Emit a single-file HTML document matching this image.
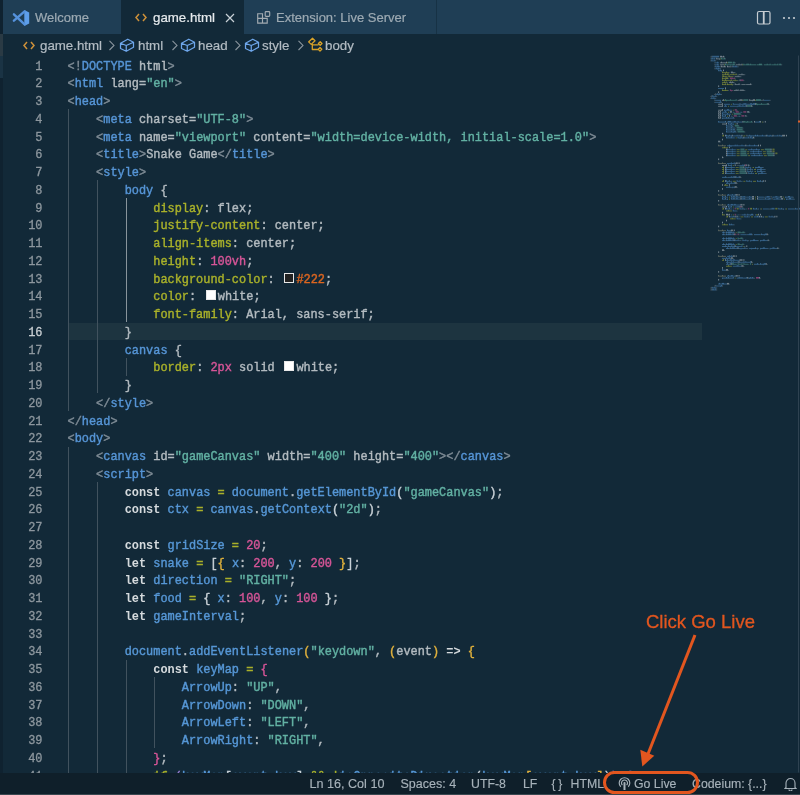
<!DOCTYPE html>
<html><head><meta charset="utf-8">
<style>
*{margin:0;padding:0;box-sizing:border-box}
html,body{width:800px;height:795px;overflow:hidden;background:#122938}
body{position:relative;font-family:"Liberation Sans",sans-serif;will-change:transform}
.abs{position:absolute}
#tabbar{position:absolute;left:0;top:0;width:800px;height:34px;background:#1f3e55}
.tab{position:absolute;top:0;height:34px;font-size:13px;color:#9daab3;white-space:nowrap}
.tab span{position:absolute;top:10px;line-height:16px;-webkit-text-stroke:0.2px currentColor}
#crumbs{position:absolute;left:0;top:35px;width:800px;height:21px;font-size:13.3px;color:#b3bcc3;white-space:nowrap}
#crumbs span{position:absolute;top:3px;line-height:16px;-webkit-text-stroke:0.2px currentColor}
.cl,.ln{position:absolute;height:17.75px;line-height:17.75px;font-family:"Liberation Mono",monospace;font-size:11.92px;white-space:pre}
.cl{left:67.5px;color:#b3bbc0;-webkit-text-stroke:0.4px currentColor}
.ln{left:0;width:42.5px;text-align:right;color:#8d979e;-webkit-text-stroke:0.3px currentColor}
.ln.cur{color:#c8ced2}
.p{color:#7f8c96}.t{color:#5695d6}.a{color:#b3bbc0}.s{color:#62b1a3}.pr{color:#a9b12a}.n{color:#d65597}
.h{color:#dd6620}.k{color:#d5dadd;font-weight:bold;-webkit-text-stroke:0}.v{color:#5697d6}.o{color:#a9b12a}.g{color:#e0b13c}.m{color:#d65597}.w{color:#c8d0d6}.u{color:#9b7fd6}
.sw{display:inline-block;width:10px;height:10px;margin:0 2px 0 2.5px;vertical-align:0px;border:1px solid #e8e8e8}
.swd{background:#222}.sww{background:#fff}
.ig{position:absolute;width:1px;background:#41525e}
.ig.act{background:#88949b}
#curline{position:absolute;left:68px;top:322.5px;width:634px;height:17.5px;background:#1d3440}
#status{position:absolute;left:0;top:773px;width:800px;height:22px;background:#0f1f2a;font-size:12.3px;color:#a7b2ba;white-space:nowrap}
#status span{position:absolute;top:3px;line-height:16px;-webkit-text-stroke:0.15px currentColor}
</style></head><body>
<div id="tabbar">
  <div class="abs" style="left:0;top:0;width:3px;height:34px;background:#0f2230"></div>
  <div class="tab" style="left:3px;width:118px;background:#1f3e55">
    <svg class="abs" style="left:-3px;top:0" width="40" height="35" viewBox="0 0 40 35">
      <path d="M24.3 10 L29.2 12.4 L29.2 23.4 L24.3 25.9 Z" fill="#5d9eea"/>
      <path d="M13.9 14.3 L24.6 24.4 M13.9 20.7 L24.6 11.4" stroke="#5592dc" stroke-width="2.4" stroke-linecap="round"/>
    </svg>
    <span style="left:32px">Welcome</span>
  </div>
  <div class="tab" style="left:121px;width:123px;background:#122938;color:#e6eaed">
    <svg class="abs" style="left:14px;top:13px" width="12" height="9" viewBox="0 0 12 9"><path d="M4 1 L1 4.5 L4 8 M8 1 L11 4.5 L8 8" stroke="#cf923a" stroke-width="1.5" fill="none"/></svg>
    <span style="left:32px;font-size:13.3px;-webkit-text-stroke:0.2px currentColor">game.html</span>
    <svg class="abs" style="left:104px;top:13px" width="10" height="10" viewBox="0 0 10 10"><path d="M1 1 L9 9 M9 1 L1 9" stroke="#c8d0d6" stroke-width="1.2"/></svg>
  </div>
  <div class="tab" style="left:244px;width:193px;background:#1f3e55;border-right:1px solid #173245">
    <svg class="abs" style="left:0;top:0" width="40" height="35" viewBox="244 0 40 35" fill="none" stroke="#a3abb1" stroke-width="1.15">
      <path d="M257.7 13.7 H262.5 V23.1 H257.7 Z M257.7 18.4 H267.2 V23.1 H262.5"/>
      <rect x="265.2" y="11.6" width="4.5" height="4.7" rx="0.8"/>
    </svg>
    <span style="left:32px">Extension: Live Server</span>
  </div>
  <svg class="abs" style="left:756px;top:10px" width="15" height="15" viewBox="0 0 15 15" fill="none" stroke="#c5ccd1" stroke-width="1.2"><rect x="1.5" y="1.5" width="12.5" height="12.5" rx="1.5"/><path d="M7.75 1.5 V14" stroke-width="1.8"/></svg>
  <svg class="abs" style="left:782px;top:16px" width="16" height="4" viewBox="0 0 16 4" fill="#c5ccd1"><circle cx="2" cy="2" r="1.1"/><circle cx="7" cy="2" r="1.1"/><circle cx="12" cy="2" r="1.1"/></svg>
</div>
<div class="abs" style="left:0;top:34px;width:3px;height:22px;background:#2a3a44"></div>
<div class="abs" style="left:0;top:56px;width:3px;height:22px;background:#1a3344"></div>
<div class="abs" style="left:0;top:78px;width:3px;height:695px;background:#0f2230"></div>
<div id="crumbs">
  <svg class="abs" style="left:23px;top:6px" width="12" height="9" viewBox="0 0 12 9"><path d="M4 1 L1 4.5 L4 8 M8 1 L11 4.5 L8 8" stroke="#cf923a" stroke-width="1.5" fill="none"/></svg>
  <span style="left:40px">game.html</span>
  <svg class="abs" style="left:108px;top:5px" width="8" height="11" viewBox="0 0 8 11"><path d="M1.5 0.8 L6 5.4 L1.5 10" stroke="#8a959d" stroke-width="1.1" fill="none"/></svg>
    <span style="left:138px">html</span>
  <svg class="abs" style="left:171px;top:5px" width="8" height="11" viewBox="0 0 8 11"><path d="M1.5 0.8 L6 5.4 L1.5 10" stroke="#8a959d" stroke-width="1.1" fill="none"/></svg>
    <span style="left:198px">head</span>
  <svg class="abs" style="left:234px;top:5px" width="8" height="11" viewBox="0 0 8 11"><path d="M1.5 0.8 L6 5.4 L1.5 10" stroke="#8a959d" stroke-width="1.1" fill="none"/></svg>
    <span style="left:262px">style</span>
  <svg class="abs" style="left:297px;top:5px" width="8" height="11" viewBox="0 0 8 11"><path d="M1.5 0.8 L6 5.4 L1.5 10" stroke="#8a959d" stroke-width="1.1" fill="none"/></svg>
    <span style="left:325px">body</span>
<svg class="abs" style="left:0;top:0;overflow:visible" width="800" height="56" viewBox="0 35 800 56"><g fill="none" stroke="#6ea6ea" stroke-width="1.25" stroke-linejoin="round"><path transform="translate(0 0)" d="M120.5 43.25 L127.75 39.25 L133.5 42.25 L133.5 47.25 L126.25 51.25 L120.5 48.5 Z M120.5 43.25 L126.25 45.5 L133.5 42.25 M126.25 45.5 V51.25"/><path transform="translate(61 0)" d="M120.5 43.25 L127.75 39.25 L133.5 42.25 L133.5 47.25 L126.25 51.25 L120.5 48.5 Z M120.5 43.25 L126.25 45.5 L133.5 42.25 M126.25 45.5 V51.25"/><path transform="translate(125 0)" d="M120.5 43.25 L127.75 39.25 L133.5 42.25 L133.5 47.25 L126.25 51.25 L120.5 48.5 Z M120.5 43.25 L126.25 45.5 L133.5 42.25 M126.25 45.5 V51.25"/></g><g fill="none" stroke="#d9a228" stroke-width="1.3" stroke-linejoin="round"><path d="M312.5 38.3 L315 40.8 L311.2 44.4 L308.6 41.9 Z M312.3 44 V49.5 H318.3 M312.3 44.9 H318.5 M320.2 41.7 L322 43.5 L320.2 45.3 L318.4 43.5 Z M320 47.5 L321.8 49.3 L320 51.1 L318.2 49.3 Z"/></g></svg>
</div>
<div id="curline"></div>
<div class="ig" style="left:68px;top:109.25px;height:301.75px"></div>
<div class="ig" style="left:97px;top:180.25px;height:213.00px"></div>
<div class="ig act" style="left:126px;top:198.00px;height:124.25px"></div>
<div class="ig" style="left:126px;top:357.75px;height:17.75px"></div>
<div class="ig" style="left:68px;top:446.50px;height:337.25px"></div>
<div class="ig" style="left:97px;top:482.00px;height:301.75px"></div>
<div class="ig" style="left:126px;top:659.50px;height:124.25px"></div>
<div class="ig" style="left:154px;top:677.25px;height:71.00px"></div>
<div class="ln" style="top:58.50px">1</div>
<div class="ln" style="top:76.25px">2</div>
<div class="ln" style="top:94.00px">3</div>
<div class="ln" style="top:111.75px">4</div>
<div class="ln" style="top:129.50px">5</div>
<div class="ln" style="top:147.25px">6</div>
<div class="ln" style="top:165.00px">7</div>
<div class="ln" style="top:182.75px">8</div>
<div class="ln" style="top:200.50px">9</div>
<div class="ln" style="top:218.25px">10</div>
<div class="ln" style="top:236.00px">11</div>
<div class="ln" style="top:253.75px">12</div>
<div class="ln" style="top:271.50px">13</div>
<div class="ln" style="top:289.25px">14</div>
<div class="ln" style="top:307.00px">15</div>
<div class="ln cur" style="top:324.75px">16</div>
<div class="ln" style="top:342.50px">17</div>
<div class="ln" style="top:360.25px">18</div>
<div class="ln" style="top:378.00px">19</div>
<div class="ln" style="top:395.75px">20</div>
<div class="ln" style="top:413.50px">21</div>
<div class="ln" style="top:431.25px">22</div>
<div class="ln" style="top:449.00px">23</div>
<div class="ln" style="top:466.75px">24</div>
<div class="ln" style="top:484.50px">25</div>
<div class="ln" style="top:502.25px">26</div>
<div class="ln" style="top:520.00px">27</div>
<div class="ln" style="top:537.75px">28</div>
<div class="ln" style="top:555.50px">29</div>
<div class="ln" style="top:573.25px">30</div>
<div class="ln" style="top:591.00px">31</div>
<div class="ln" style="top:608.75px">32</div>
<div class="ln" style="top:626.50px">33</div>
<div class="ln" style="top:644.25px">34</div>
<div class="ln" style="top:662.00px">35</div>
<div class="ln" style="top:679.75px">36</div>
<div class="ln" style="top:697.50px">37</div>
<div class="ln" style="top:715.25px">38</div>
<div class="ln" style="top:733.00px">39</div>
<div class="ln" style="top:750.75px">40</div>
<div class="ln" style="top:768.50px">41</div>
<div class="cl" style="top:58.50px"><span class="p">&lt;!</span><span class="t">DOCTYPE</span><span class="a"> html</span><span class="p">&gt;</span></div>
<div class="cl" style="top:76.25px"><span class="p">&lt;</span><span class="t">html</span><span class="a"> lang=</span><span class="s">&quot;en&quot;</span><span class="p">&gt;</span></div>
<div class="cl" style="top:94.00px"><span class="p">&lt;</span><span class="t">head</span><span class="p">&gt;</span></div>
<div class="cl" style="top:111.75px"><span class="p">    &lt;</span><span class="t">meta</span><span class="a"> charset=</span><span class="s">&quot;UTF-8&quot;</span><span class="p">&gt;</span></div>
<div class="cl" style="top:129.50px"><span class="p">    &lt;</span><span class="t">meta</span><span class="a"> name=</span><span class="s">&quot;viewport&quot;</span><span class="a"> content=</span><span class="s">&quot;width=device-width, initial-scale=1.0&quot;</span><span class="p">&gt;</span></div>
<div class="cl" style="top:147.25px"><span class="p">    &lt;</span><span class="t">title</span><span class="p">&gt;</span><span class="a">Snake Game</span><span class="p">&lt;/</span><span class="t">title</span><span class="p">&gt;</span></div>
<div class="cl" style="top:165.00px"><span class="p">    &lt;</span><span class="t">style</span><span class="p">&gt;</span></div>
<div class="cl" style="top:182.75px">        <span class="t">body</span><span class="a"> {</span></div>
<div class="cl" style="top:200.50px">            <span class="pr">display</span><span class="a">: flex;</span></div>
<div class="cl" style="top:218.25px">            <span class="pr">justify-content</span><span class="a">: center;</span></div>
<div class="cl" style="top:236.00px">            <span class="pr">align-items</span><span class="a">: center;</span></div>
<div class="cl" style="top:253.75px">            <span class="pr">height</span><span class="a">: </span><span class="n">100vh</span><span class="a">;</span></div>
<div class="cl" style="top:271.50px">            <span class="pr">background-color</span><span class="a">: </span><i class="sw swd"></i><span class="h">#222</span><span class="a">;</span></div>
<div class="cl" style="top:289.25px">            <span class="pr">color</span><span class="a">: </span><i class="sw sww"></i><span class="a">white;</span></div>
<div class="cl" style="top:307.00px">            <span class="pr">font-family</span><span class="a">: Arial, sans-serif;</span></div>
<div class="cl" style="top:324.75px">        <span class="a">}</span></div>
<div class="cl" style="top:342.50px">        <span class="t">canvas</span><span class="a"> {</span></div>
<div class="cl" style="top:360.25px">            <span class="pr">border</span><span class="a">: </span><span class="n">2px</span><span class="a"> solid </span><i class="sw sww"></i><span class="a">white;</span></div>
<div class="cl" style="top:378.00px">        <span class="a">}</span></div>
<div class="cl" style="top:395.75px"><span class="p">    &lt;/</span><span class="t">style</span><span class="p">&gt;</span></div>
<div class="cl" style="top:413.50px"><span class="p">&lt;/</span><span class="t">head</span><span class="p">&gt;</span></div>
<div class="cl" style="top:431.25px"><span class="p">&lt;</span><span class="t">body</span><span class="p">&gt;</span></div>
<div class="cl" style="top:449.00px"><span class="p">    &lt;</span><span class="t">canvas</span><span class="a"> id=</span><span class="s">&quot;gameCanvas&quot;</span><span class="a"> width=</span><span class="s">&quot;400&quot;</span><span class="a"> height=</span><span class="s">&quot;400&quot;</span><span class="p">&gt;&lt;/</span><span class="t">canvas</span><span class="p">&gt;</span></div>
<div class="cl" style="top:466.75px"><span class="p">    &lt;</span><span class="t">script</span><span class="p">&gt;</span></div>
<div class="cl" style="top:484.50px">        <span class="k">const</span><span class="v"> canvas</span><span class="o"> = </span><span class="v">document</span><span class="a">.</span><span class="v">getElementById</span><span class="w">(</span><span class="s">&quot;gameCanvas&quot;</span><span class="w">)</span><span class="a">;</span></div>
<div class="cl" style="top:502.25px">        <span class="k">const</span><span class="v"> ctx</span><span class="o"> = </span><span class="v">canvas</span><span class="a">.</span><span class="v">getContext</span><span class="w">(</span><span class="s">&quot;2d&quot;</span><span class="w">)</span><span class="a">;</span></div>
<div class="cl" style="top:520.00px"></div>
<div class="cl" style="top:537.75px">        <span class="k">const</span><span class="v"> gridSize</span><span class="o"> = </span><span class="n">20</span><span class="a">;</span></div>
<div class="cl" style="top:555.50px">        <span class="k">let</span><span class="v"> snake</span><span class="o"> = </span><span class="w">[</span><span class="g">{</span><span class="v"> x</span><span class="a">: </span><span class="n">200</span><span class="a">, </span><span class="v">y</span><span class="a">: </span><span class="n">200</span><span class="g"> }</span><span class="w">]</span><span class="a">;</span></div>
<div class="cl" style="top:573.25px">        <span class="k">let</span><span class="v"> direction</span><span class="o"> = </span><span class="s">&quot;RIGHT&quot;</span><span class="a">;</span></div>
<div class="cl" style="top:591.00px">        <span class="k">let</span><span class="v"> food</span><span class="o"> = </span><span class="w">{</span><span class="v"> x</span><span class="a">: </span><span class="n">100</span><span class="a">, </span><span class="v">y</span><span class="a">: </span><span class="n">100</span><span class="w"> }</span><span class="a">;</span></div>
<div class="cl" style="top:608.75px">        <span class="k">let</span><span class="v"> gameInterval</span><span class="a">;</span></div>
<div class="cl" style="top:626.50px"></div>
<div class="cl" style="top:644.25px">        <span class="v">document</span><span class="a">.</span><span class="v">addEventListener</span><span class="g">(</span><span class="s">&quot;keydown&quot;</span><span class="a">, </span><span class="g">(</span><span class="a">event</span><span class="g">)</span><span class="k"> =&gt; </span><span class="g">{</span></div>
<div class="cl" style="top:662.00px">            <span class="k">const</span><span class="v"> keyMap</span><span class="o"> = </span><span class="m">{</span></div>
<div class="cl" style="top:679.75px">                <span class="v">ArrowUp</span><span class="a">: </span><span class="s">&quot;UP&quot;</span><span class="a">,</span></div>
<div class="cl" style="top:697.50px">                <span class="v">ArrowDown</span><span class="a">: </span><span class="s">&quot;DOWN&quot;</span><span class="a">,</span></div>
<div class="cl" style="top:715.25px">                <span class="v">ArrowLeft</span><span class="a">: </span><span class="s">&quot;LEFT&quot;</span><span class="a">,</span></div>
<div class="cl" style="top:733.00px">                <span class="v">ArrowRight</span><span class="a">: </span><span class="s">&quot;RIGHT&quot;</span><span class="a">,</span></div>
<div class="cl" style="top:750.75px">            <span class="m">}</span><span class="a">;</span></div>
<div class="cl" style="top:768.50px">            <span class="o">if</span><span class="u"> (</span><span class="v">keyMap</span><span class="w">[</span><span class="v">event</span><span class="a">.</span><span class="v">key</span><span class="w">]</span><span class="o"> &amp;&amp; </span><span class="o">!</span><span class="v">isOppositeDirection</span><span class="w">(</span><span class="v">keyMap</span><span class="g">[</span><span class="v">event</span><span class="a">.</span><span class="v">key</span><span class="g">]</span><span class="w">)</span><span class="u">)</span><span class="u"> {</span></div>
<svg class="abs" style="left:0;top:0" width="800" height="795">
<g opacity="0.65"><rect x="710.50" y="56.40" width="0.85" height="1.0" fill="#7f8c96" fill-opacity="0.85"/>
<rect x="711.47" y="55.80" width="0.85" height="1.6" fill="#7f8c96" fill-opacity="1"/>
<rect x="712.44" y="55.80" width="0.85" height="1.6" fill="#5b9bd8" fill-opacity="1"/>
<rect x="713.41" y="55.80" width="0.85" height="1.6" fill="#5b9bd8" fill-opacity="1"/>
<rect x="714.38" y="55.80" width="0.85" height="1.6" fill="#5b9bd8" fill-opacity="1"/>
<rect x="715.35" y="55.80" width="0.85" height="1.6" fill="#5b9bd8" fill-opacity="1"/>
<rect x="716.32" y="55.80" width="0.85" height="1.6" fill="#5b9bd8" fill-opacity="1"/>
<rect x="717.29" y="55.80" width="0.85" height="1.6" fill="#5b9bd8" fill-opacity="1"/>
<rect x="718.26" y="55.80" width="0.85" height="1.6" fill="#5b9bd8" fill-opacity="1"/>
<rect x="720.20" y="55.80" width="0.85" height="1.6" fill="#c3cbd1" fill-opacity="1"/>
<rect x="721.17" y="55.80" width="0.85" height="1.6" fill="#c3cbd1" fill-opacity="1"/>
<rect x="722.14" y="56.40" width="0.85" height="1.0" fill="#c3cbd1" fill-opacity="0.85"/>
<rect x="723.11" y="55.80" width="0.85" height="1.6" fill="#c3cbd1" fill-opacity="1"/>
<rect x="724.08" y="56.40" width="0.85" height="1.0" fill="#7f8c96" fill-opacity="0.85"/>
<rect x="710.50" y="58.38" width="0.85" height="1.0" fill="#7f8c96" fill-opacity="0.85"/>
<rect x="711.47" y="57.77" width="0.85" height="1.6" fill="#5b9bd8" fill-opacity="1"/>
<rect x="712.44" y="57.77" width="0.85" height="1.6" fill="#5b9bd8" fill-opacity="1"/>
<rect x="713.41" y="58.38" width="0.85" height="1.0" fill="#5b9bd8" fill-opacity="0.85"/>
<rect x="714.38" y="57.77" width="0.85" height="1.6" fill="#5b9bd8" fill-opacity="1"/>
<rect x="716.32" y="57.77" width="0.85" height="1.6" fill="#c3cbd1" fill-opacity="1"/>
<rect x="717.29" y="58.38" width="0.85" height="1.0" fill="#c3cbd1" fill-opacity="0.85"/>
<rect x="718.26" y="58.38" width="0.85" height="1.0" fill="#c3cbd1" fill-opacity="0.85"/>
<rect x="719.23" y="58.27" width="0.85" height="1.5" fill="#c3cbd1" fill-opacity="0.85"/>
<rect x="720.20" y="58.38" width="0.85" height="1.0" fill="#b7bd3a" fill-opacity="0.85"/>
<rect x="721.17" y="57.77" width="0.85" height="1.6" fill="#62b1a3" fill-opacity="1"/>
<rect x="722.14" y="58.38" width="0.85" height="1.0" fill="#62b1a3" fill-opacity="0.85"/>
<rect x="723.11" y="58.38" width="0.85" height="1.0" fill="#62b1a3" fill-opacity="0.85"/>
<rect x="724.08" y="57.77" width="0.85" height="1.6" fill="#62b1a3" fill-opacity="1"/>
<rect x="725.05" y="58.38" width="0.85" height="1.0" fill="#7f8c96" fill-opacity="0.85"/>
<rect x="710.50" y="60.35" width="0.85" height="1.0" fill="#7f8c96" fill-opacity="0.85"/>
<rect x="711.47" y="59.75" width="0.85" height="1.6" fill="#5b9bd8" fill-opacity="1"/>
<rect x="712.44" y="60.35" width="0.85" height="1.0" fill="#5b9bd8" fill-opacity="0.85"/>
<rect x="713.41" y="60.35" width="0.85" height="1.0" fill="#5b9bd8" fill-opacity="0.85"/>
<rect x="714.38" y="59.75" width="0.85" height="1.6" fill="#5b9bd8" fill-opacity="1"/>
<rect x="715.35" y="60.35" width="0.85" height="1.0" fill="#7f8c96" fill-opacity="0.85"/>
<rect x="714.38" y="62.33" width="0.85" height="1.0" fill="#7f8c96" fill-opacity="0.85"/>
<rect x="715.35" y="62.33" width="0.85" height="1.0" fill="#5b9bd8" fill-opacity="0.85"/>
<rect x="716.32" y="62.33" width="0.85" height="1.0" fill="#5b9bd8" fill-opacity="0.85"/>
<rect x="717.29" y="61.73" width="0.85" height="1.6" fill="#5b9bd8" fill-opacity="1"/>
<rect x="718.26" y="62.33" width="0.85" height="1.0" fill="#5b9bd8" fill-opacity="0.85"/>
<rect x="720.20" y="62.33" width="0.85" height="1.0" fill="#c3cbd1" fill-opacity="0.85"/>
<rect x="721.17" y="61.73" width="0.85" height="1.6" fill="#c3cbd1" fill-opacity="1"/>
<rect x="722.14" y="62.33" width="0.85" height="1.0" fill="#c3cbd1" fill-opacity="0.85"/>
<rect x="723.11" y="62.33" width="0.85" height="1.0" fill="#c3cbd1" fill-opacity="0.85"/>
<rect x="724.08" y="62.33" width="0.85" height="1.0" fill="#c3cbd1" fill-opacity="0.85"/>
<rect x="725.05" y="62.33" width="0.85" height="1.0" fill="#c3cbd1" fill-opacity="0.85"/>
<rect x="726.02" y="61.73" width="0.85" height="1.6" fill="#c3cbd1" fill-opacity="1"/>
<rect x="726.99" y="62.33" width="0.85" height="1.0" fill="#b7bd3a" fill-opacity="0.85"/>
<rect x="727.96" y="61.73" width="0.85" height="1.6" fill="#62b1a3" fill-opacity="1"/>
<rect x="728.93" y="61.73" width="0.85" height="1.6" fill="#62b1a3" fill-opacity="1"/>
<rect x="729.90" y="61.73" width="0.85" height="1.6" fill="#62b1a3" fill-opacity="1"/>
<rect x="730.87" y="61.73" width="0.85" height="1.6" fill="#62b1a3" fill-opacity="1"/>
<rect x="731.84" y="62.53" width="0.85" height="0.8" fill="#62b1a3" fill-opacity="0.5"/>
<rect x="732.81" y="61.73" width="0.85" height="1.6" fill="#62b1a3" fill-opacity="1"/>
<rect x="733.78" y="61.73" width="0.85" height="1.6" fill="#62b1a3" fill-opacity="1"/>
<rect x="734.75" y="62.33" width="0.85" height="1.0" fill="#7f8c96" fill-opacity="0.85"/>
<rect x="714.38" y="64.30" width="0.85" height="1.0" fill="#7f8c96" fill-opacity="0.85"/>
<rect x="715.35" y="64.30" width="0.85" height="1.0" fill="#5b9bd8" fill-opacity="0.85"/>
<rect x="716.32" y="64.30" width="0.85" height="1.0" fill="#5b9bd8" fill-opacity="0.85"/>
<rect x="717.29" y="63.70" width="0.85" height="1.6" fill="#5b9bd8" fill-opacity="1"/>
<rect x="718.26" y="64.30" width="0.85" height="1.0" fill="#5b9bd8" fill-opacity="0.85"/>
<rect x="720.20" y="64.30" width="0.85" height="1.0" fill="#c3cbd1" fill-opacity="0.85"/>
<rect x="721.17" y="64.30" width="0.85" height="1.0" fill="#c3cbd1" fill-opacity="0.85"/>
<rect x="722.14" y="64.30" width="0.85" height="1.0" fill="#c3cbd1" fill-opacity="0.85"/>
<rect x="723.11" y="64.30" width="0.85" height="1.0" fill="#c3cbd1" fill-opacity="0.85"/>
<rect x="724.08" y="64.30" width="0.85" height="1.0" fill="#b7bd3a" fill-opacity="0.85"/>
<rect x="725.05" y="63.70" width="0.85" height="1.6" fill="#62b1a3" fill-opacity="1"/>
<rect x="726.02" y="64.30" width="0.85" height="1.0" fill="#62b1a3" fill-opacity="0.85"/>
<rect x="726.99" y="64.30" width="0.85" height="1.0" fill="#62b1a3" fill-opacity="0.85"/>
<rect x="727.96" y="64.30" width="0.85" height="1.0" fill="#62b1a3" fill-opacity="0.85"/>
<rect x="728.93" y="64.30" width="0.85" height="1.0" fill="#62b1a3" fill-opacity="0.85"/>
<rect x="729.90" y="64.20" width="0.85" height="1.5" fill="#62b1a3" fill-opacity="0.85"/>
<rect x="730.87" y="64.30" width="0.85" height="1.0" fill="#62b1a3" fill-opacity="0.85"/>
<rect x="731.84" y="64.30" width="0.85" height="1.0" fill="#62b1a3" fill-opacity="0.85"/>
<rect x="732.81" y="63.70" width="0.85" height="1.6" fill="#62b1a3" fill-opacity="1"/>
<rect x="733.78" y="63.70" width="0.85" height="1.6" fill="#62b1a3" fill-opacity="1"/>
<rect x="735.72" y="64.30" width="0.85" height="1.0" fill="#c3cbd1" fill-opacity="0.85"/>
<rect x="736.69" y="64.30" width="0.85" height="1.0" fill="#c3cbd1" fill-opacity="0.85"/>
<rect x="737.66" y="64.30" width="0.85" height="1.0" fill="#c3cbd1" fill-opacity="0.85"/>
<rect x="738.63" y="63.70" width="0.85" height="1.6" fill="#c3cbd1" fill-opacity="1"/>
<rect x="739.60" y="64.30" width="0.85" height="1.0" fill="#c3cbd1" fill-opacity="0.85"/>
<rect x="740.57" y="64.30" width="0.85" height="1.0" fill="#c3cbd1" fill-opacity="0.85"/>
<rect x="741.54" y="63.70" width="0.85" height="1.6" fill="#c3cbd1" fill-opacity="1"/>
<rect x="742.51" y="64.30" width="0.85" height="1.0" fill="#b7bd3a" fill-opacity="0.85"/>
<rect x="743.48" y="63.70" width="0.85" height="1.6" fill="#62b1a3" fill-opacity="1"/>
<rect x="744.45" y="64.30" width="0.85" height="1.0" fill="#62b1a3" fill-opacity="0.85"/>
<rect x="745.42" y="64.30" width="0.85" height="1.0" fill="#62b1a3" fill-opacity="0.85"/>
<rect x="746.39" y="63.70" width="0.85" height="1.6" fill="#62b1a3" fill-opacity="1"/>
<rect x="747.36" y="63.70" width="0.85" height="1.6" fill="#62b1a3" fill-opacity="1"/>
<rect x="748.33" y="63.70" width="0.85" height="1.6" fill="#62b1a3" fill-opacity="1"/>
<rect x="749.30" y="64.30" width="0.85" height="1.0" fill="#62b1a3" fill-opacity="0.85"/>
<rect x="750.27" y="63.70" width="0.85" height="1.6" fill="#62b1a3" fill-opacity="1"/>
<rect x="751.24" y="64.30" width="0.85" height="1.0" fill="#62b1a3" fill-opacity="0.85"/>
<rect x="752.21" y="64.30" width="0.85" height="1.0" fill="#62b1a3" fill-opacity="0.85"/>
<rect x="753.18" y="64.30" width="0.85" height="1.0" fill="#62b1a3" fill-opacity="0.85"/>
<rect x="754.15" y="64.30" width="0.85" height="1.0" fill="#62b1a3" fill-opacity="0.85"/>
<rect x="755.12" y="64.30" width="0.85" height="1.0" fill="#62b1a3" fill-opacity="0.85"/>
<rect x="756.09" y="64.50" width="0.85" height="0.8" fill="#62b1a3" fill-opacity="0.5"/>
<rect x="757.06" y="64.30" width="0.85" height="1.0" fill="#62b1a3" fill-opacity="0.85"/>
<rect x="758.03" y="64.30" width="0.85" height="1.0" fill="#62b1a3" fill-opacity="0.85"/>
<rect x="759.00" y="63.70" width="0.85" height="1.6" fill="#62b1a3" fill-opacity="1"/>
<rect x="759.97" y="63.70" width="0.85" height="1.6" fill="#62b1a3" fill-opacity="1"/>
<rect x="760.94" y="63.70" width="0.85" height="1.6" fill="#62b1a3" fill-opacity="1"/>
<rect x="761.91" y="64.50" width="0.85" height="0.8" fill="#62b1a3" fill-opacity="0.5"/>
<rect x="763.85" y="64.30" width="0.85" height="1.0" fill="#62b1a3" fill-opacity="0.85"/>
<rect x="764.82" y="64.30" width="0.85" height="1.0" fill="#62b1a3" fill-opacity="0.85"/>
<rect x="765.79" y="64.30" width="0.85" height="1.0" fill="#62b1a3" fill-opacity="0.85"/>
<rect x="766.76" y="63.70" width="0.85" height="1.6" fill="#62b1a3" fill-opacity="1"/>
<rect x="767.73" y="64.30" width="0.85" height="1.0" fill="#62b1a3" fill-opacity="0.85"/>
<rect x="768.70" y="64.30" width="0.85" height="1.0" fill="#62b1a3" fill-opacity="0.85"/>
<rect x="769.67" y="63.70" width="0.85" height="1.6" fill="#62b1a3" fill-opacity="1"/>
<rect x="770.64" y="64.50" width="0.85" height="0.8" fill="#62b1a3" fill-opacity="0.5"/>
<rect x="771.61" y="64.30" width="0.85" height="1.0" fill="#62b1a3" fill-opacity="0.85"/>
<rect x="772.58" y="64.30" width="0.85" height="1.0" fill="#62b1a3" fill-opacity="0.85"/>
<rect x="773.55" y="64.30" width="0.85" height="1.0" fill="#62b1a3" fill-opacity="0.85"/>
<rect x="774.52" y="63.70" width="0.85" height="1.6" fill="#62b1a3" fill-opacity="1"/>
<rect x="775.49" y="64.30" width="0.85" height="1.0" fill="#62b1a3" fill-opacity="0.85"/>
<rect x="776.46" y="64.30" width="0.85" height="1.0" fill="#62b1a3" fill-opacity="0.85"/>
<rect x="777.43" y="63.70" width="0.85" height="1.6" fill="#62b1a3" fill-opacity="1"/>
<rect x="778.40" y="64.50" width="0.85" height="0.8" fill="#62b1a3" fill-opacity="0.5"/>
<rect x="779.37" y="63.70" width="0.85" height="1.6" fill="#62b1a3" fill-opacity="1"/>
<rect x="780.34" y="63.70" width="0.85" height="1.6" fill="#62b1a3" fill-opacity="1"/>
<rect x="781.31" y="64.30" width="0.85" height="1.0" fill="#7f8c96" fill-opacity="0.85"/>
<rect x="714.38" y="66.28" width="0.85" height="1.0" fill="#7f8c96" fill-opacity="0.85"/>
<rect x="715.35" y="65.68" width="0.85" height="1.6" fill="#5b9bd8" fill-opacity="1"/>
<rect x="716.32" y="66.28" width="0.85" height="1.0" fill="#5b9bd8" fill-opacity="0.85"/>
<rect x="717.29" y="65.68" width="0.85" height="1.6" fill="#5b9bd8" fill-opacity="1"/>
<rect x="718.26" y="65.68" width="0.85" height="1.6" fill="#5b9bd8" fill-opacity="1"/>
<rect x="719.23" y="66.28" width="0.85" height="1.0" fill="#5b9bd8" fill-opacity="0.85"/>
<rect x="720.20" y="66.28" width="0.85" height="1.0" fill="#7f8c96" fill-opacity="0.85"/>
<rect x="721.17" y="65.68" width="0.85" height="1.6" fill="#c3cbd1" fill-opacity="1"/>
<rect x="722.14" y="66.28" width="0.85" height="1.0" fill="#c3cbd1" fill-opacity="0.85"/>
<rect x="723.11" y="66.28" width="0.85" height="1.0" fill="#c3cbd1" fill-opacity="0.85"/>
<rect x="724.08" y="65.68" width="0.85" height="1.6" fill="#c3cbd1" fill-opacity="1"/>
<rect x="725.05" y="66.28" width="0.85" height="1.0" fill="#c3cbd1" fill-opacity="0.85"/>
<rect x="726.99" y="65.68" width="0.85" height="1.6" fill="#c3cbd1" fill-opacity="1"/>
<rect x="727.96" y="66.28" width="0.85" height="1.0" fill="#c3cbd1" fill-opacity="0.85"/>
<rect x="728.93" y="66.28" width="0.85" height="1.0" fill="#c3cbd1" fill-opacity="0.85"/>
<rect x="729.90" y="66.28" width="0.85" height="1.0" fill="#c3cbd1" fill-opacity="0.85"/>
<rect x="730.87" y="66.28" width="0.85" height="1.0" fill="#7f8c96" fill-opacity="0.85"/>
<rect x="731.84" y="65.68" width="0.85" height="1.6" fill="#7f8c96" fill-opacity="1"/>
<rect x="732.81" y="65.68" width="0.85" height="1.6" fill="#5b9bd8" fill-opacity="1"/>
<rect x="733.78" y="66.28" width="0.85" height="1.0" fill="#5b9bd8" fill-opacity="0.85"/>
<rect x="734.75" y="65.68" width="0.85" height="1.6" fill="#5b9bd8" fill-opacity="1"/>
<rect x="735.72" y="65.68" width="0.85" height="1.6" fill="#5b9bd8" fill-opacity="1"/>
<rect x="736.69" y="66.28" width="0.85" height="1.0" fill="#5b9bd8" fill-opacity="0.85"/>
<rect x="737.66" y="66.28" width="0.85" height="1.0" fill="#7f8c96" fill-opacity="0.85"/>
<rect x="714.38" y="68.25" width="0.85" height="1.0" fill="#7f8c96" fill-opacity="0.85"/>
<rect x="715.35" y="68.25" width="0.85" height="1.0" fill="#5b9bd8" fill-opacity="0.85"/>
<rect x="716.32" y="67.65" width="0.85" height="1.6" fill="#5b9bd8" fill-opacity="1"/>
<rect x="717.29" y="68.15" width="0.85" height="1.5" fill="#5b9bd8" fill-opacity="0.85"/>
<rect x="718.26" y="67.65" width="0.85" height="1.6" fill="#5b9bd8" fill-opacity="1"/>
<rect x="719.23" y="68.25" width="0.85" height="1.0" fill="#5b9bd8" fill-opacity="0.85"/>
<rect x="720.20" y="68.25" width="0.85" height="1.0" fill="#7f8c96" fill-opacity="0.85"/>
<rect x="718.26" y="69.62" width="0.85" height="1.6" fill="#5b9bd8" fill-opacity="1"/>
<rect x="719.23" y="70.22" width="0.85" height="1.0" fill="#5b9bd8" fill-opacity="0.85"/>
<rect x="720.20" y="69.62" width="0.85" height="1.6" fill="#5b9bd8" fill-opacity="1"/>
<rect x="721.17" y="70.12" width="0.85" height="1.5" fill="#5b9bd8" fill-opacity="0.85"/>
<rect x="723.11" y="69.62" width="0.85" height="1.6" fill="#c3cbd1" fill-opacity="1"/>
<rect x="722.14" y="71.60" width="0.85" height="1.6" fill="#b7bd3a" fill-opacity="1"/>
<rect x="723.11" y="72.20" width="0.85" height="1.0" fill="#b7bd3a" fill-opacity="0.85"/>
<rect x="724.08" y="72.20" width="0.85" height="1.0" fill="#b7bd3a" fill-opacity="0.85"/>
<rect x="725.05" y="72.10" width="0.85" height="1.5" fill="#b7bd3a" fill-opacity="0.85"/>
<rect x="726.02" y="71.60" width="0.85" height="1.6" fill="#b7bd3a" fill-opacity="1"/>
<rect x="726.99" y="72.20" width="0.85" height="1.0" fill="#b7bd3a" fill-opacity="0.85"/>
<rect x="727.96" y="72.10" width="0.85" height="1.5" fill="#b7bd3a" fill-opacity="0.85"/>
<rect x="728.93" y="72.40" width="0.85" height="0.8" fill="#c3cbd1" fill-opacity="0.5"/>
<rect x="730.87" y="71.60" width="0.85" height="1.6" fill="#c3cbd1" fill-opacity="1"/>
<rect x="731.84" y="71.60" width="0.85" height="1.6" fill="#c3cbd1" fill-opacity="1"/>
<rect x="732.81" y="72.20" width="0.85" height="1.0" fill="#c3cbd1" fill-opacity="0.85"/>
<rect x="733.78" y="72.20" width="0.85" height="1.0" fill="#c3cbd1" fill-opacity="0.85"/>
<rect x="734.75" y="72.40" width="0.85" height="0.8" fill="#c3cbd1" fill-opacity="0.5"/>
<rect x="722.14" y="74.08" width="0.85" height="1.5" fill="#b7bd3a" fill-opacity="0.85"/>
<rect x="723.11" y="74.17" width="0.85" height="1.0" fill="#b7bd3a" fill-opacity="0.85"/>
<rect x="724.08" y="74.17" width="0.85" height="1.0" fill="#b7bd3a" fill-opacity="0.85"/>
<rect x="725.05" y="73.58" width="0.85" height="1.6" fill="#b7bd3a" fill-opacity="1"/>
<rect x="726.02" y="74.17" width="0.85" height="1.0" fill="#b7bd3a" fill-opacity="0.85"/>
<rect x="726.99" y="73.58" width="0.85" height="1.6" fill="#b7bd3a" fill-opacity="1"/>
<rect x="727.96" y="74.08" width="0.85" height="1.5" fill="#b7bd3a" fill-opacity="0.85"/>
<rect x="728.93" y="74.38" width="0.85" height="0.8" fill="#b7bd3a" fill-opacity="0.5"/>
<rect x="729.90" y="74.17" width="0.85" height="1.0" fill="#b7bd3a" fill-opacity="0.85"/>
<rect x="730.87" y="74.17" width="0.85" height="1.0" fill="#b7bd3a" fill-opacity="0.85"/>
<rect x="731.84" y="74.17" width="0.85" height="1.0" fill="#b7bd3a" fill-opacity="0.85"/>
<rect x="732.81" y="73.58" width="0.85" height="1.6" fill="#b7bd3a" fill-opacity="1"/>
<rect x="733.78" y="74.17" width="0.85" height="1.0" fill="#b7bd3a" fill-opacity="0.85"/>
<rect x="734.75" y="74.17" width="0.85" height="1.0" fill="#b7bd3a" fill-opacity="0.85"/>
<rect x="735.72" y="73.58" width="0.85" height="1.6" fill="#b7bd3a" fill-opacity="1"/>
<rect x="736.69" y="74.38" width="0.85" height="0.8" fill="#c3cbd1" fill-opacity="0.5"/>
<rect x="738.63" y="74.17" width="0.85" height="1.0" fill="#c3cbd1" fill-opacity="0.85"/>
<rect x="739.60" y="74.17" width="0.85" height="1.0" fill="#c3cbd1" fill-opacity="0.85"/>
<rect x="740.57" y="74.17" width="0.85" height="1.0" fill="#c3cbd1" fill-opacity="0.85"/>
<rect x="741.54" y="73.58" width="0.85" height="1.6" fill="#c3cbd1" fill-opacity="1"/>
<rect x="742.51" y="74.17" width="0.85" height="1.0" fill="#c3cbd1" fill-opacity="0.85"/>
<rect x="743.48" y="74.17" width="0.85" height="1.0" fill="#c3cbd1" fill-opacity="0.85"/>
<rect x="744.45" y="74.38" width="0.85" height="0.8" fill="#c3cbd1" fill-opacity="0.5"/>
<rect x="722.14" y="76.15" width="0.85" height="1.0" fill="#b7bd3a" fill-opacity="0.85"/>
<rect x="723.11" y="75.55" width="0.85" height="1.6" fill="#b7bd3a" fill-opacity="1"/>
<rect x="724.08" y="76.15" width="0.85" height="1.0" fill="#b7bd3a" fill-opacity="0.85"/>
<rect x="725.05" y="76.05" width="0.85" height="1.5" fill="#b7bd3a" fill-opacity="0.85"/>
<rect x="726.02" y="76.15" width="0.85" height="1.0" fill="#b7bd3a" fill-opacity="0.85"/>
<rect x="726.99" y="76.35" width="0.85" height="0.8" fill="#b7bd3a" fill-opacity="0.5"/>
<rect x="727.96" y="76.15" width="0.85" height="1.0" fill="#b7bd3a" fill-opacity="0.85"/>
<rect x="728.93" y="75.55" width="0.85" height="1.6" fill="#b7bd3a" fill-opacity="1"/>
<rect x="729.90" y="76.15" width="0.85" height="1.0" fill="#b7bd3a" fill-opacity="0.85"/>
<rect x="730.87" y="76.15" width="0.85" height="1.0" fill="#b7bd3a" fill-opacity="0.85"/>
<rect x="731.84" y="76.15" width="0.85" height="1.0" fill="#b7bd3a" fill-opacity="0.85"/>
<rect x="732.81" y="76.35" width="0.85" height="0.8" fill="#c3cbd1" fill-opacity="0.5"/>
<rect x="734.75" y="76.15" width="0.85" height="1.0" fill="#c3cbd1" fill-opacity="0.85"/>
<rect x="735.72" y="76.15" width="0.85" height="1.0" fill="#c3cbd1" fill-opacity="0.85"/>
<rect x="736.69" y="76.15" width="0.85" height="1.0" fill="#c3cbd1" fill-opacity="0.85"/>
<rect x="737.66" y="75.55" width="0.85" height="1.6" fill="#c3cbd1" fill-opacity="1"/>
<rect x="738.63" y="76.15" width="0.85" height="1.0" fill="#c3cbd1" fill-opacity="0.85"/>
<rect x="739.60" y="76.15" width="0.85" height="1.0" fill="#c3cbd1" fill-opacity="0.85"/>
<rect x="740.57" y="76.35" width="0.85" height="0.8" fill="#c3cbd1" fill-opacity="0.5"/>
<rect x="722.14" y="77.53" width="0.85" height="1.6" fill="#b7bd3a" fill-opacity="1"/>
<rect x="723.11" y="78.12" width="0.85" height="1.0" fill="#b7bd3a" fill-opacity="0.85"/>
<rect x="724.08" y="78.12" width="0.85" height="1.0" fill="#b7bd3a" fill-opacity="0.85"/>
<rect x="725.05" y="78.03" width="0.85" height="1.5" fill="#b7bd3a" fill-opacity="0.85"/>
<rect x="726.02" y="77.53" width="0.85" height="1.6" fill="#b7bd3a" fill-opacity="1"/>
<rect x="726.99" y="77.53" width="0.85" height="1.6" fill="#b7bd3a" fill-opacity="1"/>
<rect x="727.96" y="78.33" width="0.85" height="0.8" fill="#c3cbd1" fill-opacity="0.5"/>
<rect x="729.90" y="77.53" width="0.85" height="1.6" fill="#d65597" fill-opacity="1"/>
<rect x="730.87" y="77.53" width="0.85" height="1.6" fill="#d65597" fill-opacity="1"/>
<rect x="731.84" y="77.53" width="0.85" height="1.6" fill="#d65597" fill-opacity="1"/>
<rect x="732.81" y="78.12" width="0.85" height="1.0" fill="#d65597" fill-opacity="0.85"/>
<rect x="733.78" y="77.53" width="0.85" height="1.6" fill="#d65597" fill-opacity="1"/>
<rect x="734.75" y="78.33" width="0.85" height="0.8" fill="#c3cbd1" fill-opacity="0.5"/>
<rect x="722.14" y="79.50" width="0.85" height="1.6" fill="#b7bd3a" fill-opacity="1"/>
<rect x="723.11" y="80.10" width="0.85" height="1.0" fill="#b7bd3a" fill-opacity="0.85"/>
<rect x="724.08" y="80.10" width="0.85" height="1.0" fill="#b7bd3a" fill-opacity="0.85"/>
<rect x="725.05" y="79.50" width="0.85" height="1.6" fill="#b7bd3a" fill-opacity="1"/>
<rect x="726.02" y="80.00" width="0.85" height="1.5" fill="#b7bd3a" fill-opacity="0.85"/>
<rect x="726.99" y="80.10" width="0.85" height="1.0" fill="#b7bd3a" fill-opacity="0.85"/>
<rect x="727.96" y="80.10" width="0.85" height="1.0" fill="#b7bd3a" fill-opacity="0.85"/>
<rect x="728.93" y="80.10" width="0.85" height="1.0" fill="#b7bd3a" fill-opacity="0.85"/>
<rect x="729.90" y="80.10" width="0.85" height="1.0" fill="#b7bd3a" fill-opacity="0.85"/>
<rect x="730.87" y="79.50" width="0.85" height="1.6" fill="#b7bd3a" fill-opacity="1"/>
<rect x="731.84" y="80.30" width="0.85" height="0.8" fill="#b7bd3a" fill-opacity="0.5"/>
<rect x="732.81" y="80.10" width="0.85" height="1.0" fill="#b7bd3a" fill-opacity="0.85"/>
<rect x="733.78" y="80.10" width="0.85" height="1.0" fill="#b7bd3a" fill-opacity="0.85"/>
<rect x="734.75" y="79.50" width="0.85" height="1.6" fill="#b7bd3a" fill-opacity="1"/>
<rect x="735.72" y="80.10" width="0.85" height="1.0" fill="#b7bd3a" fill-opacity="0.85"/>
<rect x="736.69" y="80.10" width="0.85" height="1.0" fill="#b7bd3a" fill-opacity="0.85"/>
<rect x="737.66" y="80.30" width="0.85" height="0.8" fill="#c3cbd1" fill-opacity="0.5"/>
<rect x="739.60" y="79.50" width="0.85" height="1.6" fill="#c3cbd1" fill-opacity="1"/>
<rect x="740.57" y="79.50" width="0.85" height="1.6" fill="#d65597" fill-opacity="1"/>
<rect x="741.54" y="79.50" width="0.85" height="1.6" fill="#d65597" fill-opacity="1"/>
<rect x="742.51" y="79.50" width="0.85" height="1.6" fill="#d65597" fill-opacity="1"/>
<rect x="743.48" y="80.30" width="0.85" height="0.8" fill="#c3cbd1" fill-opacity="0.5"/>
<rect x="722.14" y="82.08" width="0.85" height="1.0" fill="#b7bd3a" fill-opacity="0.85"/>
<rect x="723.11" y="82.08" width="0.85" height="1.0" fill="#b7bd3a" fill-opacity="0.85"/>
<rect x="724.08" y="81.48" width="0.85" height="1.6" fill="#b7bd3a" fill-opacity="1"/>
<rect x="725.05" y="82.08" width="0.85" height="1.0" fill="#b7bd3a" fill-opacity="0.85"/>
<rect x="726.02" y="82.08" width="0.85" height="1.0" fill="#b7bd3a" fill-opacity="0.85"/>
<rect x="726.99" y="82.28" width="0.85" height="0.8" fill="#c3cbd1" fill-opacity="0.5"/>
<rect x="728.93" y="82.08" width="0.85" height="1.0" fill="#c3cbd1" fill-opacity="0.85"/>
<rect x="729.90" y="81.48" width="0.85" height="1.6" fill="#c3cbd1" fill-opacity="1"/>
<rect x="730.87" y="82.08" width="0.85" height="1.0" fill="#c3cbd1" fill-opacity="0.85"/>
<rect x="731.84" y="81.48" width="0.85" height="1.6" fill="#c3cbd1" fill-opacity="1"/>
<rect x="732.81" y="82.08" width="0.85" height="1.0" fill="#c3cbd1" fill-opacity="0.85"/>
<rect x="733.78" y="82.28" width="0.85" height="0.8" fill="#c3cbd1" fill-opacity="0.5"/>
<rect x="722.14" y="83.45" width="0.85" height="1.6" fill="#b7bd3a" fill-opacity="1"/>
<rect x="723.11" y="84.05" width="0.85" height="1.0" fill="#b7bd3a" fill-opacity="0.85"/>
<rect x="724.08" y="84.05" width="0.85" height="1.0" fill="#b7bd3a" fill-opacity="0.85"/>
<rect x="725.05" y="83.45" width="0.85" height="1.6" fill="#b7bd3a" fill-opacity="1"/>
<rect x="726.02" y="84.25" width="0.85" height="0.8" fill="#b7bd3a" fill-opacity="0.5"/>
<rect x="726.99" y="83.45" width="0.85" height="1.6" fill="#b7bd3a" fill-opacity="1"/>
<rect x="727.96" y="84.05" width="0.85" height="1.0" fill="#b7bd3a" fill-opacity="0.85"/>
<rect x="728.93" y="84.05" width="0.85" height="1.0" fill="#b7bd3a" fill-opacity="0.85"/>
<rect x="729.90" y="84.05" width="0.85" height="1.0" fill="#b7bd3a" fill-opacity="0.85"/>
<rect x="730.87" y="83.45" width="0.85" height="1.6" fill="#b7bd3a" fill-opacity="1"/>
<rect x="731.84" y="83.95" width="0.85" height="1.5" fill="#b7bd3a" fill-opacity="0.85"/>
<rect x="732.81" y="84.25" width="0.85" height="0.8" fill="#c3cbd1" fill-opacity="0.5"/>
<rect x="734.75" y="83.45" width="0.85" height="1.6" fill="#c3cbd1" fill-opacity="1"/>
<rect x="735.72" y="84.05" width="0.85" height="1.0" fill="#c3cbd1" fill-opacity="0.85"/>
<rect x="736.69" y="84.05" width="0.85" height="1.0" fill="#c3cbd1" fill-opacity="0.85"/>
<rect x="737.66" y="84.05" width="0.85" height="1.0" fill="#c3cbd1" fill-opacity="0.85"/>
<rect x="738.63" y="83.45" width="0.85" height="1.6" fill="#c3cbd1" fill-opacity="1"/>
<rect x="739.60" y="84.25" width="0.85" height="0.8" fill="#c3cbd1" fill-opacity="0.5"/>
<rect x="741.54" y="84.05" width="0.85" height="1.0" fill="#c3cbd1" fill-opacity="0.85"/>
<rect x="742.51" y="84.05" width="0.85" height="1.0" fill="#c3cbd1" fill-opacity="0.85"/>
<rect x="743.48" y="84.05" width="0.85" height="1.0" fill="#c3cbd1" fill-opacity="0.85"/>
<rect x="744.45" y="84.05" width="0.85" height="1.0" fill="#c3cbd1" fill-opacity="0.85"/>
<rect x="745.42" y="84.25" width="0.85" height="0.8" fill="#c3cbd1" fill-opacity="0.5"/>
<rect x="746.39" y="84.05" width="0.85" height="1.0" fill="#c3cbd1" fill-opacity="0.85"/>
<rect x="747.36" y="84.05" width="0.85" height="1.0" fill="#c3cbd1" fill-opacity="0.85"/>
<rect x="748.33" y="84.05" width="0.85" height="1.0" fill="#c3cbd1" fill-opacity="0.85"/>
<rect x="749.30" y="84.05" width="0.85" height="1.0" fill="#c3cbd1" fill-opacity="0.85"/>
<rect x="750.27" y="83.45" width="0.85" height="1.6" fill="#c3cbd1" fill-opacity="1"/>
<rect x="751.24" y="84.25" width="0.85" height="0.8" fill="#c3cbd1" fill-opacity="0.5"/>
<rect x="718.26" y="85.43" width="0.85" height="1.6" fill="#c3cbd1" fill-opacity="1"/>
<rect x="718.26" y="88.00" width="0.85" height="1.0" fill="#5b9bd8" fill-opacity="0.85"/>
<rect x="719.23" y="88.00" width="0.85" height="1.0" fill="#5b9bd8" fill-opacity="0.85"/>
<rect x="720.20" y="88.00" width="0.85" height="1.0" fill="#5b9bd8" fill-opacity="0.85"/>
<rect x="721.17" y="88.00" width="0.85" height="1.0" fill="#5b9bd8" fill-opacity="0.85"/>
<rect x="722.14" y="88.00" width="0.85" height="1.0" fill="#5b9bd8" fill-opacity="0.85"/>
<rect x="723.11" y="88.00" width="0.85" height="1.0" fill="#5b9bd8" fill-opacity="0.85"/>
<rect x="725.05" y="87.40" width="0.85" height="1.6" fill="#c3cbd1" fill-opacity="1"/>
<rect x="722.14" y="89.38" width="0.85" height="1.6" fill="#b7bd3a" fill-opacity="1"/>
<rect x="723.11" y="89.97" width="0.85" height="1.0" fill="#b7bd3a" fill-opacity="0.85"/>
<rect x="724.08" y="89.97" width="0.85" height="1.0" fill="#b7bd3a" fill-opacity="0.85"/>
<rect x="725.05" y="89.38" width="0.85" height="1.6" fill="#b7bd3a" fill-opacity="1"/>
<rect x="726.02" y="89.97" width="0.85" height="1.0" fill="#b7bd3a" fill-opacity="0.85"/>
<rect x="726.99" y="89.97" width="0.85" height="1.0" fill="#b7bd3a" fill-opacity="0.85"/>
<rect x="727.96" y="90.17" width="0.85" height="0.8" fill="#c3cbd1" fill-opacity="0.5"/>
<rect x="729.90" y="89.38" width="0.85" height="1.6" fill="#d65597" fill-opacity="1"/>
<rect x="730.87" y="89.88" width="0.85" height="1.5" fill="#d65597" fill-opacity="0.85"/>
<rect x="731.84" y="89.97" width="0.85" height="1.0" fill="#d65597" fill-opacity="0.85"/>
<rect x="733.78" y="89.97" width="0.85" height="1.0" fill="#c3cbd1" fill-opacity="0.85"/>
<rect x="734.75" y="89.97" width="0.85" height="1.0" fill="#c3cbd1" fill-opacity="0.85"/>
<rect x="735.72" y="89.38" width="0.85" height="1.6" fill="#c3cbd1" fill-opacity="1"/>
<rect x="736.69" y="89.97" width="0.85" height="1.0" fill="#c3cbd1" fill-opacity="0.85"/>
<rect x="737.66" y="89.38" width="0.85" height="1.6" fill="#c3cbd1" fill-opacity="1"/>
<rect x="739.60" y="89.97" width="0.85" height="1.0" fill="#c3cbd1" fill-opacity="0.85"/>
<rect x="740.57" y="89.38" width="0.85" height="1.6" fill="#c3cbd1" fill-opacity="1"/>
<rect x="741.54" y="89.97" width="0.85" height="1.0" fill="#c3cbd1" fill-opacity="0.85"/>
<rect x="742.51" y="89.38" width="0.85" height="1.6" fill="#c3cbd1" fill-opacity="1"/>
<rect x="743.48" y="89.97" width="0.85" height="1.0" fill="#c3cbd1" fill-opacity="0.85"/>
<rect x="744.45" y="90.17" width="0.85" height="0.8" fill="#c3cbd1" fill-opacity="0.5"/>
<rect x="718.26" y="91.35" width="0.85" height="1.6" fill="#c3cbd1" fill-opacity="1"/>
<rect x="714.38" y="93.92" width="0.85" height="1.0" fill="#7f8c96" fill-opacity="0.85"/>
<rect x="715.35" y="93.33" width="0.85" height="1.6" fill="#7f8c96" fill-opacity="1"/>
<rect x="716.32" y="93.92" width="0.85" height="1.0" fill="#5b9bd8" fill-opacity="0.85"/>
<rect x="717.29" y="93.33" width="0.85" height="1.6" fill="#5b9bd8" fill-opacity="1"/>
<rect x="718.26" y="93.83" width="0.85" height="1.5" fill="#5b9bd8" fill-opacity="0.85"/>
<rect x="719.23" y="93.33" width="0.85" height="1.6" fill="#5b9bd8" fill-opacity="1"/>
<rect x="720.20" y="93.92" width="0.85" height="1.0" fill="#5b9bd8" fill-opacity="0.85"/>
<rect x="721.17" y="93.92" width="0.85" height="1.0" fill="#7f8c96" fill-opacity="0.85"/>
<rect x="710.50" y="95.90" width="0.85" height="1.0" fill="#7f8c96" fill-opacity="0.85"/>
<rect x="711.47" y="95.30" width="0.85" height="1.6" fill="#7f8c96" fill-opacity="1"/>
<rect x="712.44" y="95.30" width="0.85" height="1.6" fill="#5b9bd8" fill-opacity="1"/>
<rect x="713.41" y="95.90" width="0.85" height="1.0" fill="#5b9bd8" fill-opacity="0.85"/>
<rect x="714.38" y="95.90" width="0.85" height="1.0" fill="#5b9bd8" fill-opacity="0.85"/>
<rect x="715.35" y="95.30" width="0.85" height="1.6" fill="#5b9bd8" fill-opacity="1"/>
<rect x="716.32" y="95.90" width="0.85" height="1.0" fill="#7f8c96" fill-opacity="0.85"/>
<rect x="710.50" y="97.88" width="0.85" height="1.0" fill="#7f8c96" fill-opacity="0.85"/>
<rect x="711.47" y="97.28" width="0.85" height="1.6" fill="#5b9bd8" fill-opacity="1"/>
<rect x="712.44" y="97.88" width="0.85" height="1.0" fill="#5b9bd8" fill-opacity="0.85"/>
<rect x="713.41" y="97.28" width="0.85" height="1.6" fill="#5b9bd8" fill-opacity="1"/>
<rect x="714.38" y="97.78" width="0.85" height="1.5" fill="#5b9bd8" fill-opacity="0.85"/>
<rect x="715.35" y="97.88" width="0.85" height="1.0" fill="#7f8c96" fill-opacity="0.85"/>
<rect x="714.38" y="99.85" width="0.85" height="1.0" fill="#7f8c96" fill-opacity="0.85"/>
<rect x="715.35" y="99.85" width="0.85" height="1.0" fill="#5b9bd8" fill-opacity="0.85"/>
<rect x="716.32" y="99.85" width="0.85" height="1.0" fill="#5b9bd8" fill-opacity="0.85"/>
<rect x="717.29" y="99.85" width="0.85" height="1.0" fill="#5b9bd8" fill-opacity="0.85"/>
<rect x="718.26" y="99.85" width="0.85" height="1.0" fill="#5b9bd8" fill-opacity="0.85"/>
<rect x="719.23" y="99.85" width="0.85" height="1.0" fill="#5b9bd8" fill-opacity="0.85"/>
<rect x="720.20" y="99.85" width="0.85" height="1.0" fill="#5b9bd8" fill-opacity="0.85"/>
<rect x="722.14" y="99.85" width="0.85" height="1.0" fill="#c3cbd1" fill-opacity="0.85"/>
<rect x="723.11" y="99.25" width="0.85" height="1.6" fill="#c3cbd1" fill-opacity="1"/>
<rect x="724.08" y="99.85" width="0.85" height="1.0" fill="#b7bd3a" fill-opacity="0.85"/>
<rect x="725.05" y="99.25" width="0.85" height="1.6" fill="#62b1a3" fill-opacity="1"/>
<rect x="726.02" y="99.75" width="0.85" height="1.5" fill="#62b1a3" fill-opacity="0.85"/>
<rect x="726.99" y="99.85" width="0.85" height="1.0" fill="#62b1a3" fill-opacity="0.85"/>
<rect x="727.96" y="99.85" width="0.85" height="1.0" fill="#62b1a3" fill-opacity="0.85"/>
<rect x="728.93" y="99.85" width="0.85" height="1.0" fill="#62b1a3" fill-opacity="0.85"/>
<rect x="729.90" y="99.25" width="0.85" height="1.6" fill="#62b1a3" fill-opacity="1"/>
<rect x="730.87" y="99.85" width="0.85" height="1.0" fill="#62b1a3" fill-opacity="0.85"/>
<rect x="731.84" y="99.85" width="0.85" height="1.0" fill="#62b1a3" fill-opacity="0.85"/>
<rect x="732.81" y="99.85" width="0.85" height="1.0" fill="#62b1a3" fill-opacity="0.85"/>
<rect x="733.78" y="99.85" width="0.85" height="1.0" fill="#62b1a3" fill-opacity="0.85"/>
<rect x="734.75" y="99.85" width="0.85" height="1.0" fill="#62b1a3" fill-opacity="0.85"/>
<rect x="735.72" y="99.25" width="0.85" height="1.6" fill="#62b1a3" fill-opacity="1"/>
<rect x="737.66" y="99.85" width="0.85" height="1.0" fill="#c3cbd1" fill-opacity="0.85"/>
<rect x="738.63" y="99.85" width="0.85" height="1.0" fill="#c3cbd1" fill-opacity="0.85"/>
<rect x="739.60" y="99.25" width="0.85" height="1.6" fill="#c3cbd1" fill-opacity="1"/>
<rect x="740.57" y="99.25" width="0.85" height="1.6" fill="#c3cbd1" fill-opacity="1"/>
<rect x="741.54" y="99.25" width="0.85" height="1.6" fill="#c3cbd1" fill-opacity="1"/>
<rect x="742.51" y="99.85" width="0.85" height="1.0" fill="#b7bd3a" fill-opacity="0.85"/>
<rect x="743.48" y="99.25" width="0.85" height="1.6" fill="#62b1a3" fill-opacity="1"/>
<rect x="744.45" y="99.25" width="0.85" height="1.6" fill="#62b1a3" fill-opacity="1"/>
<rect x="745.42" y="99.25" width="0.85" height="1.6" fill="#62b1a3" fill-opacity="1"/>
<rect x="746.39" y="99.25" width="0.85" height="1.6" fill="#62b1a3" fill-opacity="1"/>
<rect x="747.36" y="99.25" width="0.85" height="1.6" fill="#62b1a3" fill-opacity="1"/>
<rect x="749.30" y="99.25" width="0.85" height="1.6" fill="#c3cbd1" fill-opacity="1"/>
<rect x="750.27" y="99.85" width="0.85" height="1.0" fill="#c3cbd1" fill-opacity="0.85"/>
<rect x="751.24" y="99.85" width="0.85" height="1.0" fill="#c3cbd1" fill-opacity="0.85"/>
<rect x="752.21" y="99.75" width="0.85" height="1.5" fill="#c3cbd1" fill-opacity="0.85"/>
<rect x="753.18" y="99.25" width="0.85" height="1.6" fill="#c3cbd1" fill-opacity="1"/>
<rect x="754.15" y="99.25" width="0.85" height="1.6" fill="#c3cbd1" fill-opacity="1"/>
<rect x="755.12" y="99.85" width="0.85" height="1.0" fill="#b7bd3a" fill-opacity="0.85"/>
<rect x="756.09" y="99.25" width="0.85" height="1.6" fill="#62b1a3" fill-opacity="1"/>
<rect x="757.06" y="99.25" width="0.85" height="1.6" fill="#62b1a3" fill-opacity="1"/>
<rect x="758.03" y="99.25" width="0.85" height="1.6" fill="#62b1a3" fill-opacity="1"/>
<rect x="759.00" y="99.25" width="0.85" height="1.6" fill="#62b1a3" fill-opacity="1"/>
<rect x="759.97" y="99.25" width="0.85" height="1.6" fill="#62b1a3" fill-opacity="1"/>
<rect x="760.94" y="99.85" width="0.85" height="1.0" fill="#7f8c96" fill-opacity="0.85"/>
<rect x="761.91" y="99.85" width="0.85" height="1.0" fill="#7f8c96" fill-opacity="0.85"/>
<rect x="762.88" y="99.25" width="0.85" height="1.6" fill="#7f8c96" fill-opacity="1"/>
<rect x="763.85" y="99.85" width="0.85" height="1.0" fill="#5b9bd8" fill-opacity="0.85"/>
<rect x="764.82" y="99.85" width="0.85" height="1.0" fill="#5b9bd8" fill-opacity="0.85"/>
<rect x="765.79" y="99.85" width="0.85" height="1.0" fill="#5b9bd8" fill-opacity="0.85"/>
<rect x="766.76" y="99.85" width="0.85" height="1.0" fill="#5b9bd8" fill-opacity="0.85"/>
<rect x="767.73" y="99.85" width="0.85" height="1.0" fill="#5b9bd8" fill-opacity="0.85"/>
<rect x="768.70" y="99.85" width="0.85" height="1.0" fill="#5b9bd8" fill-opacity="0.85"/>
<rect x="769.67" y="99.85" width="0.85" height="1.0" fill="#7f8c96" fill-opacity="0.85"/>
<rect x="714.38" y="101.83" width="0.85" height="1.0" fill="#7f8c96" fill-opacity="0.85"/>
<rect x="715.35" y="101.83" width="0.85" height="1.0" fill="#5b9bd8" fill-opacity="0.85"/>
<rect x="716.32" y="101.83" width="0.85" height="1.0" fill="#5b9bd8" fill-opacity="0.85"/>
<rect x="717.29" y="101.83" width="0.85" height="1.0" fill="#5b9bd8" fill-opacity="0.85"/>
<rect x="718.26" y="101.83" width="0.85" height="1.0" fill="#5b9bd8" fill-opacity="0.85"/>
<rect x="719.23" y="101.73" width="0.85" height="1.5" fill="#5b9bd8" fill-opacity="0.85"/>
<rect x="720.20" y="101.23" width="0.85" height="1.6" fill="#5b9bd8" fill-opacity="1"/>
<rect x="721.17" y="101.83" width="0.85" height="1.0" fill="#7f8c96" fill-opacity="0.85"/>
<rect x="718.26" y="103.80" width="0.85" height="1.0" fill="#c9cfd3" fill-opacity="0.85"/>
<rect x="719.23" y="103.80" width="0.85" height="1.0" fill="#c9cfd3" fill-opacity="0.85"/>
<rect x="720.20" y="103.80" width="0.85" height="1.0" fill="#c9cfd3" fill-opacity="0.85"/>
<rect x="721.17" y="103.80" width="0.85" height="1.0" fill="#c9cfd3" fill-opacity="0.85"/>
<rect x="722.14" y="103.20" width="0.85" height="1.6" fill="#c9cfd3" fill-opacity="1"/>
<rect x="724.08" y="103.80" width="0.85" height="1.0" fill="#5b9bd8" fill-opacity="0.85"/>
<rect x="725.05" y="103.80" width="0.85" height="1.0" fill="#5b9bd8" fill-opacity="0.85"/>
<rect x="726.02" y="103.80" width="0.85" height="1.0" fill="#5b9bd8" fill-opacity="0.85"/>
<rect x="726.99" y="103.80" width="0.85" height="1.0" fill="#5b9bd8" fill-opacity="0.85"/>
<rect x="727.96" y="103.80" width="0.85" height="1.0" fill="#5b9bd8" fill-opacity="0.85"/>
<rect x="728.93" y="103.80" width="0.85" height="1.0" fill="#5b9bd8" fill-opacity="0.85"/>
<rect x="730.87" y="103.80" width="0.85" height="1.0" fill="#b7bd3a" fill-opacity="0.85"/>
<rect x="732.81" y="103.20" width="0.85" height="1.6" fill="#5b9bd8" fill-opacity="1"/>
<rect x="733.78" y="103.80" width="0.85" height="1.0" fill="#5b9bd8" fill-opacity="0.85"/>
<rect x="734.75" y="103.80" width="0.85" height="1.0" fill="#5b9bd8" fill-opacity="0.85"/>
<rect x="735.72" y="103.80" width="0.85" height="1.0" fill="#5b9bd8" fill-opacity="0.85"/>
<rect x="736.69" y="103.80" width="0.85" height="1.0" fill="#5b9bd8" fill-opacity="0.85"/>
<rect x="737.66" y="103.80" width="0.85" height="1.0" fill="#5b9bd8" fill-opacity="0.85"/>
<rect x="738.63" y="103.80" width="0.85" height="1.0" fill="#5b9bd8" fill-opacity="0.85"/>
<rect x="739.60" y="103.20" width="0.85" height="1.6" fill="#5b9bd8" fill-opacity="1"/>
<rect x="740.57" y="104.00" width="0.85" height="0.8" fill="#c3cbd1" fill-opacity="0.5"/>
<rect x="741.54" y="103.70" width="0.85" height="1.5" fill="#5b9bd8" fill-opacity="0.85"/>
<rect x="742.51" y="103.80" width="0.85" height="1.0" fill="#5b9bd8" fill-opacity="0.85"/>
<rect x="743.48" y="103.20" width="0.85" height="1.6" fill="#5b9bd8" fill-opacity="1"/>
<rect x="744.45" y="103.20" width="0.85" height="1.6" fill="#5b9bd8" fill-opacity="1"/>
<rect x="745.42" y="103.20" width="0.85" height="1.6" fill="#5b9bd8" fill-opacity="1"/>
<rect x="746.39" y="103.80" width="0.85" height="1.0" fill="#5b9bd8" fill-opacity="0.85"/>
<rect x="747.36" y="103.80" width="0.85" height="1.0" fill="#5b9bd8" fill-opacity="0.85"/>
<rect x="748.33" y="103.80" width="0.85" height="1.0" fill="#5b9bd8" fill-opacity="0.85"/>
<rect x="749.30" y="103.80" width="0.85" height="1.0" fill="#5b9bd8" fill-opacity="0.85"/>
<rect x="750.27" y="103.20" width="0.85" height="1.6" fill="#5b9bd8" fill-opacity="1"/>
<rect x="751.24" y="103.20" width="0.85" height="1.6" fill="#5b9bd8" fill-opacity="1"/>
<rect x="752.21" y="103.70" width="0.85" height="1.5" fill="#5b9bd8" fill-opacity="0.85"/>
<rect x="753.18" y="103.20" width="0.85" height="1.6" fill="#5b9bd8" fill-opacity="1"/>
<rect x="754.15" y="103.20" width="0.85" height="1.6" fill="#5b9bd8" fill-opacity="1"/>
<rect x="755.12" y="103.20" width="0.85" height="1.6" fill="#c3cbd1" fill-opacity="1"/>
<rect x="756.09" y="103.20" width="0.85" height="1.6" fill="#62b1a3" fill-opacity="1"/>
<rect x="757.06" y="103.70" width="0.85" height="1.5" fill="#62b1a3" fill-opacity="0.85"/>
<rect x="758.03" y="103.80" width="0.85" height="1.0" fill="#62b1a3" fill-opacity="0.85"/>
<rect x="759.00" y="103.80" width="0.85" height="1.0" fill="#62b1a3" fill-opacity="0.85"/>
<rect x="759.97" y="103.80" width="0.85" height="1.0" fill="#62b1a3" fill-opacity="0.85"/>
<rect x="760.94" y="103.20" width="0.85" height="1.6" fill="#62b1a3" fill-opacity="1"/>
<rect x="761.91" y="103.80" width="0.85" height="1.0" fill="#62b1a3" fill-opacity="0.85"/>
<rect x="762.88" y="103.80" width="0.85" height="1.0" fill="#62b1a3" fill-opacity="0.85"/>
<rect x="763.85" y="103.80" width="0.85" height="1.0" fill="#62b1a3" fill-opacity="0.85"/>
<rect x="764.82" y="103.80" width="0.85" height="1.0" fill="#62b1a3" fill-opacity="0.85"/>
<rect x="765.79" y="103.80" width="0.85" height="1.0" fill="#62b1a3" fill-opacity="0.85"/>
<rect x="766.76" y="103.20" width="0.85" height="1.6" fill="#62b1a3" fill-opacity="1"/>
<rect x="767.73" y="103.20" width="0.85" height="1.6" fill="#c3cbd1" fill-opacity="1"/>
<rect x="768.70" y="104.00" width="0.85" height="0.8" fill="#c3cbd1" fill-opacity="0.5"/>
<rect x="718.26" y="105.78" width="0.85" height="1.0" fill="#c9cfd3" fill-opacity="0.85"/>
<rect x="719.23" y="105.78" width="0.85" height="1.0" fill="#c9cfd3" fill-opacity="0.85"/>
<rect x="720.20" y="105.78" width="0.85" height="1.0" fill="#c9cfd3" fill-opacity="0.85"/>
<rect x="721.17" y="105.78" width="0.85" height="1.0" fill="#c9cfd3" fill-opacity="0.85"/>
<rect x="722.14" y="105.18" width="0.85" height="1.6" fill="#c9cfd3" fill-opacity="1"/>
<rect x="724.08" y="105.78" width="0.85" height="1.0" fill="#5b9bd8" fill-opacity="0.85"/>
<rect x="725.05" y="105.18" width="0.85" height="1.6" fill="#5b9bd8" fill-opacity="1"/>
<rect x="726.02" y="105.78" width="0.85" height="1.0" fill="#5b9bd8" fill-opacity="0.85"/>
<rect x="727.96" y="105.78" width="0.85" height="1.0" fill="#b7bd3a" fill-opacity="0.85"/>
<rect x="729.90" y="105.78" width="0.85" height="1.0" fill="#5b9bd8" fill-opacity="0.85"/>
<rect x="730.87" y="105.78" width="0.85" height="1.0" fill="#5b9bd8" fill-opacity="0.85"/>
<rect x="731.84" y="105.78" width="0.85" height="1.0" fill="#5b9bd8" fill-opacity="0.85"/>
<rect x="732.81" y="105.78" width="0.85" height="1.0" fill="#5b9bd8" fill-opacity="0.85"/>
<rect x="733.78" y="105.78" width="0.85" height="1.0" fill="#5b9bd8" fill-opacity="0.85"/>
<rect x="734.75" y="105.78" width="0.85" height="1.0" fill="#5b9bd8" fill-opacity="0.85"/>
<rect x="735.72" y="105.98" width="0.85" height="0.8" fill="#c3cbd1" fill-opacity="0.5"/>
<rect x="736.69" y="105.68" width="0.85" height="1.5" fill="#5b9bd8" fill-opacity="0.85"/>
<rect x="737.66" y="105.78" width="0.85" height="1.0" fill="#5b9bd8" fill-opacity="0.85"/>
<rect x="738.63" y="105.18" width="0.85" height="1.6" fill="#5b9bd8" fill-opacity="1"/>
<rect x="739.60" y="105.18" width="0.85" height="1.6" fill="#5b9bd8" fill-opacity="1"/>
<rect x="740.57" y="105.78" width="0.85" height="1.0" fill="#5b9bd8" fill-opacity="0.85"/>
<rect x="741.54" y="105.78" width="0.85" height="1.0" fill="#5b9bd8" fill-opacity="0.85"/>
<rect x="742.51" y="105.18" width="0.85" height="1.6" fill="#5b9bd8" fill-opacity="1"/>
<rect x="743.48" y="105.78" width="0.85" height="1.0" fill="#5b9bd8" fill-opacity="0.85"/>
<rect x="744.45" y="105.78" width="0.85" height="1.0" fill="#5b9bd8" fill-opacity="0.85"/>
<rect x="745.42" y="105.18" width="0.85" height="1.6" fill="#5b9bd8" fill-opacity="1"/>
<rect x="746.39" y="105.18" width="0.85" height="1.6" fill="#c3cbd1" fill-opacity="1"/>
<rect x="747.36" y="105.18" width="0.85" height="1.6" fill="#62b1a3" fill-opacity="1"/>
<rect x="748.33" y="105.18" width="0.85" height="1.6" fill="#62b1a3" fill-opacity="1"/>
<rect x="749.30" y="105.18" width="0.85" height="1.6" fill="#62b1a3" fill-opacity="1"/>
<rect x="750.27" y="105.18" width="0.85" height="1.6" fill="#62b1a3" fill-opacity="1"/>
<rect x="751.24" y="105.18" width="0.85" height="1.6" fill="#c3cbd1" fill-opacity="1"/>
<rect x="752.21" y="105.98" width="0.85" height="0.8" fill="#c3cbd1" fill-opacity="0.5"/>
<rect x="718.26" y="109.72" width="0.85" height="1.0" fill="#c9cfd3" fill-opacity="0.85"/>
<rect x="719.23" y="109.72" width="0.85" height="1.0" fill="#c9cfd3" fill-opacity="0.85"/>
<rect x="720.20" y="109.72" width="0.85" height="1.0" fill="#c9cfd3" fill-opacity="0.85"/>
<rect x="721.17" y="109.72" width="0.85" height="1.0" fill="#c9cfd3" fill-opacity="0.85"/>
<rect x="722.14" y="109.12" width="0.85" height="1.6" fill="#c9cfd3" fill-opacity="1"/>
<rect x="724.08" y="109.62" width="0.85" height="1.5" fill="#5b9bd8" fill-opacity="0.85"/>
<rect x="725.05" y="109.72" width="0.85" height="1.0" fill="#5b9bd8" fill-opacity="0.85"/>
<rect x="726.02" y="109.72" width="0.85" height="1.0" fill="#5b9bd8" fill-opacity="0.85"/>
<rect x="726.99" y="109.12" width="0.85" height="1.6" fill="#5b9bd8" fill-opacity="1"/>
<rect x="727.96" y="109.12" width="0.85" height="1.6" fill="#5b9bd8" fill-opacity="1"/>
<rect x="728.93" y="109.72" width="0.85" height="1.0" fill="#5b9bd8" fill-opacity="0.85"/>
<rect x="729.90" y="109.72" width="0.85" height="1.0" fill="#5b9bd8" fill-opacity="0.85"/>
<rect x="730.87" y="109.72" width="0.85" height="1.0" fill="#5b9bd8" fill-opacity="0.85"/>
<rect x="732.81" y="109.72" width="0.85" height="1.0" fill="#b7bd3a" fill-opacity="0.85"/>
<rect x="734.75" y="109.12" width="0.85" height="1.6" fill="#d65597" fill-opacity="1"/>
<rect x="735.72" y="109.12" width="0.85" height="1.6" fill="#d65597" fill-opacity="1"/>
<rect x="736.69" y="109.92" width="0.85" height="0.8" fill="#c3cbd1" fill-opacity="0.5"/>
<rect x="718.26" y="111.10" width="0.85" height="1.6" fill="#c9cfd3" fill-opacity="1"/>
<rect x="719.23" y="111.70" width="0.85" height="1.0" fill="#c9cfd3" fill-opacity="0.85"/>
<rect x="720.20" y="111.10" width="0.85" height="1.6" fill="#c9cfd3" fill-opacity="1"/>
<rect x="722.14" y="111.70" width="0.85" height="1.0" fill="#5b9bd8" fill-opacity="0.85"/>
<rect x="723.11" y="111.70" width="0.85" height="1.0" fill="#5b9bd8" fill-opacity="0.85"/>
<rect x="724.08" y="111.70" width="0.85" height="1.0" fill="#5b9bd8" fill-opacity="0.85"/>
<rect x="725.05" y="111.10" width="0.85" height="1.6" fill="#5b9bd8" fill-opacity="1"/>
<rect x="726.02" y="111.70" width="0.85" height="1.0" fill="#5b9bd8" fill-opacity="0.85"/>
<rect x="727.96" y="111.70" width="0.85" height="1.0" fill="#b7bd3a" fill-opacity="0.85"/>
<rect x="729.90" y="111.10" width="0.85" height="1.6" fill="#c3cbd1" fill-opacity="1"/>
<rect x="730.87" y="111.10" width="0.85" height="1.6" fill="#c3cbd1" fill-opacity="1"/>
<rect x="732.81" y="111.70" width="0.85" height="1.0" fill="#5b9bd8" fill-opacity="0.85"/>
<rect x="733.78" y="111.90" width="0.85" height="0.8" fill="#c3cbd1" fill-opacity="0.5"/>
<rect x="735.72" y="111.10" width="0.85" height="1.6" fill="#d65597" fill-opacity="1"/>
<rect x="736.69" y="111.10" width="0.85" height="1.6" fill="#d65597" fill-opacity="1"/>
<rect x="737.66" y="111.10" width="0.85" height="1.6" fill="#d65597" fill-opacity="1"/>
<rect x="738.63" y="111.90" width="0.85" height="0.8" fill="#c3cbd1" fill-opacity="0.5"/>
<rect x="740.57" y="111.60" width="0.85" height="1.5" fill="#5b9bd8" fill-opacity="0.85"/>
<rect x="741.54" y="111.90" width="0.85" height="0.8" fill="#c3cbd1" fill-opacity="0.5"/>
<rect x="743.48" y="111.10" width="0.85" height="1.6" fill="#d65597" fill-opacity="1"/>
<rect x="744.45" y="111.10" width="0.85" height="1.6" fill="#d65597" fill-opacity="1"/>
<rect x="745.42" y="111.10" width="0.85" height="1.6" fill="#d65597" fill-opacity="1"/>
<rect x="747.36" y="111.10" width="0.85" height="1.6" fill="#c3cbd1" fill-opacity="1"/>
<rect x="748.33" y="111.10" width="0.85" height="1.6" fill="#c3cbd1" fill-opacity="1"/>
<rect x="749.30" y="111.90" width="0.85" height="0.8" fill="#c3cbd1" fill-opacity="0.5"/>
<rect x="718.26" y="113.08" width="0.85" height="1.6" fill="#c9cfd3" fill-opacity="1"/>
<rect x="719.23" y="113.68" width="0.85" height="1.0" fill="#c9cfd3" fill-opacity="0.85"/>
<rect x="720.20" y="113.08" width="0.85" height="1.6" fill="#c9cfd3" fill-opacity="1"/>
<rect x="722.14" y="113.08" width="0.85" height="1.6" fill="#5b9bd8" fill-opacity="1"/>
<rect x="723.11" y="113.68" width="0.85" height="1.0" fill="#5b9bd8" fill-opacity="0.85"/>
<rect x="724.08" y="113.68" width="0.85" height="1.0" fill="#5b9bd8" fill-opacity="0.85"/>
<rect x="725.05" y="113.68" width="0.85" height="1.0" fill="#5b9bd8" fill-opacity="0.85"/>
<rect x="726.02" y="113.68" width="0.85" height="1.0" fill="#5b9bd8" fill-opacity="0.85"/>
<rect x="726.99" y="113.08" width="0.85" height="1.6" fill="#5b9bd8" fill-opacity="1"/>
<rect x="727.96" y="113.68" width="0.85" height="1.0" fill="#5b9bd8" fill-opacity="0.85"/>
<rect x="728.93" y="113.68" width="0.85" height="1.0" fill="#5b9bd8" fill-opacity="0.85"/>
<rect x="729.90" y="113.68" width="0.85" height="1.0" fill="#5b9bd8" fill-opacity="0.85"/>
<rect x="731.84" y="113.68" width="0.85" height="1.0" fill="#b7bd3a" fill-opacity="0.85"/>
<rect x="733.78" y="113.08" width="0.85" height="1.6" fill="#62b1a3" fill-opacity="1"/>
<rect x="734.75" y="113.08" width="0.85" height="1.6" fill="#62b1a3" fill-opacity="1"/>
<rect x="735.72" y="113.08" width="0.85" height="1.6" fill="#62b1a3" fill-opacity="1"/>
<rect x="736.69" y="113.08" width="0.85" height="1.6" fill="#62b1a3" fill-opacity="1"/>
<rect x="737.66" y="113.08" width="0.85" height="1.6" fill="#62b1a3" fill-opacity="1"/>
<rect x="738.63" y="113.08" width="0.85" height="1.6" fill="#62b1a3" fill-opacity="1"/>
<rect x="739.60" y="113.08" width="0.85" height="1.6" fill="#62b1a3" fill-opacity="1"/>
<rect x="740.57" y="113.88" width="0.85" height="0.8" fill="#c3cbd1" fill-opacity="0.5"/>
<rect x="718.26" y="115.05" width="0.85" height="1.6" fill="#c9cfd3" fill-opacity="1"/>
<rect x="719.23" y="115.65" width="0.85" height="1.0" fill="#c9cfd3" fill-opacity="0.85"/>
<rect x="720.20" y="115.05" width="0.85" height="1.6" fill="#c9cfd3" fill-opacity="1"/>
<rect x="722.14" y="115.05" width="0.85" height="1.6" fill="#5b9bd8" fill-opacity="1"/>
<rect x="723.11" y="115.65" width="0.85" height="1.0" fill="#5b9bd8" fill-opacity="0.85"/>
<rect x="724.08" y="115.65" width="0.85" height="1.0" fill="#5b9bd8" fill-opacity="0.85"/>
<rect x="725.05" y="115.05" width="0.85" height="1.6" fill="#5b9bd8" fill-opacity="1"/>
<rect x="726.99" y="115.65" width="0.85" height="1.0" fill="#b7bd3a" fill-opacity="0.85"/>
<rect x="728.93" y="115.05" width="0.85" height="1.6" fill="#c3cbd1" fill-opacity="1"/>
<rect x="730.87" y="115.65" width="0.85" height="1.0" fill="#5b9bd8" fill-opacity="0.85"/>
<rect x="731.84" y="115.85" width="0.85" height="0.8" fill="#c3cbd1" fill-opacity="0.5"/>
<rect x="733.78" y="115.05" width="0.85" height="1.6" fill="#d65597" fill-opacity="1"/>
<rect x="734.75" y="115.05" width="0.85" height="1.6" fill="#d65597" fill-opacity="1"/>
<rect x="735.72" y="115.05" width="0.85" height="1.6" fill="#d65597" fill-opacity="1"/>
<rect x="736.69" y="115.85" width="0.85" height="0.8" fill="#c3cbd1" fill-opacity="0.5"/>
<rect x="738.63" y="115.55" width="0.85" height="1.5" fill="#5b9bd8" fill-opacity="0.85"/>
<rect x="739.60" y="115.85" width="0.85" height="0.8" fill="#c3cbd1" fill-opacity="0.5"/>
<rect x="741.54" y="115.05" width="0.85" height="1.6" fill="#d65597" fill-opacity="1"/>
<rect x="742.51" y="115.05" width="0.85" height="1.6" fill="#d65597" fill-opacity="1"/>
<rect x="743.48" y="115.05" width="0.85" height="1.6" fill="#d65597" fill-opacity="1"/>
<rect x="745.42" y="115.05" width="0.85" height="1.6" fill="#c3cbd1" fill-opacity="1"/>
<rect x="746.39" y="115.85" width="0.85" height="0.8" fill="#c3cbd1" fill-opacity="0.5"/>
<rect x="718.26" y="117.03" width="0.85" height="1.6" fill="#c9cfd3" fill-opacity="1"/>
<rect x="719.23" y="117.62" width="0.85" height="1.0" fill="#c9cfd3" fill-opacity="0.85"/>
<rect x="720.20" y="117.03" width="0.85" height="1.6" fill="#c9cfd3" fill-opacity="1"/>
<rect x="722.14" y="117.53" width="0.85" height="1.5" fill="#5b9bd8" fill-opacity="0.85"/>
<rect x="723.11" y="117.62" width="0.85" height="1.0" fill="#5b9bd8" fill-opacity="0.85"/>
<rect x="724.08" y="117.62" width="0.85" height="1.0" fill="#5b9bd8" fill-opacity="0.85"/>
<rect x="725.05" y="117.62" width="0.85" height="1.0" fill="#5b9bd8" fill-opacity="0.85"/>
<rect x="726.02" y="117.03" width="0.85" height="1.6" fill="#5b9bd8" fill-opacity="1"/>
<rect x="726.99" y="117.62" width="0.85" height="1.0" fill="#5b9bd8" fill-opacity="0.85"/>
<rect x="727.96" y="117.03" width="0.85" height="1.6" fill="#5b9bd8" fill-opacity="1"/>
<rect x="728.93" y="117.62" width="0.85" height="1.0" fill="#5b9bd8" fill-opacity="0.85"/>
<rect x="729.90" y="117.62" width="0.85" height="1.0" fill="#5b9bd8" fill-opacity="0.85"/>
<rect x="730.87" y="117.62" width="0.85" height="1.0" fill="#5b9bd8" fill-opacity="0.85"/>
<rect x="731.84" y="117.62" width="0.85" height="1.0" fill="#5b9bd8" fill-opacity="0.85"/>
<rect x="732.81" y="117.03" width="0.85" height="1.6" fill="#5b9bd8" fill-opacity="1"/>
<rect x="733.78" y="117.83" width="0.85" height="0.8" fill="#c3cbd1" fill-opacity="0.5"/>
<rect x="718.26" y="120.97" width="0.85" height="1.6" fill="#5b9bd8" fill-opacity="1"/>
<rect x="719.23" y="121.57" width="0.85" height="1.0" fill="#5b9bd8" fill-opacity="0.85"/>
<rect x="720.20" y="121.57" width="0.85" height="1.0" fill="#5b9bd8" fill-opacity="0.85"/>
<rect x="721.17" y="121.57" width="0.85" height="1.0" fill="#5b9bd8" fill-opacity="0.85"/>
<rect x="722.14" y="121.57" width="0.85" height="1.0" fill="#5b9bd8" fill-opacity="0.85"/>
<rect x="723.11" y="121.57" width="0.85" height="1.0" fill="#5b9bd8" fill-opacity="0.85"/>
<rect x="724.08" y="121.57" width="0.85" height="1.0" fill="#5b9bd8" fill-opacity="0.85"/>
<rect x="725.05" y="120.97" width="0.85" height="1.6" fill="#5b9bd8" fill-opacity="1"/>
<rect x="726.02" y="121.77" width="0.85" height="0.8" fill="#c3cbd1" fill-opacity="0.5"/>
<rect x="726.99" y="121.57" width="0.85" height="1.0" fill="#5b9bd8" fill-opacity="0.85"/>
<rect x="727.96" y="120.97" width="0.85" height="1.6" fill="#5b9bd8" fill-opacity="1"/>
<rect x="728.93" y="120.97" width="0.85" height="1.6" fill="#5b9bd8" fill-opacity="1"/>
<rect x="729.90" y="120.97" width="0.85" height="1.6" fill="#5b9bd8" fill-opacity="1"/>
<rect x="730.87" y="121.57" width="0.85" height="1.0" fill="#5b9bd8" fill-opacity="0.85"/>
<rect x="731.84" y="121.57" width="0.85" height="1.0" fill="#5b9bd8" fill-opacity="0.85"/>
<rect x="732.81" y="121.57" width="0.85" height="1.0" fill="#5b9bd8" fill-opacity="0.85"/>
<rect x="733.78" y="120.97" width="0.85" height="1.6" fill="#5b9bd8" fill-opacity="1"/>
<rect x="734.75" y="120.97" width="0.85" height="1.6" fill="#5b9bd8" fill-opacity="1"/>
<rect x="735.72" y="121.57" width="0.85" height="1.0" fill="#5b9bd8" fill-opacity="0.85"/>
<rect x="736.69" y="121.57" width="0.85" height="1.0" fill="#5b9bd8" fill-opacity="0.85"/>
<rect x="737.66" y="120.97" width="0.85" height="1.6" fill="#5b9bd8" fill-opacity="1"/>
<rect x="738.63" y="121.57" width="0.85" height="1.0" fill="#5b9bd8" fill-opacity="0.85"/>
<rect x="739.60" y="121.57" width="0.85" height="1.0" fill="#5b9bd8" fill-opacity="0.85"/>
<rect x="740.57" y="121.57" width="0.85" height="1.0" fill="#5b9bd8" fill-opacity="0.85"/>
<rect x="741.54" y="121.57" width="0.85" height="1.0" fill="#5b9bd8" fill-opacity="0.85"/>
<rect x="742.51" y="120.97" width="0.85" height="1.6" fill="#c3cbd1" fill-opacity="1"/>
<rect x="743.48" y="120.97" width="0.85" height="1.6" fill="#62b1a3" fill-opacity="1"/>
<rect x="744.45" y="120.97" width="0.85" height="1.6" fill="#62b1a3" fill-opacity="1"/>
<rect x="745.42" y="121.57" width="0.85" height="1.0" fill="#62b1a3" fill-opacity="0.85"/>
<rect x="746.39" y="121.47" width="0.85" height="1.5" fill="#62b1a3" fill-opacity="0.85"/>
<rect x="747.36" y="120.97" width="0.85" height="1.6" fill="#62b1a3" fill-opacity="1"/>
<rect x="748.33" y="121.57" width="0.85" height="1.0" fill="#62b1a3" fill-opacity="0.85"/>
<rect x="749.30" y="121.57" width="0.85" height="1.0" fill="#62b1a3" fill-opacity="0.85"/>
<rect x="750.27" y="121.57" width="0.85" height="1.0" fill="#62b1a3" fill-opacity="0.85"/>
<rect x="751.24" y="120.97" width="0.85" height="1.6" fill="#62b1a3" fill-opacity="1"/>
<rect x="752.21" y="121.77" width="0.85" height="0.8" fill="#c3cbd1" fill-opacity="0.5"/>
<rect x="754.15" y="120.97" width="0.85" height="1.6" fill="#c3cbd1" fill-opacity="1"/>
<rect x="755.12" y="121.57" width="0.85" height="1.0" fill="#5b9bd8" fill-opacity="0.85"/>
<rect x="756.09" y="121.57" width="0.85" height="1.0" fill="#5b9bd8" fill-opacity="0.85"/>
<rect x="757.06" y="121.57" width="0.85" height="1.0" fill="#5b9bd8" fill-opacity="0.85"/>
<rect x="758.03" y="121.57" width="0.85" height="1.0" fill="#5b9bd8" fill-opacity="0.85"/>
<rect x="759.00" y="120.97" width="0.85" height="1.6" fill="#5b9bd8" fill-opacity="1"/>
<rect x="759.97" y="120.97" width="0.85" height="1.6" fill="#c3cbd1" fill-opacity="1"/>
<rect x="761.91" y="121.57" width="0.85" height="1.0" fill="#b7bd3a" fill-opacity="0.85"/>
<rect x="762.88" y="121.57" width="0.85" height="1.0" fill="#7f8c96" fill-opacity="0.85"/>
<rect x="764.82" y="120.97" width="0.85" height="1.6" fill="#c3cbd1" fill-opacity="1"/>
<rect x="722.14" y="123.55" width="0.85" height="1.0" fill="#c9cfd3" fill-opacity="0.85"/>
<rect x="723.11" y="123.55" width="0.85" height="1.0" fill="#c9cfd3" fill-opacity="0.85"/>
<rect x="724.08" y="123.55" width="0.85" height="1.0" fill="#c9cfd3" fill-opacity="0.85"/>
<rect x="725.05" y="123.55" width="0.85" height="1.0" fill="#c9cfd3" fill-opacity="0.85"/>
<rect x="726.02" y="122.95" width="0.85" height="1.6" fill="#c9cfd3" fill-opacity="1"/>
<rect x="727.96" y="122.95" width="0.85" height="1.6" fill="#5b9bd8" fill-opacity="1"/>
<rect x="728.93" y="123.55" width="0.85" height="1.0" fill="#5b9bd8" fill-opacity="0.85"/>
<rect x="729.90" y="123.45" width="0.85" height="1.5" fill="#5b9bd8" fill-opacity="0.85"/>
<rect x="730.87" y="122.95" width="0.85" height="1.6" fill="#5b9bd8" fill-opacity="1"/>
<rect x="731.84" y="123.55" width="0.85" height="1.0" fill="#5b9bd8" fill-opacity="0.85"/>
<rect x="732.81" y="123.45" width="0.85" height="1.5" fill="#5b9bd8" fill-opacity="0.85"/>
<rect x="734.75" y="123.55" width="0.85" height="1.0" fill="#b7bd3a" fill-opacity="0.85"/>
<rect x="736.69" y="122.95" width="0.85" height="1.6" fill="#c3cbd1" fill-opacity="1"/>
<rect x="726.02" y="124.93" width="0.85" height="1.6" fill="#5b9bd8" fill-opacity="1"/>
<rect x="726.99" y="125.53" width="0.85" height="1.0" fill="#5b9bd8" fill-opacity="0.85"/>
<rect x="727.96" y="125.53" width="0.85" height="1.0" fill="#5b9bd8" fill-opacity="0.85"/>
<rect x="728.93" y="125.53" width="0.85" height="1.0" fill="#5b9bd8" fill-opacity="0.85"/>
<rect x="729.90" y="125.53" width="0.85" height="1.0" fill="#5b9bd8" fill-opacity="0.85"/>
<rect x="730.87" y="124.93" width="0.85" height="1.6" fill="#5b9bd8" fill-opacity="1"/>
<rect x="731.84" y="125.43" width="0.85" height="1.5" fill="#5b9bd8" fill-opacity="0.85"/>
<rect x="732.81" y="125.73" width="0.85" height="0.8" fill="#c3cbd1" fill-opacity="0.5"/>
<rect x="734.75" y="124.93" width="0.85" height="1.6" fill="#62b1a3" fill-opacity="1"/>
<rect x="735.72" y="124.93" width="0.85" height="1.6" fill="#62b1a3" fill-opacity="1"/>
<rect x="736.69" y="124.93" width="0.85" height="1.6" fill="#62b1a3" fill-opacity="1"/>
<rect x="737.66" y="124.93" width="0.85" height="1.6" fill="#62b1a3" fill-opacity="1"/>
<rect x="738.63" y="125.73" width="0.85" height="0.8" fill="#c3cbd1" fill-opacity="0.5"/>
<rect x="726.02" y="126.90" width="0.85" height="1.6" fill="#5b9bd8" fill-opacity="1"/>
<rect x="726.99" y="127.50" width="0.85" height="1.0" fill="#5b9bd8" fill-opacity="0.85"/>
<rect x="727.96" y="127.50" width="0.85" height="1.0" fill="#5b9bd8" fill-opacity="0.85"/>
<rect x="728.93" y="127.50" width="0.85" height="1.0" fill="#5b9bd8" fill-opacity="0.85"/>
<rect x="729.90" y="127.50" width="0.85" height="1.0" fill="#5b9bd8" fill-opacity="0.85"/>
<rect x="730.87" y="126.90" width="0.85" height="1.6" fill="#5b9bd8" fill-opacity="1"/>
<rect x="731.84" y="127.50" width="0.85" height="1.0" fill="#5b9bd8" fill-opacity="0.85"/>
<rect x="732.81" y="127.50" width="0.85" height="1.0" fill="#5b9bd8" fill-opacity="0.85"/>
<rect x="733.78" y="127.50" width="0.85" height="1.0" fill="#5b9bd8" fill-opacity="0.85"/>
<rect x="734.75" y="127.70" width="0.85" height="0.8" fill="#c3cbd1" fill-opacity="0.5"/>
<rect x="736.69" y="126.90" width="0.85" height="1.6" fill="#62b1a3" fill-opacity="1"/>
<rect x="737.66" y="126.90" width="0.85" height="1.6" fill="#62b1a3" fill-opacity="1"/>
<rect x="738.63" y="126.90" width="0.85" height="1.6" fill="#62b1a3" fill-opacity="1"/>
<rect x="739.60" y="126.90" width="0.85" height="1.6" fill="#62b1a3" fill-opacity="1"/>
<rect x="740.57" y="126.90" width="0.85" height="1.6" fill="#62b1a3" fill-opacity="1"/>
<rect x="741.54" y="126.90" width="0.85" height="1.6" fill="#62b1a3" fill-opacity="1"/>
<rect x="742.51" y="127.70" width="0.85" height="0.8" fill="#c3cbd1" fill-opacity="0.5"/>
<rect x="726.02" y="128.88" width="0.85" height="1.6" fill="#5b9bd8" fill-opacity="1"/>
<rect x="726.99" y="129.47" width="0.85" height="1.0" fill="#5b9bd8" fill-opacity="0.85"/>
<rect x="727.96" y="129.47" width="0.85" height="1.0" fill="#5b9bd8" fill-opacity="0.85"/>
<rect x="728.93" y="129.47" width="0.85" height="1.0" fill="#5b9bd8" fill-opacity="0.85"/>
<rect x="729.90" y="129.47" width="0.85" height="1.0" fill="#5b9bd8" fill-opacity="0.85"/>
<rect x="730.87" y="128.88" width="0.85" height="1.6" fill="#5b9bd8" fill-opacity="1"/>
<rect x="731.84" y="129.47" width="0.85" height="1.0" fill="#5b9bd8" fill-opacity="0.85"/>
<rect x="732.81" y="128.88" width="0.85" height="1.6" fill="#5b9bd8" fill-opacity="1"/>
<rect x="733.78" y="128.88" width="0.85" height="1.6" fill="#5b9bd8" fill-opacity="1"/>
<rect x="734.75" y="129.67" width="0.85" height="0.8" fill="#c3cbd1" fill-opacity="0.5"/>
<rect x="736.69" y="128.88" width="0.85" height="1.6" fill="#62b1a3" fill-opacity="1"/>
<rect x="737.66" y="128.88" width="0.85" height="1.6" fill="#62b1a3" fill-opacity="1"/>
<rect x="738.63" y="128.88" width="0.85" height="1.6" fill="#62b1a3" fill-opacity="1"/>
<rect x="739.60" y="128.88" width="0.85" height="1.6" fill="#62b1a3" fill-opacity="1"/>
<rect x="740.57" y="128.88" width="0.85" height="1.6" fill="#62b1a3" fill-opacity="1"/>
<rect x="741.54" y="128.88" width="0.85" height="1.6" fill="#62b1a3" fill-opacity="1"/>
<rect x="742.51" y="129.67" width="0.85" height="0.8" fill="#c3cbd1" fill-opacity="0.5"/>
<rect x="726.02" y="130.85" width="0.85" height="1.6" fill="#5b9bd8" fill-opacity="1"/>
<rect x="726.99" y="131.45" width="0.85" height="1.0" fill="#5b9bd8" fill-opacity="0.85"/>
<rect x="727.96" y="131.45" width="0.85" height="1.0" fill="#5b9bd8" fill-opacity="0.85"/>
<rect x="728.93" y="131.45" width="0.85" height="1.0" fill="#5b9bd8" fill-opacity="0.85"/>
<rect x="729.90" y="131.45" width="0.85" height="1.0" fill="#5b9bd8" fill-opacity="0.85"/>
<rect x="730.87" y="130.85" width="0.85" height="1.6" fill="#5b9bd8" fill-opacity="1"/>
<rect x="731.84" y="131.45" width="0.85" height="1.0" fill="#5b9bd8" fill-opacity="0.85"/>
<rect x="732.81" y="131.35" width="0.85" height="1.5" fill="#5b9bd8" fill-opacity="0.85"/>
<rect x="733.78" y="130.85" width="0.85" height="1.6" fill="#5b9bd8" fill-opacity="1"/>
<rect x="734.75" y="130.85" width="0.85" height="1.6" fill="#5b9bd8" fill-opacity="1"/>
<rect x="735.72" y="131.65" width="0.85" height="0.8" fill="#c3cbd1" fill-opacity="0.5"/>
<rect x="737.66" y="130.85" width="0.85" height="1.6" fill="#62b1a3" fill-opacity="1"/>
<rect x="738.63" y="130.85" width="0.85" height="1.6" fill="#62b1a3" fill-opacity="1"/>
<rect x="739.60" y="130.85" width="0.85" height="1.6" fill="#62b1a3" fill-opacity="1"/>
<rect x="740.57" y="130.85" width="0.85" height="1.6" fill="#62b1a3" fill-opacity="1"/>
<rect x="741.54" y="130.85" width="0.85" height="1.6" fill="#62b1a3" fill-opacity="1"/>
<rect x="742.51" y="130.85" width="0.85" height="1.6" fill="#62b1a3" fill-opacity="1"/>
<rect x="743.48" y="130.85" width="0.85" height="1.6" fill="#62b1a3" fill-opacity="1"/>
<rect x="744.45" y="131.65" width="0.85" height="0.8" fill="#c3cbd1" fill-opacity="0.5"/>
<rect x="722.14" y="132.83" width="0.85" height="1.6" fill="#c3cbd1" fill-opacity="1"/>
<rect x="723.11" y="133.62" width="0.85" height="0.8" fill="#c3cbd1" fill-opacity="0.5"/>
<rect x="722.14" y="135.40" width="0.85" height="1.0" fill="#b7bd3a" fill-opacity="0.85"/>
<rect x="723.11" y="134.80" width="0.85" height="1.6" fill="#b7bd3a" fill-opacity="1"/>
<rect x="725.05" y="134.80" width="0.85" height="1.6" fill="#c3cbd1" fill-opacity="1"/>
<rect x="726.02" y="134.80" width="0.85" height="1.6" fill="#5b9bd8" fill-opacity="1"/>
<rect x="726.99" y="135.40" width="0.85" height="1.0" fill="#5b9bd8" fill-opacity="0.85"/>
<rect x="727.96" y="135.30" width="0.85" height="1.5" fill="#5b9bd8" fill-opacity="0.85"/>
<rect x="728.93" y="134.80" width="0.85" height="1.6" fill="#5b9bd8" fill-opacity="1"/>
<rect x="729.90" y="135.40" width="0.85" height="1.0" fill="#5b9bd8" fill-opacity="0.85"/>
<rect x="730.87" y="135.30" width="0.85" height="1.5" fill="#5b9bd8" fill-opacity="0.85"/>
<rect x="731.84" y="134.80" width="0.85" height="1.6" fill="#c3cbd1" fill-opacity="1"/>
<rect x="732.81" y="135.40" width="0.85" height="1.0" fill="#5b9bd8" fill-opacity="0.85"/>
<rect x="733.78" y="135.40" width="0.85" height="1.0" fill="#5b9bd8" fill-opacity="0.85"/>
<rect x="734.75" y="135.40" width="0.85" height="1.0" fill="#5b9bd8" fill-opacity="0.85"/>
<rect x="735.72" y="135.40" width="0.85" height="1.0" fill="#5b9bd8" fill-opacity="0.85"/>
<rect x="736.69" y="134.80" width="0.85" height="1.6" fill="#5b9bd8" fill-opacity="1"/>
<rect x="737.66" y="135.60" width="0.85" height="0.8" fill="#c3cbd1" fill-opacity="0.5"/>
<rect x="738.63" y="134.80" width="0.85" height="1.6" fill="#5b9bd8" fill-opacity="1"/>
<rect x="739.60" y="135.40" width="0.85" height="1.0" fill="#5b9bd8" fill-opacity="0.85"/>
<rect x="740.57" y="135.30" width="0.85" height="1.5" fill="#5b9bd8" fill-opacity="0.85"/>
<rect x="741.54" y="134.80" width="0.85" height="1.6" fill="#c3cbd1" fill-opacity="1"/>
<rect x="743.48" y="135.40" width="0.85" height="1.0" fill="#b7bd3a" fill-opacity="0.85"/>
<rect x="744.45" y="135.40" width="0.85" height="1.0" fill="#b7bd3a" fill-opacity="0.85"/>
<rect x="746.39" y="134.80" width="0.85" height="1.6" fill="#7f8c96" fill-opacity="1"/>
<rect x="747.36" y="135.40" width="0.85" height="1.0" fill="#5b9bd8" fill-opacity="0.85"/>
<rect x="748.33" y="135.40" width="0.85" height="1.0" fill="#5b9bd8" fill-opacity="0.85"/>
<rect x="749.30" y="134.80" width="0.85" height="1.6" fill="#5b9bd8" fill-opacity="1"/>
<rect x="750.27" y="135.30" width="0.85" height="1.5" fill="#5b9bd8" fill-opacity="0.85"/>
<rect x="751.24" y="135.30" width="0.85" height="1.5" fill="#5b9bd8" fill-opacity="0.85"/>
<rect x="752.21" y="135.40" width="0.85" height="1.0" fill="#5b9bd8" fill-opacity="0.85"/>
<rect x="753.18" y="135.40" width="0.85" height="1.0" fill="#5b9bd8" fill-opacity="0.85"/>
<rect x="754.15" y="135.40" width="0.85" height="1.0" fill="#5b9bd8" fill-opacity="0.85"/>
<rect x="755.12" y="134.80" width="0.85" height="1.6" fill="#5b9bd8" fill-opacity="1"/>
<rect x="756.09" y="135.40" width="0.85" height="1.0" fill="#5b9bd8" fill-opacity="0.85"/>
<rect x="757.06" y="134.80" width="0.85" height="1.6" fill="#5b9bd8" fill-opacity="1"/>
<rect x="758.03" y="135.40" width="0.85" height="1.0" fill="#5b9bd8" fill-opacity="0.85"/>
<rect x="759.00" y="135.40" width="0.85" height="1.0" fill="#5b9bd8" fill-opacity="0.85"/>
<rect x="759.97" y="135.40" width="0.85" height="1.0" fill="#5b9bd8" fill-opacity="0.85"/>
<rect x="760.94" y="135.40" width="0.85" height="1.0" fill="#5b9bd8" fill-opacity="0.85"/>
<rect x="761.91" y="134.80" width="0.85" height="1.6" fill="#5b9bd8" fill-opacity="1"/>
<rect x="762.88" y="135.40" width="0.85" height="1.0" fill="#5b9bd8" fill-opacity="0.85"/>
<rect x="763.85" y="135.40" width="0.85" height="1.0" fill="#5b9bd8" fill-opacity="0.85"/>
<rect x="764.82" y="135.40" width="0.85" height="1.0" fill="#5b9bd8" fill-opacity="0.85"/>
<rect x="765.79" y="134.80" width="0.85" height="1.6" fill="#c3cbd1" fill-opacity="1"/>
<rect x="766.76" y="134.80" width="0.85" height="1.6" fill="#5b9bd8" fill-opacity="1"/>
<rect x="767.73" y="135.40" width="0.85" height="1.0" fill="#5b9bd8" fill-opacity="0.85"/>
<rect x="768.70" y="135.30" width="0.85" height="1.5" fill="#5b9bd8" fill-opacity="0.85"/>
<rect x="769.67" y="134.80" width="0.85" height="1.6" fill="#5b9bd8" fill-opacity="1"/>
<rect x="770.64" y="135.40" width="0.85" height="1.0" fill="#5b9bd8" fill-opacity="0.85"/>
<rect x="771.61" y="135.30" width="0.85" height="1.5" fill="#5b9bd8" fill-opacity="0.85"/>
<rect x="772.58" y="134.80" width="0.85" height="1.6" fill="#c3cbd1" fill-opacity="1"/>
<rect x="773.55" y="135.40" width="0.85" height="1.0" fill="#5b9bd8" fill-opacity="0.85"/>
<rect x="774.52" y="135.40" width="0.85" height="1.0" fill="#5b9bd8" fill-opacity="0.85"/>
<rect x="775.49" y="135.40" width="0.85" height="1.0" fill="#5b9bd8" fill-opacity="0.85"/>
<rect x="776.46" y="135.40" width="0.85" height="1.0" fill="#5b9bd8" fill-opacity="0.85"/>
<rect x="777.43" y="134.80" width="0.85" height="1.6" fill="#5b9bd8" fill-opacity="1"/>
<rect x="778.40" y="135.60" width="0.85" height="0.8" fill="#c3cbd1" fill-opacity="0.5"/>
<rect x="779.37" y="134.80" width="0.85" height="1.6" fill="#5b9bd8" fill-opacity="1"/>
<rect x="780.34" y="135.40" width="0.85" height="1.0" fill="#5b9bd8" fill-opacity="0.85"/>
<rect x="781.31" y="135.30" width="0.85" height="1.5" fill="#5b9bd8" fill-opacity="0.85"/>
<rect x="782.28" y="134.80" width="0.85" height="1.6" fill="#c3cbd1" fill-opacity="1"/>
<rect x="783.25" y="134.80" width="0.85" height="1.6" fill="#c3cbd1" fill-opacity="1"/>
<rect x="784.22" y="134.80" width="0.85" height="1.6" fill="#c3cbd1" fill-opacity="1"/>
<rect x="786.16" y="134.80" width="0.85" height="1.6" fill="#c3cbd1" fill-opacity="1"/>
<rect x="726.02" y="136.78" width="0.85" height="1.6" fill="#5b9bd8" fill-opacity="1"/>
<rect x="726.99" y="137.38" width="0.85" height="1.0" fill="#5b9bd8" fill-opacity="0.85"/>
<rect x="727.96" y="137.38" width="0.85" height="1.0" fill="#5b9bd8" fill-opacity="0.85"/>
<rect x="728.93" y="137.38" width="0.85" height="1.0" fill="#5b9bd8" fill-opacity="0.85"/>
<rect x="729.90" y="137.38" width="0.85" height="1.0" fill="#5b9bd8" fill-opacity="0.85"/>
<rect x="730.87" y="136.78" width="0.85" height="1.6" fill="#5b9bd8" fill-opacity="1"/>
<rect x="731.84" y="137.38" width="0.85" height="1.0" fill="#5b9bd8" fill-opacity="0.85"/>
<rect x="732.81" y="137.38" width="0.85" height="1.0" fill="#5b9bd8" fill-opacity="0.85"/>
<rect x="733.78" y="137.38" width="0.85" height="1.0" fill="#5b9bd8" fill-opacity="0.85"/>
<rect x="735.72" y="137.38" width="0.85" height="1.0" fill="#b7bd3a" fill-opacity="0.85"/>
<rect x="737.66" y="136.78" width="0.85" height="1.6" fill="#5b9bd8" fill-opacity="1"/>
<rect x="738.63" y="137.38" width="0.85" height="1.0" fill="#5b9bd8" fill-opacity="0.85"/>
<rect x="739.60" y="137.28" width="0.85" height="1.5" fill="#5b9bd8" fill-opacity="0.85"/>
<rect x="740.57" y="136.78" width="0.85" height="1.6" fill="#5b9bd8" fill-opacity="1"/>
<rect x="741.54" y="137.38" width="0.85" height="1.0" fill="#5b9bd8" fill-opacity="0.85"/>
<rect x="742.51" y="137.28" width="0.85" height="1.5" fill="#5b9bd8" fill-opacity="0.85"/>
<rect x="743.48" y="136.78" width="0.85" height="1.6" fill="#c3cbd1" fill-opacity="1"/>
<rect x="744.45" y="137.38" width="0.85" height="1.0" fill="#5b9bd8" fill-opacity="0.85"/>
<rect x="745.42" y="137.38" width="0.85" height="1.0" fill="#5b9bd8" fill-opacity="0.85"/>
<rect x="746.39" y="137.38" width="0.85" height="1.0" fill="#5b9bd8" fill-opacity="0.85"/>
<rect x="747.36" y="137.38" width="0.85" height="1.0" fill="#5b9bd8" fill-opacity="0.85"/>
<rect x="748.33" y="136.78" width="0.85" height="1.6" fill="#5b9bd8" fill-opacity="1"/>
<rect x="749.30" y="137.57" width="0.85" height="0.8" fill="#c3cbd1" fill-opacity="0.5"/>
<rect x="750.27" y="136.78" width="0.85" height="1.6" fill="#5b9bd8" fill-opacity="1"/>
<rect x="751.24" y="137.38" width="0.85" height="1.0" fill="#5b9bd8" fill-opacity="0.85"/>
<rect x="752.21" y="137.28" width="0.85" height="1.5" fill="#5b9bd8" fill-opacity="0.85"/>
<rect x="753.18" y="136.78" width="0.85" height="1.6" fill="#c3cbd1" fill-opacity="1"/>
<rect x="754.15" y="137.57" width="0.85" height="0.8" fill="#c3cbd1" fill-opacity="0.5"/>
<rect x="722.14" y="138.75" width="0.85" height="1.6" fill="#c3cbd1" fill-opacity="1"/>
<rect x="718.26" y="140.72" width="0.85" height="1.6" fill="#c3cbd1" fill-opacity="1"/>
<rect x="719.23" y="140.72" width="0.85" height="1.6" fill="#c3cbd1" fill-opacity="1"/>
<rect x="720.20" y="141.52" width="0.85" height="0.8" fill="#c3cbd1" fill-opacity="0.5"/>
<rect x="718.26" y="144.68" width="0.85" height="1.6" fill="#9c9a80" fill-opacity="1"/>
<rect x="719.23" y="145.28" width="0.85" height="1.0" fill="#9c9a80" fill-opacity="0.85"/>
<rect x="720.20" y="145.28" width="0.85" height="1.0" fill="#9c9a80" fill-opacity="0.85"/>
<rect x="721.17" y="145.28" width="0.85" height="1.0" fill="#9c9a80" fill-opacity="0.85"/>
<rect x="722.14" y="144.68" width="0.85" height="1.6" fill="#9c9a80" fill-opacity="1"/>
<rect x="723.11" y="145.28" width="0.85" height="1.0" fill="#9c9a80" fill-opacity="0.85"/>
<rect x="724.08" y="145.28" width="0.85" height="1.0" fill="#9c9a80" fill-opacity="0.85"/>
<rect x="725.05" y="145.28" width="0.85" height="1.0" fill="#9c9a80" fill-opacity="0.85"/>
<rect x="726.99" y="145.28" width="0.85" height="1.0" fill="#5b9bd8" fill-opacity="0.85"/>
<rect x="727.96" y="145.28" width="0.85" height="1.0" fill="#5b9bd8" fill-opacity="0.85"/>
<rect x="728.93" y="144.68" width="0.85" height="1.6" fill="#5b9bd8" fill-opacity="1"/>
<rect x="729.90" y="145.18" width="0.85" height="1.5" fill="#5b9bd8" fill-opacity="0.85"/>
<rect x="730.87" y="145.18" width="0.85" height="1.5" fill="#5b9bd8" fill-opacity="0.85"/>
<rect x="731.84" y="145.28" width="0.85" height="1.0" fill="#5b9bd8" fill-opacity="0.85"/>
<rect x="732.81" y="145.28" width="0.85" height="1.0" fill="#5b9bd8" fill-opacity="0.85"/>
<rect x="733.78" y="145.28" width="0.85" height="1.0" fill="#5b9bd8" fill-opacity="0.85"/>
<rect x="734.75" y="144.68" width="0.85" height="1.6" fill="#5b9bd8" fill-opacity="1"/>
<rect x="735.72" y="145.28" width="0.85" height="1.0" fill="#5b9bd8" fill-opacity="0.85"/>
<rect x="736.69" y="144.68" width="0.85" height="1.6" fill="#5b9bd8" fill-opacity="1"/>
<rect x="737.66" y="145.28" width="0.85" height="1.0" fill="#5b9bd8" fill-opacity="0.85"/>
<rect x="738.63" y="145.28" width="0.85" height="1.0" fill="#5b9bd8" fill-opacity="0.85"/>
<rect x="739.60" y="145.28" width="0.85" height="1.0" fill="#5b9bd8" fill-opacity="0.85"/>
<rect x="740.57" y="145.28" width="0.85" height="1.0" fill="#5b9bd8" fill-opacity="0.85"/>
<rect x="741.54" y="144.68" width="0.85" height="1.6" fill="#5b9bd8" fill-opacity="1"/>
<rect x="742.51" y="145.28" width="0.85" height="1.0" fill="#5b9bd8" fill-opacity="0.85"/>
<rect x="743.48" y="145.28" width="0.85" height="1.0" fill="#5b9bd8" fill-opacity="0.85"/>
<rect x="744.45" y="145.28" width="0.85" height="1.0" fill="#5b9bd8" fill-opacity="0.85"/>
<rect x="745.42" y="144.68" width="0.85" height="1.6" fill="#c3cbd1" fill-opacity="1"/>
<rect x="746.39" y="145.28" width="0.85" height="1.0" fill="#5b9bd8" fill-opacity="0.85"/>
<rect x="747.36" y="145.28" width="0.85" height="1.0" fill="#5b9bd8" fill-opacity="0.85"/>
<rect x="748.33" y="145.28" width="0.85" height="1.0" fill="#5b9bd8" fill-opacity="0.85"/>
<rect x="749.30" y="144.68" width="0.85" height="1.6" fill="#5b9bd8" fill-opacity="1"/>
<rect x="750.27" y="145.28" width="0.85" height="1.0" fill="#5b9bd8" fill-opacity="0.85"/>
<rect x="751.24" y="145.28" width="0.85" height="1.0" fill="#5b9bd8" fill-opacity="0.85"/>
<rect x="752.21" y="145.28" width="0.85" height="1.0" fill="#5b9bd8" fill-opacity="0.85"/>
<rect x="753.18" y="145.28" width="0.85" height="1.0" fill="#5b9bd8" fill-opacity="0.85"/>
<rect x="754.15" y="144.68" width="0.85" height="1.6" fill="#5b9bd8" fill-opacity="1"/>
<rect x="755.12" y="145.28" width="0.85" height="1.0" fill="#5b9bd8" fill-opacity="0.85"/>
<rect x="756.09" y="145.28" width="0.85" height="1.0" fill="#5b9bd8" fill-opacity="0.85"/>
<rect x="757.06" y="145.28" width="0.85" height="1.0" fill="#5b9bd8" fill-opacity="0.85"/>
<rect x="758.03" y="144.68" width="0.85" height="1.6" fill="#c3cbd1" fill-opacity="1"/>
<rect x="759.97" y="144.68" width="0.85" height="1.6" fill="#c3cbd1" fill-opacity="1"/>
<rect x="722.14" y="147.25" width="0.85" height="1.0" fill="#b7bd3a" fill-opacity="0.85"/>
<rect x="723.11" y="147.25" width="0.85" height="1.0" fill="#b7bd3a" fill-opacity="0.85"/>
<rect x="724.08" y="146.65" width="0.85" height="1.6" fill="#b7bd3a" fill-opacity="1"/>
<rect x="725.05" y="147.25" width="0.85" height="1.0" fill="#b7bd3a" fill-opacity="0.85"/>
<rect x="726.02" y="147.25" width="0.85" height="1.0" fill="#b7bd3a" fill-opacity="0.85"/>
<rect x="726.99" y="147.25" width="0.85" height="1.0" fill="#b7bd3a" fill-opacity="0.85"/>
<rect x="728.93" y="146.65" width="0.85" height="1.6" fill="#c3cbd1" fill-opacity="1"/>
<rect x="726.02" y="148.62" width="0.85" height="1.6" fill="#c3cbd1" fill-opacity="1"/>
<rect x="726.99" y="148.62" width="0.85" height="1.6" fill="#5b9bd8" fill-opacity="1"/>
<rect x="727.96" y="149.22" width="0.85" height="1.0" fill="#5b9bd8" fill-opacity="0.85"/>
<rect x="728.93" y="149.22" width="0.85" height="1.0" fill="#5b9bd8" fill-opacity="0.85"/>
<rect x="729.90" y="149.22" width="0.85" height="1.0" fill="#5b9bd8" fill-opacity="0.85"/>
<rect x="730.87" y="149.22" width="0.85" height="1.0" fill="#5b9bd8" fill-opacity="0.85"/>
<rect x="731.84" y="148.62" width="0.85" height="1.6" fill="#5b9bd8" fill-opacity="1"/>
<rect x="732.81" y="149.22" width="0.85" height="1.0" fill="#5b9bd8" fill-opacity="0.85"/>
<rect x="733.78" y="149.22" width="0.85" height="1.0" fill="#5b9bd8" fill-opacity="0.85"/>
<rect x="734.75" y="149.22" width="0.85" height="1.0" fill="#5b9bd8" fill-opacity="0.85"/>
<rect x="736.69" y="149.22" width="0.85" height="1.0" fill="#b7bd3a" fill-opacity="0.85"/>
<rect x="737.66" y="149.22" width="0.85" height="1.0" fill="#b7bd3a" fill-opacity="0.85"/>
<rect x="738.63" y="149.22" width="0.85" height="1.0" fill="#b7bd3a" fill-opacity="0.85"/>
<rect x="740.57" y="148.62" width="0.85" height="1.6" fill="#62b1a3" fill-opacity="1"/>
<rect x="741.54" y="148.62" width="0.85" height="1.6" fill="#62b1a3" fill-opacity="1"/>
<rect x="742.51" y="148.62" width="0.85" height="1.6" fill="#62b1a3" fill-opacity="1"/>
<rect x="743.48" y="148.62" width="0.85" height="1.6" fill="#62b1a3" fill-opacity="1"/>
<rect x="745.42" y="149.22" width="0.85" height="1.0" fill="#b7bd3a" fill-opacity="0.85"/>
<rect x="746.39" y="149.22" width="0.85" height="1.0" fill="#b7bd3a" fill-opacity="0.85"/>
<rect x="748.33" y="149.22" width="0.85" height="1.0" fill="#5b9bd8" fill-opacity="0.85"/>
<rect x="749.30" y="149.22" width="0.85" height="1.0" fill="#5b9bd8" fill-opacity="0.85"/>
<rect x="750.27" y="149.22" width="0.85" height="1.0" fill="#5b9bd8" fill-opacity="0.85"/>
<rect x="751.24" y="148.62" width="0.85" height="1.6" fill="#5b9bd8" fill-opacity="1"/>
<rect x="752.21" y="149.22" width="0.85" height="1.0" fill="#5b9bd8" fill-opacity="0.85"/>
<rect x="753.18" y="149.22" width="0.85" height="1.0" fill="#5b9bd8" fill-opacity="0.85"/>
<rect x="754.15" y="149.22" width="0.85" height="1.0" fill="#5b9bd8" fill-opacity="0.85"/>
<rect x="755.12" y="149.22" width="0.85" height="1.0" fill="#5b9bd8" fill-opacity="0.85"/>
<rect x="756.09" y="148.62" width="0.85" height="1.6" fill="#5b9bd8" fill-opacity="1"/>
<rect x="757.06" y="149.22" width="0.85" height="1.0" fill="#5b9bd8" fill-opacity="0.85"/>
<rect x="758.03" y="149.22" width="0.85" height="1.0" fill="#5b9bd8" fill-opacity="0.85"/>
<rect x="759.00" y="149.22" width="0.85" height="1.0" fill="#5b9bd8" fill-opacity="0.85"/>
<rect x="760.94" y="149.22" width="0.85" height="1.0" fill="#b7bd3a" fill-opacity="0.85"/>
<rect x="761.91" y="149.22" width="0.85" height="1.0" fill="#b7bd3a" fill-opacity="0.85"/>
<rect x="762.88" y="149.22" width="0.85" height="1.0" fill="#b7bd3a" fill-opacity="0.85"/>
<rect x="764.82" y="148.62" width="0.85" height="1.6" fill="#62b1a3" fill-opacity="1"/>
<rect x="765.79" y="148.62" width="0.85" height="1.6" fill="#62b1a3" fill-opacity="1"/>
<rect x="766.76" y="148.62" width="0.85" height="1.6" fill="#62b1a3" fill-opacity="1"/>
<rect x="767.73" y="148.62" width="0.85" height="1.6" fill="#62b1a3" fill-opacity="1"/>
<rect x="768.70" y="148.62" width="0.85" height="1.6" fill="#62b1a3" fill-opacity="1"/>
<rect x="769.67" y="148.62" width="0.85" height="1.6" fill="#62b1a3" fill-opacity="1"/>
<rect x="770.64" y="148.62" width="0.85" height="1.6" fill="#c3cbd1" fill-opacity="1"/>
<rect x="772.58" y="148.62" width="0.85" height="1.6" fill="#b7bd3a" fill-opacity="1"/>
<rect x="773.55" y="148.62" width="0.85" height="1.6" fill="#b7bd3a" fill-opacity="1"/>
<rect x="726.02" y="150.60" width="0.85" height="1.6" fill="#c3cbd1" fill-opacity="1"/>
<rect x="726.99" y="150.60" width="0.85" height="1.6" fill="#5b9bd8" fill-opacity="1"/>
<rect x="727.96" y="151.20" width="0.85" height="1.0" fill="#5b9bd8" fill-opacity="0.85"/>
<rect x="728.93" y="151.20" width="0.85" height="1.0" fill="#5b9bd8" fill-opacity="0.85"/>
<rect x="729.90" y="151.20" width="0.85" height="1.0" fill="#5b9bd8" fill-opacity="0.85"/>
<rect x="730.87" y="151.20" width="0.85" height="1.0" fill="#5b9bd8" fill-opacity="0.85"/>
<rect x="731.84" y="150.60" width="0.85" height="1.6" fill="#5b9bd8" fill-opacity="1"/>
<rect x="732.81" y="151.20" width="0.85" height="1.0" fill="#5b9bd8" fill-opacity="0.85"/>
<rect x="733.78" y="151.20" width="0.85" height="1.0" fill="#5b9bd8" fill-opacity="0.85"/>
<rect x="734.75" y="151.20" width="0.85" height="1.0" fill="#5b9bd8" fill-opacity="0.85"/>
<rect x="736.69" y="151.20" width="0.85" height="1.0" fill="#b7bd3a" fill-opacity="0.85"/>
<rect x="737.66" y="151.20" width="0.85" height="1.0" fill="#b7bd3a" fill-opacity="0.85"/>
<rect x="738.63" y="151.20" width="0.85" height="1.0" fill="#b7bd3a" fill-opacity="0.85"/>
<rect x="740.57" y="150.60" width="0.85" height="1.6" fill="#62b1a3" fill-opacity="1"/>
<rect x="741.54" y="150.60" width="0.85" height="1.6" fill="#62b1a3" fill-opacity="1"/>
<rect x="742.51" y="150.60" width="0.85" height="1.6" fill="#62b1a3" fill-opacity="1"/>
<rect x="743.48" y="150.60" width="0.85" height="1.6" fill="#62b1a3" fill-opacity="1"/>
<rect x="744.45" y="150.60" width="0.85" height="1.6" fill="#62b1a3" fill-opacity="1"/>
<rect x="745.42" y="150.60" width="0.85" height="1.6" fill="#62b1a3" fill-opacity="1"/>
<rect x="747.36" y="151.20" width="0.85" height="1.0" fill="#b7bd3a" fill-opacity="0.85"/>
<rect x="748.33" y="151.20" width="0.85" height="1.0" fill="#b7bd3a" fill-opacity="0.85"/>
<rect x="750.27" y="151.20" width="0.85" height="1.0" fill="#5b9bd8" fill-opacity="0.85"/>
<rect x="751.24" y="151.20" width="0.85" height="1.0" fill="#5b9bd8" fill-opacity="0.85"/>
<rect x="752.21" y="151.20" width="0.85" height="1.0" fill="#5b9bd8" fill-opacity="0.85"/>
<rect x="753.18" y="150.60" width="0.85" height="1.6" fill="#5b9bd8" fill-opacity="1"/>
<rect x="754.15" y="151.20" width="0.85" height="1.0" fill="#5b9bd8" fill-opacity="0.85"/>
<rect x="755.12" y="151.20" width="0.85" height="1.0" fill="#5b9bd8" fill-opacity="0.85"/>
<rect x="756.09" y="151.20" width="0.85" height="1.0" fill="#5b9bd8" fill-opacity="0.85"/>
<rect x="757.06" y="151.20" width="0.85" height="1.0" fill="#5b9bd8" fill-opacity="0.85"/>
<rect x="758.03" y="150.60" width="0.85" height="1.6" fill="#5b9bd8" fill-opacity="1"/>
<rect x="759.00" y="151.20" width="0.85" height="1.0" fill="#5b9bd8" fill-opacity="0.85"/>
<rect x="759.97" y="151.20" width="0.85" height="1.0" fill="#5b9bd8" fill-opacity="0.85"/>
<rect x="760.94" y="151.20" width="0.85" height="1.0" fill="#5b9bd8" fill-opacity="0.85"/>
<rect x="762.88" y="151.20" width="0.85" height="1.0" fill="#b7bd3a" fill-opacity="0.85"/>
<rect x="763.85" y="151.20" width="0.85" height="1.0" fill="#b7bd3a" fill-opacity="0.85"/>
<rect x="764.82" y="151.20" width="0.85" height="1.0" fill="#b7bd3a" fill-opacity="0.85"/>
<rect x="766.76" y="150.60" width="0.85" height="1.6" fill="#62b1a3" fill-opacity="1"/>
<rect x="767.73" y="150.60" width="0.85" height="1.6" fill="#62b1a3" fill-opacity="1"/>
<rect x="768.70" y="150.60" width="0.85" height="1.6" fill="#62b1a3" fill-opacity="1"/>
<rect x="769.67" y="150.60" width="0.85" height="1.6" fill="#62b1a3" fill-opacity="1"/>
<rect x="770.64" y="150.60" width="0.85" height="1.6" fill="#c3cbd1" fill-opacity="1"/>
<rect x="772.58" y="150.60" width="0.85" height="1.6" fill="#b7bd3a" fill-opacity="1"/>
<rect x="773.55" y="150.60" width="0.85" height="1.6" fill="#b7bd3a" fill-opacity="1"/>
<rect x="726.02" y="152.58" width="0.85" height="1.6" fill="#c3cbd1" fill-opacity="1"/>
<rect x="726.99" y="152.58" width="0.85" height="1.6" fill="#5b9bd8" fill-opacity="1"/>
<rect x="727.96" y="153.18" width="0.85" height="1.0" fill="#5b9bd8" fill-opacity="0.85"/>
<rect x="728.93" y="153.18" width="0.85" height="1.0" fill="#5b9bd8" fill-opacity="0.85"/>
<rect x="729.90" y="153.18" width="0.85" height="1.0" fill="#5b9bd8" fill-opacity="0.85"/>
<rect x="730.87" y="153.18" width="0.85" height="1.0" fill="#5b9bd8" fill-opacity="0.85"/>
<rect x="731.84" y="152.58" width="0.85" height="1.6" fill="#5b9bd8" fill-opacity="1"/>
<rect x="732.81" y="153.18" width="0.85" height="1.0" fill="#5b9bd8" fill-opacity="0.85"/>
<rect x="733.78" y="153.18" width="0.85" height="1.0" fill="#5b9bd8" fill-opacity="0.85"/>
<rect x="734.75" y="153.18" width="0.85" height="1.0" fill="#5b9bd8" fill-opacity="0.85"/>
<rect x="736.69" y="153.18" width="0.85" height="1.0" fill="#b7bd3a" fill-opacity="0.85"/>
<rect x="737.66" y="153.18" width="0.85" height="1.0" fill="#b7bd3a" fill-opacity="0.85"/>
<rect x="738.63" y="153.18" width="0.85" height="1.0" fill="#b7bd3a" fill-opacity="0.85"/>
<rect x="740.57" y="152.58" width="0.85" height="1.6" fill="#62b1a3" fill-opacity="1"/>
<rect x="741.54" y="152.58" width="0.85" height="1.6" fill="#62b1a3" fill-opacity="1"/>
<rect x="742.51" y="152.58" width="0.85" height="1.6" fill="#62b1a3" fill-opacity="1"/>
<rect x="743.48" y="152.58" width="0.85" height="1.6" fill="#62b1a3" fill-opacity="1"/>
<rect x="744.45" y="152.58" width="0.85" height="1.6" fill="#62b1a3" fill-opacity="1"/>
<rect x="745.42" y="152.58" width="0.85" height="1.6" fill="#62b1a3" fill-opacity="1"/>
<rect x="747.36" y="153.18" width="0.85" height="1.0" fill="#b7bd3a" fill-opacity="0.85"/>
<rect x="748.33" y="153.18" width="0.85" height="1.0" fill="#b7bd3a" fill-opacity="0.85"/>
<rect x="750.27" y="153.18" width="0.85" height="1.0" fill="#5b9bd8" fill-opacity="0.85"/>
<rect x="751.24" y="153.18" width="0.85" height="1.0" fill="#5b9bd8" fill-opacity="0.85"/>
<rect x="752.21" y="153.18" width="0.85" height="1.0" fill="#5b9bd8" fill-opacity="0.85"/>
<rect x="753.18" y="152.58" width="0.85" height="1.6" fill="#5b9bd8" fill-opacity="1"/>
<rect x="754.15" y="153.18" width="0.85" height="1.0" fill="#5b9bd8" fill-opacity="0.85"/>
<rect x="755.12" y="153.18" width="0.85" height="1.0" fill="#5b9bd8" fill-opacity="0.85"/>
<rect x="756.09" y="153.18" width="0.85" height="1.0" fill="#5b9bd8" fill-opacity="0.85"/>
<rect x="757.06" y="153.18" width="0.85" height="1.0" fill="#5b9bd8" fill-opacity="0.85"/>
<rect x="758.03" y="152.58" width="0.85" height="1.6" fill="#5b9bd8" fill-opacity="1"/>
<rect x="759.00" y="153.18" width="0.85" height="1.0" fill="#5b9bd8" fill-opacity="0.85"/>
<rect x="759.97" y="153.18" width="0.85" height="1.0" fill="#5b9bd8" fill-opacity="0.85"/>
<rect x="760.94" y="153.18" width="0.85" height="1.0" fill="#5b9bd8" fill-opacity="0.85"/>
<rect x="762.88" y="153.18" width="0.85" height="1.0" fill="#b7bd3a" fill-opacity="0.85"/>
<rect x="763.85" y="153.18" width="0.85" height="1.0" fill="#b7bd3a" fill-opacity="0.85"/>
<rect x="764.82" y="153.18" width="0.85" height="1.0" fill="#b7bd3a" fill-opacity="0.85"/>
<rect x="766.76" y="152.58" width="0.85" height="1.6" fill="#62b1a3" fill-opacity="1"/>
<rect x="767.73" y="152.58" width="0.85" height="1.6" fill="#62b1a3" fill-opacity="1"/>
<rect x="768.70" y="152.58" width="0.85" height="1.6" fill="#62b1a3" fill-opacity="1"/>
<rect x="769.67" y="152.58" width="0.85" height="1.6" fill="#62b1a3" fill-opacity="1"/>
<rect x="770.64" y="152.58" width="0.85" height="1.6" fill="#62b1a3" fill-opacity="1"/>
<rect x="771.61" y="152.58" width="0.85" height="1.6" fill="#62b1a3" fill-opacity="1"/>
<rect x="772.58" y="152.58" width="0.85" height="1.6" fill="#62b1a3" fill-opacity="1"/>
<rect x="773.55" y="152.58" width="0.85" height="1.6" fill="#c3cbd1" fill-opacity="1"/>
<rect x="775.49" y="152.58" width="0.85" height="1.6" fill="#b7bd3a" fill-opacity="1"/>
<rect x="776.46" y="152.58" width="0.85" height="1.6" fill="#b7bd3a" fill-opacity="1"/>
<rect x="726.02" y="154.55" width="0.85" height="1.6" fill="#c3cbd1" fill-opacity="1"/>
<rect x="726.99" y="154.55" width="0.85" height="1.6" fill="#5b9bd8" fill-opacity="1"/>
<rect x="727.96" y="155.15" width="0.85" height="1.0" fill="#5b9bd8" fill-opacity="0.85"/>
<rect x="728.93" y="155.15" width="0.85" height="1.0" fill="#5b9bd8" fill-opacity="0.85"/>
<rect x="729.90" y="155.15" width="0.85" height="1.0" fill="#5b9bd8" fill-opacity="0.85"/>
<rect x="730.87" y="155.15" width="0.85" height="1.0" fill="#5b9bd8" fill-opacity="0.85"/>
<rect x="731.84" y="154.55" width="0.85" height="1.6" fill="#5b9bd8" fill-opacity="1"/>
<rect x="732.81" y="155.15" width="0.85" height="1.0" fill="#5b9bd8" fill-opacity="0.85"/>
<rect x="733.78" y="155.15" width="0.85" height="1.0" fill="#5b9bd8" fill-opacity="0.85"/>
<rect x="734.75" y="155.15" width="0.85" height="1.0" fill="#5b9bd8" fill-opacity="0.85"/>
<rect x="736.69" y="155.15" width="0.85" height="1.0" fill="#b7bd3a" fill-opacity="0.85"/>
<rect x="737.66" y="155.15" width="0.85" height="1.0" fill="#b7bd3a" fill-opacity="0.85"/>
<rect x="738.63" y="155.15" width="0.85" height="1.0" fill="#b7bd3a" fill-opacity="0.85"/>
<rect x="740.57" y="154.55" width="0.85" height="1.6" fill="#62b1a3" fill-opacity="1"/>
<rect x="741.54" y="154.55" width="0.85" height="1.6" fill="#62b1a3" fill-opacity="1"/>
<rect x="742.51" y="154.55" width="0.85" height="1.6" fill="#62b1a3" fill-opacity="1"/>
<rect x="743.48" y="154.55" width="0.85" height="1.6" fill="#62b1a3" fill-opacity="1"/>
<rect x="744.45" y="154.55" width="0.85" height="1.6" fill="#62b1a3" fill-opacity="1"/>
<rect x="745.42" y="154.55" width="0.85" height="1.6" fill="#62b1a3" fill-opacity="1"/>
<rect x="746.39" y="154.55" width="0.85" height="1.6" fill="#62b1a3" fill-opacity="1"/>
<rect x="748.33" y="155.15" width="0.85" height="1.0" fill="#b7bd3a" fill-opacity="0.85"/>
<rect x="749.30" y="155.15" width="0.85" height="1.0" fill="#b7bd3a" fill-opacity="0.85"/>
<rect x="751.24" y="155.15" width="0.85" height="1.0" fill="#5b9bd8" fill-opacity="0.85"/>
<rect x="752.21" y="155.15" width="0.85" height="1.0" fill="#5b9bd8" fill-opacity="0.85"/>
<rect x="753.18" y="155.15" width="0.85" height="1.0" fill="#5b9bd8" fill-opacity="0.85"/>
<rect x="754.15" y="154.55" width="0.85" height="1.6" fill="#5b9bd8" fill-opacity="1"/>
<rect x="755.12" y="155.15" width="0.85" height="1.0" fill="#5b9bd8" fill-opacity="0.85"/>
<rect x="756.09" y="155.15" width="0.85" height="1.0" fill="#5b9bd8" fill-opacity="0.85"/>
<rect x="757.06" y="155.15" width="0.85" height="1.0" fill="#5b9bd8" fill-opacity="0.85"/>
<rect x="758.03" y="155.15" width="0.85" height="1.0" fill="#5b9bd8" fill-opacity="0.85"/>
<rect x="759.00" y="154.55" width="0.85" height="1.6" fill="#5b9bd8" fill-opacity="1"/>
<rect x="759.97" y="155.15" width="0.85" height="1.0" fill="#5b9bd8" fill-opacity="0.85"/>
<rect x="760.94" y="155.15" width="0.85" height="1.0" fill="#5b9bd8" fill-opacity="0.85"/>
<rect x="761.91" y="155.15" width="0.85" height="1.0" fill="#5b9bd8" fill-opacity="0.85"/>
<rect x="763.85" y="155.15" width="0.85" height="1.0" fill="#b7bd3a" fill-opacity="0.85"/>
<rect x="764.82" y="155.15" width="0.85" height="1.0" fill="#b7bd3a" fill-opacity="0.85"/>
<rect x="765.79" y="155.15" width="0.85" height="1.0" fill="#b7bd3a" fill-opacity="0.85"/>
<rect x="767.73" y="154.55" width="0.85" height="1.6" fill="#62b1a3" fill-opacity="1"/>
<rect x="768.70" y="154.55" width="0.85" height="1.6" fill="#62b1a3" fill-opacity="1"/>
<rect x="769.67" y="154.55" width="0.85" height="1.6" fill="#62b1a3" fill-opacity="1"/>
<rect x="770.64" y="154.55" width="0.85" height="1.6" fill="#62b1a3" fill-opacity="1"/>
<rect x="771.61" y="154.55" width="0.85" height="1.6" fill="#62b1a3" fill-opacity="1"/>
<rect x="772.58" y="154.55" width="0.85" height="1.6" fill="#62b1a3" fill-opacity="1"/>
<rect x="773.55" y="154.55" width="0.85" height="1.6" fill="#c3cbd1" fill-opacity="1"/>
<rect x="722.14" y="156.53" width="0.85" height="1.6" fill="#c3cbd1" fill-opacity="1"/>
<rect x="723.11" y="157.32" width="0.85" height="0.8" fill="#c3cbd1" fill-opacity="0.5"/>
<rect x="718.26" y="158.50" width="0.85" height="1.6" fill="#c3cbd1" fill-opacity="1"/>
<rect x="718.26" y="162.45" width="0.85" height="1.6" fill="#9c9a80" fill-opacity="1"/>
<rect x="719.23" y="163.05" width="0.85" height="1.0" fill="#9c9a80" fill-opacity="0.85"/>
<rect x="720.20" y="163.05" width="0.85" height="1.0" fill="#9c9a80" fill-opacity="0.85"/>
<rect x="721.17" y="163.05" width="0.85" height="1.0" fill="#9c9a80" fill-opacity="0.85"/>
<rect x="722.14" y="162.45" width="0.85" height="1.6" fill="#9c9a80" fill-opacity="1"/>
<rect x="723.11" y="163.05" width="0.85" height="1.0" fill="#9c9a80" fill-opacity="0.85"/>
<rect x="724.08" y="163.05" width="0.85" height="1.0" fill="#9c9a80" fill-opacity="0.85"/>
<rect x="725.05" y="163.05" width="0.85" height="1.0" fill="#9c9a80" fill-opacity="0.85"/>
<rect x="726.99" y="163.05" width="0.85" height="1.0" fill="#5b9bd8" fill-opacity="0.85"/>
<rect x="727.96" y="163.05" width="0.85" height="1.0" fill="#5b9bd8" fill-opacity="0.85"/>
<rect x="728.93" y="163.05" width="0.85" height="1.0" fill="#5b9bd8" fill-opacity="0.85"/>
<rect x="729.90" y="163.05" width="0.85" height="1.0" fill="#5b9bd8" fill-opacity="0.85"/>
<rect x="730.87" y="162.45" width="0.85" height="1.6" fill="#5b9bd8" fill-opacity="1"/>
<rect x="731.84" y="163.05" width="0.85" height="1.0" fill="#5b9bd8" fill-opacity="0.85"/>
<rect x="732.81" y="163.05" width="0.85" height="1.0" fill="#5b9bd8" fill-opacity="0.85"/>
<rect x="733.78" y="162.45" width="0.85" height="1.6" fill="#5b9bd8" fill-opacity="1"/>
<rect x="734.75" y="163.05" width="0.85" height="1.0" fill="#5b9bd8" fill-opacity="0.85"/>
<rect x="735.72" y="162.45" width="0.85" height="1.6" fill="#c3cbd1" fill-opacity="1"/>
<rect x="736.69" y="162.45" width="0.85" height="1.6" fill="#c3cbd1" fill-opacity="1"/>
<rect x="738.63" y="162.45" width="0.85" height="1.6" fill="#c3cbd1" fill-opacity="1"/>
<rect x="722.14" y="165.03" width="0.85" height="1.0" fill="#c9cfd3" fill-opacity="0.85"/>
<rect x="723.11" y="165.03" width="0.85" height="1.0" fill="#c9cfd3" fill-opacity="0.85"/>
<rect x="724.08" y="165.03" width="0.85" height="1.0" fill="#c9cfd3" fill-opacity="0.85"/>
<rect x="725.05" y="165.03" width="0.85" height="1.0" fill="#c9cfd3" fill-opacity="0.85"/>
<rect x="726.02" y="164.43" width="0.85" height="1.6" fill="#c9cfd3" fill-opacity="1"/>
<rect x="727.96" y="164.43" width="0.85" height="1.6" fill="#5b9bd8" fill-opacity="1"/>
<rect x="728.93" y="165.03" width="0.85" height="1.0" fill="#5b9bd8" fill-opacity="0.85"/>
<rect x="729.90" y="165.03" width="0.85" height="1.0" fill="#5b9bd8" fill-opacity="0.85"/>
<rect x="730.87" y="164.43" width="0.85" height="1.6" fill="#5b9bd8" fill-opacity="1"/>
<rect x="732.81" y="165.03" width="0.85" height="1.0" fill="#b7bd3a" fill-opacity="0.85"/>
<rect x="734.75" y="164.43" width="0.85" height="1.6" fill="#c3cbd1" fill-opacity="1"/>
<rect x="736.69" y="165.22" width="0.85" height="0.8" fill="#c3cbd1" fill-opacity="0.5"/>
<rect x="737.66" y="165.22" width="0.85" height="0.8" fill="#c3cbd1" fill-opacity="0.5"/>
<rect x="738.63" y="165.22" width="0.85" height="0.8" fill="#c3cbd1" fill-opacity="0.5"/>
<rect x="739.60" y="165.03" width="0.85" height="1.0" fill="#5b9bd8" fill-opacity="0.85"/>
<rect x="740.57" y="165.03" width="0.85" height="1.0" fill="#5b9bd8" fill-opacity="0.85"/>
<rect x="741.54" y="165.03" width="0.85" height="1.0" fill="#5b9bd8" fill-opacity="0.85"/>
<rect x="742.51" y="164.43" width="0.85" height="1.6" fill="#5b9bd8" fill-opacity="1"/>
<rect x="743.48" y="165.03" width="0.85" height="1.0" fill="#5b9bd8" fill-opacity="0.85"/>
<rect x="744.45" y="164.43" width="0.85" height="1.6" fill="#c3cbd1" fill-opacity="1"/>
<rect x="745.42" y="164.43" width="0.85" height="1.6" fill="#d65597" fill-opacity="1"/>
<rect x="746.39" y="164.43" width="0.85" height="1.6" fill="#c3cbd1" fill-opacity="1"/>
<rect x="748.33" y="164.43" width="0.85" height="1.6" fill="#c3cbd1" fill-opacity="1"/>
<rect x="749.30" y="165.22" width="0.85" height="0.8" fill="#c3cbd1" fill-opacity="0.5"/>
<rect x="722.14" y="167.00" width="0.85" height="1.0" fill="#b7bd3a" fill-opacity="0.85"/>
<rect x="723.11" y="166.40" width="0.85" height="1.6" fill="#b7bd3a" fill-opacity="1"/>
<rect x="725.05" y="166.40" width="0.85" height="1.6" fill="#c3cbd1" fill-opacity="1"/>
<rect x="726.02" y="166.40" width="0.85" height="1.6" fill="#5b9bd8" fill-opacity="1"/>
<rect x="726.99" y="167.00" width="0.85" height="1.0" fill="#5b9bd8" fill-opacity="0.85"/>
<rect x="727.96" y="167.00" width="0.85" height="1.0" fill="#5b9bd8" fill-opacity="0.85"/>
<rect x="728.93" y="167.00" width="0.85" height="1.0" fill="#5b9bd8" fill-opacity="0.85"/>
<rect x="729.90" y="167.00" width="0.85" height="1.0" fill="#5b9bd8" fill-opacity="0.85"/>
<rect x="730.87" y="166.40" width="0.85" height="1.6" fill="#5b9bd8" fill-opacity="1"/>
<rect x="731.84" y="167.00" width="0.85" height="1.0" fill="#5b9bd8" fill-opacity="0.85"/>
<rect x="732.81" y="167.00" width="0.85" height="1.0" fill="#5b9bd8" fill-opacity="0.85"/>
<rect x="733.78" y="167.00" width="0.85" height="1.0" fill="#5b9bd8" fill-opacity="0.85"/>
<rect x="735.72" y="167.00" width="0.85" height="1.0" fill="#b7bd3a" fill-opacity="0.85"/>
<rect x="736.69" y="167.00" width="0.85" height="1.0" fill="#b7bd3a" fill-opacity="0.85"/>
<rect x="737.66" y="167.00" width="0.85" height="1.0" fill="#b7bd3a" fill-opacity="0.85"/>
<rect x="739.60" y="166.40" width="0.85" height="1.6" fill="#62b1a3" fill-opacity="1"/>
<rect x="740.57" y="166.40" width="0.85" height="1.6" fill="#62b1a3" fill-opacity="1"/>
<rect x="741.54" y="166.40" width="0.85" height="1.6" fill="#62b1a3" fill-opacity="1"/>
<rect x="742.51" y="166.40" width="0.85" height="1.6" fill="#62b1a3" fill-opacity="1"/>
<rect x="743.48" y="166.40" width="0.85" height="1.6" fill="#c3cbd1" fill-opacity="1"/>
<rect x="745.42" y="166.40" width="0.85" height="1.6" fill="#5b9bd8" fill-opacity="1"/>
<rect x="746.39" y="167.00" width="0.85" height="1.0" fill="#5b9bd8" fill-opacity="0.85"/>
<rect x="747.36" y="167.00" width="0.85" height="1.0" fill="#5b9bd8" fill-opacity="0.85"/>
<rect x="748.33" y="166.40" width="0.85" height="1.6" fill="#5b9bd8" fill-opacity="1"/>
<rect x="749.30" y="167.20" width="0.85" height="0.8" fill="#c3cbd1" fill-opacity="0.5"/>
<rect x="750.27" y="166.90" width="0.85" height="1.5" fill="#5b9bd8" fill-opacity="0.85"/>
<rect x="752.21" y="167.20" width="0.85" height="0.8" fill="#b7bd3a" fill-opacity="0.5"/>
<rect x="753.18" y="167.00" width="0.85" height="1.0" fill="#b7bd3a" fill-opacity="0.85"/>
<rect x="755.12" y="166.90" width="0.85" height="1.5" fill="#5b9bd8" fill-opacity="0.85"/>
<rect x="756.09" y="167.00" width="0.85" height="1.0" fill="#5b9bd8" fill-opacity="0.85"/>
<rect x="757.06" y="167.00" width="0.85" height="1.0" fill="#5b9bd8" fill-opacity="0.85"/>
<rect x="758.03" y="166.40" width="0.85" height="1.6" fill="#5b9bd8" fill-opacity="1"/>
<rect x="759.00" y="166.40" width="0.85" height="1.6" fill="#5b9bd8" fill-opacity="1"/>
<rect x="759.97" y="167.00" width="0.85" height="1.0" fill="#5b9bd8" fill-opacity="0.85"/>
<rect x="760.94" y="167.00" width="0.85" height="1.0" fill="#5b9bd8" fill-opacity="0.85"/>
<rect x="761.91" y="167.00" width="0.85" height="1.0" fill="#5b9bd8" fill-opacity="0.85"/>
<rect x="762.88" y="167.20" width="0.85" height="0.8" fill="#c3cbd1" fill-opacity="0.5"/>
<rect x="722.14" y="168.97" width="0.85" height="1.0" fill="#b7bd3a" fill-opacity="0.85"/>
<rect x="723.11" y="168.38" width="0.85" height="1.6" fill="#b7bd3a" fill-opacity="1"/>
<rect x="725.05" y="168.38" width="0.85" height="1.6" fill="#c3cbd1" fill-opacity="1"/>
<rect x="726.02" y="168.38" width="0.85" height="1.6" fill="#5b9bd8" fill-opacity="1"/>
<rect x="726.99" y="168.97" width="0.85" height="1.0" fill="#5b9bd8" fill-opacity="0.85"/>
<rect x="727.96" y="168.97" width="0.85" height="1.0" fill="#5b9bd8" fill-opacity="0.85"/>
<rect x="728.93" y="168.97" width="0.85" height="1.0" fill="#5b9bd8" fill-opacity="0.85"/>
<rect x="729.90" y="168.97" width="0.85" height="1.0" fill="#5b9bd8" fill-opacity="0.85"/>
<rect x="730.87" y="168.38" width="0.85" height="1.6" fill="#5b9bd8" fill-opacity="1"/>
<rect x="731.84" y="168.97" width="0.85" height="1.0" fill="#5b9bd8" fill-opacity="0.85"/>
<rect x="732.81" y="168.97" width="0.85" height="1.0" fill="#5b9bd8" fill-opacity="0.85"/>
<rect x="733.78" y="168.97" width="0.85" height="1.0" fill="#5b9bd8" fill-opacity="0.85"/>
<rect x="735.72" y="168.97" width="0.85" height="1.0" fill="#b7bd3a" fill-opacity="0.85"/>
<rect x="736.69" y="168.97" width="0.85" height="1.0" fill="#b7bd3a" fill-opacity="0.85"/>
<rect x="737.66" y="168.97" width="0.85" height="1.0" fill="#b7bd3a" fill-opacity="0.85"/>
<rect x="739.60" y="168.38" width="0.85" height="1.6" fill="#62b1a3" fill-opacity="1"/>
<rect x="740.57" y="168.38" width="0.85" height="1.6" fill="#62b1a3" fill-opacity="1"/>
<rect x="741.54" y="168.38" width="0.85" height="1.6" fill="#62b1a3" fill-opacity="1"/>
<rect x="742.51" y="168.38" width="0.85" height="1.6" fill="#62b1a3" fill-opacity="1"/>
<rect x="743.48" y="168.38" width="0.85" height="1.6" fill="#62b1a3" fill-opacity="1"/>
<rect x="744.45" y="168.38" width="0.85" height="1.6" fill="#62b1a3" fill-opacity="1"/>
<rect x="745.42" y="168.38" width="0.85" height="1.6" fill="#c3cbd1" fill-opacity="1"/>
<rect x="747.36" y="168.38" width="0.85" height="1.6" fill="#5b9bd8" fill-opacity="1"/>
<rect x="748.33" y="168.97" width="0.85" height="1.0" fill="#5b9bd8" fill-opacity="0.85"/>
<rect x="749.30" y="168.97" width="0.85" height="1.0" fill="#5b9bd8" fill-opacity="0.85"/>
<rect x="750.27" y="168.38" width="0.85" height="1.6" fill="#5b9bd8" fill-opacity="1"/>
<rect x="751.24" y="169.17" width="0.85" height="0.8" fill="#c3cbd1" fill-opacity="0.5"/>
<rect x="752.21" y="168.88" width="0.85" height="1.5" fill="#5b9bd8" fill-opacity="0.85"/>
<rect x="754.15" y="168.97" width="0.85" height="1.0" fill="#b7bd3a" fill-opacity="0.85"/>
<rect x="755.12" y="168.97" width="0.85" height="1.0" fill="#b7bd3a" fill-opacity="0.85"/>
<rect x="757.06" y="168.88" width="0.85" height="1.5" fill="#5b9bd8" fill-opacity="0.85"/>
<rect x="758.03" y="168.97" width="0.85" height="1.0" fill="#5b9bd8" fill-opacity="0.85"/>
<rect x="759.00" y="168.97" width="0.85" height="1.0" fill="#5b9bd8" fill-opacity="0.85"/>
<rect x="759.97" y="168.38" width="0.85" height="1.6" fill="#5b9bd8" fill-opacity="1"/>
<rect x="760.94" y="168.38" width="0.85" height="1.6" fill="#5b9bd8" fill-opacity="1"/>
<rect x="761.91" y="168.97" width="0.85" height="1.0" fill="#5b9bd8" fill-opacity="0.85"/>
<rect x="762.88" y="168.97" width="0.85" height="1.0" fill="#5b9bd8" fill-opacity="0.85"/>
<rect x="763.85" y="168.97" width="0.85" height="1.0" fill="#5b9bd8" fill-opacity="0.85"/>
<rect x="764.82" y="169.17" width="0.85" height="0.8" fill="#c3cbd1" fill-opacity="0.5"/>
<rect x="722.14" y="170.95" width="0.85" height="1.0" fill="#b7bd3a" fill-opacity="0.85"/>
<rect x="723.11" y="170.35" width="0.85" height="1.6" fill="#b7bd3a" fill-opacity="1"/>
<rect x="725.05" y="170.35" width="0.85" height="1.6" fill="#c3cbd1" fill-opacity="1"/>
<rect x="726.02" y="170.35" width="0.85" height="1.6" fill="#5b9bd8" fill-opacity="1"/>
<rect x="726.99" y="170.95" width="0.85" height="1.0" fill="#5b9bd8" fill-opacity="0.85"/>
<rect x="727.96" y="170.95" width="0.85" height="1.0" fill="#5b9bd8" fill-opacity="0.85"/>
<rect x="728.93" y="170.95" width="0.85" height="1.0" fill="#5b9bd8" fill-opacity="0.85"/>
<rect x="729.90" y="170.95" width="0.85" height="1.0" fill="#5b9bd8" fill-opacity="0.85"/>
<rect x="730.87" y="170.35" width="0.85" height="1.6" fill="#5b9bd8" fill-opacity="1"/>
<rect x="731.84" y="170.95" width="0.85" height="1.0" fill="#5b9bd8" fill-opacity="0.85"/>
<rect x="732.81" y="170.95" width="0.85" height="1.0" fill="#5b9bd8" fill-opacity="0.85"/>
<rect x="733.78" y="170.95" width="0.85" height="1.0" fill="#5b9bd8" fill-opacity="0.85"/>
<rect x="735.72" y="170.95" width="0.85" height="1.0" fill="#b7bd3a" fill-opacity="0.85"/>
<rect x="736.69" y="170.95" width="0.85" height="1.0" fill="#b7bd3a" fill-opacity="0.85"/>
<rect x="737.66" y="170.95" width="0.85" height="1.0" fill="#b7bd3a" fill-opacity="0.85"/>
<rect x="739.60" y="170.35" width="0.85" height="1.6" fill="#62b1a3" fill-opacity="1"/>
<rect x="740.57" y="170.35" width="0.85" height="1.6" fill="#62b1a3" fill-opacity="1"/>
<rect x="741.54" y="170.35" width="0.85" height="1.6" fill="#62b1a3" fill-opacity="1"/>
<rect x="742.51" y="170.35" width="0.85" height="1.6" fill="#62b1a3" fill-opacity="1"/>
<rect x="743.48" y="170.35" width="0.85" height="1.6" fill="#62b1a3" fill-opacity="1"/>
<rect x="744.45" y="170.35" width="0.85" height="1.6" fill="#62b1a3" fill-opacity="1"/>
<rect x="745.42" y="170.35" width="0.85" height="1.6" fill="#c3cbd1" fill-opacity="1"/>
<rect x="747.36" y="170.35" width="0.85" height="1.6" fill="#5b9bd8" fill-opacity="1"/>
<rect x="748.33" y="170.95" width="0.85" height="1.0" fill="#5b9bd8" fill-opacity="0.85"/>
<rect x="749.30" y="170.95" width="0.85" height="1.0" fill="#5b9bd8" fill-opacity="0.85"/>
<rect x="750.27" y="170.35" width="0.85" height="1.6" fill="#5b9bd8" fill-opacity="1"/>
<rect x="751.24" y="171.15" width="0.85" height="0.8" fill="#c3cbd1" fill-opacity="0.5"/>
<rect x="752.21" y="170.95" width="0.85" height="1.0" fill="#5b9bd8" fill-opacity="0.85"/>
<rect x="754.15" y="171.15" width="0.85" height="0.8" fill="#b7bd3a" fill-opacity="0.5"/>
<rect x="755.12" y="170.95" width="0.85" height="1.0" fill="#b7bd3a" fill-opacity="0.85"/>
<rect x="757.06" y="170.85" width="0.85" height="1.5" fill="#5b9bd8" fill-opacity="0.85"/>
<rect x="758.03" y="170.95" width="0.85" height="1.0" fill="#5b9bd8" fill-opacity="0.85"/>
<rect x="759.00" y="170.95" width="0.85" height="1.0" fill="#5b9bd8" fill-opacity="0.85"/>
<rect x="759.97" y="170.35" width="0.85" height="1.6" fill="#5b9bd8" fill-opacity="1"/>
<rect x="760.94" y="170.35" width="0.85" height="1.6" fill="#5b9bd8" fill-opacity="1"/>
<rect x="761.91" y="170.95" width="0.85" height="1.0" fill="#5b9bd8" fill-opacity="0.85"/>
<rect x="762.88" y="170.95" width="0.85" height="1.0" fill="#5b9bd8" fill-opacity="0.85"/>
<rect x="763.85" y="170.95" width="0.85" height="1.0" fill="#5b9bd8" fill-opacity="0.85"/>
<rect x="764.82" y="171.15" width="0.85" height="0.8" fill="#c3cbd1" fill-opacity="0.5"/>
<rect x="722.14" y="172.93" width="0.85" height="1.0" fill="#b7bd3a" fill-opacity="0.85"/>
<rect x="723.11" y="172.33" width="0.85" height="1.6" fill="#b7bd3a" fill-opacity="1"/>
<rect x="725.05" y="172.33" width="0.85" height="1.6" fill="#c3cbd1" fill-opacity="1"/>
<rect x="726.02" y="172.33" width="0.85" height="1.6" fill="#5b9bd8" fill-opacity="1"/>
<rect x="726.99" y="172.93" width="0.85" height="1.0" fill="#5b9bd8" fill-opacity="0.85"/>
<rect x="727.96" y="172.93" width="0.85" height="1.0" fill="#5b9bd8" fill-opacity="0.85"/>
<rect x="728.93" y="172.93" width="0.85" height="1.0" fill="#5b9bd8" fill-opacity="0.85"/>
<rect x="729.90" y="172.93" width="0.85" height="1.0" fill="#5b9bd8" fill-opacity="0.85"/>
<rect x="730.87" y="172.33" width="0.85" height="1.6" fill="#5b9bd8" fill-opacity="1"/>
<rect x="731.84" y="172.93" width="0.85" height="1.0" fill="#5b9bd8" fill-opacity="0.85"/>
<rect x="732.81" y="172.93" width="0.85" height="1.0" fill="#5b9bd8" fill-opacity="0.85"/>
<rect x="733.78" y="172.93" width="0.85" height="1.0" fill="#5b9bd8" fill-opacity="0.85"/>
<rect x="735.72" y="172.93" width="0.85" height="1.0" fill="#b7bd3a" fill-opacity="0.85"/>
<rect x="736.69" y="172.93" width="0.85" height="1.0" fill="#b7bd3a" fill-opacity="0.85"/>
<rect x="737.66" y="172.93" width="0.85" height="1.0" fill="#b7bd3a" fill-opacity="0.85"/>
<rect x="739.60" y="172.33" width="0.85" height="1.6" fill="#62b1a3" fill-opacity="1"/>
<rect x="740.57" y="172.33" width="0.85" height="1.6" fill="#62b1a3" fill-opacity="1"/>
<rect x="741.54" y="172.33" width="0.85" height="1.6" fill="#62b1a3" fill-opacity="1"/>
<rect x="742.51" y="172.33" width="0.85" height="1.6" fill="#62b1a3" fill-opacity="1"/>
<rect x="743.48" y="172.33" width="0.85" height="1.6" fill="#62b1a3" fill-opacity="1"/>
<rect x="744.45" y="172.33" width="0.85" height="1.6" fill="#62b1a3" fill-opacity="1"/>
<rect x="745.42" y="172.33" width="0.85" height="1.6" fill="#62b1a3" fill-opacity="1"/>
<rect x="746.39" y="172.33" width="0.85" height="1.6" fill="#c3cbd1" fill-opacity="1"/>
<rect x="748.33" y="172.33" width="0.85" height="1.6" fill="#5b9bd8" fill-opacity="1"/>
<rect x="749.30" y="172.93" width="0.85" height="1.0" fill="#5b9bd8" fill-opacity="0.85"/>
<rect x="750.27" y="172.93" width="0.85" height="1.0" fill="#5b9bd8" fill-opacity="0.85"/>
<rect x="751.24" y="172.33" width="0.85" height="1.6" fill="#5b9bd8" fill-opacity="1"/>
<rect x="752.21" y="173.12" width="0.85" height="0.8" fill="#c3cbd1" fill-opacity="0.5"/>
<rect x="753.18" y="172.93" width="0.85" height="1.0" fill="#5b9bd8" fill-opacity="0.85"/>
<rect x="755.12" y="172.93" width="0.85" height="1.0" fill="#b7bd3a" fill-opacity="0.85"/>
<rect x="756.09" y="172.93" width="0.85" height="1.0" fill="#b7bd3a" fill-opacity="0.85"/>
<rect x="758.03" y="172.83" width="0.85" height="1.5" fill="#5b9bd8" fill-opacity="0.85"/>
<rect x="759.00" y="172.93" width="0.85" height="1.0" fill="#5b9bd8" fill-opacity="0.85"/>
<rect x="759.97" y="172.93" width="0.85" height="1.0" fill="#5b9bd8" fill-opacity="0.85"/>
<rect x="760.94" y="172.33" width="0.85" height="1.6" fill="#5b9bd8" fill-opacity="1"/>
<rect x="761.91" y="172.33" width="0.85" height="1.6" fill="#5b9bd8" fill-opacity="1"/>
<rect x="762.88" y="172.93" width="0.85" height="1.0" fill="#5b9bd8" fill-opacity="0.85"/>
<rect x="763.85" y="172.93" width="0.85" height="1.0" fill="#5b9bd8" fill-opacity="0.85"/>
<rect x="764.82" y="172.93" width="0.85" height="1.0" fill="#5b9bd8" fill-opacity="0.85"/>
<rect x="765.79" y="173.12" width="0.85" height="0.8" fill="#c3cbd1" fill-opacity="0.5"/>
<rect x="722.14" y="176.88" width="0.85" height="1.0" fill="#5b9bd8" fill-opacity="0.85"/>
<rect x="723.11" y="176.88" width="0.85" height="1.0" fill="#5b9bd8" fill-opacity="0.85"/>
<rect x="724.08" y="176.88" width="0.85" height="1.0" fill="#5b9bd8" fill-opacity="0.85"/>
<rect x="725.05" y="176.28" width="0.85" height="1.6" fill="#5b9bd8" fill-opacity="1"/>
<rect x="726.02" y="176.88" width="0.85" height="1.0" fill="#5b9bd8" fill-opacity="0.85"/>
<rect x="726.99" y="177.07" width="0.85" height="0.8" fill="#c3cbd1" fill-opacity="0.5"/>
<rect x="727.96" y="176.88" width="0.85" height="1.0" fill="#5b9bd8" fill-opacity="0.85"/>
<rect x="728.93" y="176.88" width="0.85" height="1.0" fill="#5b9bd8" fill-opacity="0.85"/>
<rect x="729.90" y="176.88" width="0.85" height="1.0" fill="#5b9bd8" fill-opacity="0.85"/>
<rect x="730.87" y="176.28" width="0.85" height="1.6" fill="#5b9bd8" fill-opacity="1"/>
<rect x="731.84" y="176.88" width="0.85" height="1.0" fill="#5b9bd8" fill-opacity="0.85"/>
<rect x="732.81" y="176.28" width="0.85" height="1.6" fill="#5b9bd8" fill-opacity="1"/>
<rect x="733.78" y="176.28" width="0.85" height="1.6" fill="#5b9bd8" fill-opacity="1"/>
<rect x="734.75" y="176.28" width="0.85" height="1.6" fill="#c3cbd1" fill-opacity="1"/>
<rect x="735.72" y="176.28" width="0.85" height="1.6" fill="#5b9bd8" fill-opacity="1"/>
<rect x="736.69" y="176.88" width="0.85" height="1.0" fill="#5b9bd8" fill-opacity="0.85"/>
<rect x="737.66" y="176.88" width="0.85" height="1.0" fill="#5b9bd8" fill-opacity="0.85"/>
<rect x="738.63" y="176.28" width="0.85" height="1.6" fill="#5b9bd8" fill-opacity="1"/>
<rect x="739.60" y="176.28" width="0.85" height="1.6" fill="#c3cbd1" fill-opacity="1"/>
<rect x="740.57" y="177.07" width="0.85" height="0.8" fill="#c3cbd1" fill-opacity="0.5"/>
<rect x="722.14" y="180.83" width="0.85" height="1.0" fill="#b7bd3a" fill-opacity="0.85"/>
<rect x="723.11" y="180.23" width="0.85" height="1.6" fill="#b7bd3a" fill-opacity="1"/>
<rect x="725.05" y="180.23" width="0.85" height="1.6" fill="#c3cbd1" fill-opacity="1"/>
<rect x="726.02" y="180.23" width="0.85" height="1.6" fill="#5b9bd8" fill-opacity="1"/>
<rect x="726.99" y="180.83" width="0.85" height="1.0" fill="#5b9bd8" fill-opacity="0.85"/>
<rect x="727.96" y="180.83" width="0.85" height="1.0" fill="#5b9bd8" fill-opacity="0.85"/>
<rect x="728.93" y="180.23" width="0.85" height="1.6" fill="#5b9bd8" fill-opacity="1"/>
<rect x="729.90" y="181.03" width="0.85" height="0.8" fill="#c3cbd1" fill-opacity="0.5"/>
<rect x="730.87" y="180.83" width="0.85" height="1.0" fill="#5b9bd8" fill-opacity="0.85"/>
<rect x="732.81" y="180.83" width="0.85" height="1.0" fill="#b7bd3a" fill-opacity="0.85"/>
<rect x="733.78" y="180.83" width="0.85" height="1.0" fill="#b7bd3a" fill-opacity="0.85"/>
<rect x="734.75" y="180.83" width="0.85" height="1.0" fill="#b7bd3a" fill-opacity="0.85"/>
<rect x="736.69" y="180.23" width="0.85" height="1.6" fill="#5b9bd8" fill-opacity="1"/>
<rect x="737.66" y="180.83" width="0.85" height="1.0" fill="#5b9bd8" fill-opacity="0.85"/>
<rect x="738.63" y="180.83" width="0.85" height="1.0" fill="#5b9bd8" fill-opacity="0.85"/>
<rect x="739.60" y="180.23" width="0.85" height="1.6" fill="#5b9bd8" fill-opacity="1"/>
<rect x="740.57" y="181.03" width="0.85" height="0.8" fill="#c3cbd1" fill-opacity="0.5"/>
<rect x="741.54" y="180.83" width="0.85" height="1.0" fill="#5b9bd8" fill-opacity="0.85"/>
<rect x="743.48" y="180.83" width="0.85" height="1.0" fill="#b7bd3a" fill-opacity="0.85"/>
<rect x="744.45" y="180.83" width="0.85" height="1.0" fill="#b7bd3a" fill-opacity="0.85"/>
<rect x="746.39" y="180.23" width="0.85" height="1.6" fill="#5b9bd8" fill-opacity="1"/>
<rect x="747.36" y="180.83" width="0.85" height="1.0" fill="#5b9bd8" fill-opacity="0.85"/>
<rect x="748.33" y="180.83" width="0.85" height="1.0" fill="#5b9bd8" fill-opacity="0.85"/>
<rect x="749.30" y="180.23" width="0.85" height="1.6" fill="#5b9bd8" fill-opacity="1"/>
<rect x="750.27" y="181.03" width="0.85" height="0.8" fill="#c3cbd1" fill-opacity="0.5"/>
<rect x="751.24" y="180.73" width="0.85" height="1.5" fill="#5b9bd8" fill-opacity="0.85"/>
<rect x="753.18" y="180.83" width="0.85" height="1.0" fill="#b7bd3a" fill-opacity="0.85"/>
<rect x="754.15" y="180.83" width="0.85" height="1.0" fill="#b7bd3a" fill-opacity="0.85"/>
<rect x="755.12" y="180.83" width="0.85" height="1.0" fill="#b7bd3a" fill-opacity="0.85"/>
<rect x="757.06" y="180.23" width="0.85" height="1.6" fill="#5b9bd8" fill-opacity="1"/>
<rect x="758.03" y="180.83" width="0.85" height="1.0" fill="#5b9bd8" fill-opacity="0.85"/>
<rect x="759.00" y="180.83" width="0.85" height="1.0" fill="#5b9bd8" fill-opacity="0.85"/>
<rect x="759.97" y="180.23" width="0.85" height="1.6" fill="#5b9bd8" fill-opacity="1"/>
<rect x="760.94" y="181.03" width="0.85" height="0.8" fill="#c3cbd1" fill-opacity="0.5"/>
<rect x="761.91" y="180.73" width="0.85" height="1.5" fill="#5b9bd8" fill-opacity="0.85"/>
<rect x="762.88" y="180.23" width="0.85" height="1.6" fill="#c3cbd1" fill-opacity="1"/>
<rect x="764.82" y="180.23" width="0.85" height="1.6" fill="#c3cbd1" fill-opacity="1"/>
<rect x="726.02" y="182.70" width="0.85" height="1.5" fill="#5b9bd8" fill-opacity="0.85"/>
<rect x="726.99" y="182.20" width="0.85" height="1.6" fill="#5b9bd8" fill-opacity="1"/>
<rect x="727.96" y="182.80" width="0.85" height="1.0" fill="#5b9bd8" fill-opacity="0.85"/>
<rect x="728.93" y="182.80" width="0.85" height="1.0" fill="#5b9bd8" fill-opacity="0.85"/>
<rect x="729.90" y="182.80" width="0.85" height="1.0" fill="#5b9bd8" fill-opacity="0.85"/>
<rect x="730.87" y="182.20" width="0.85" height="1.6" fill="#5b9bd8" fill-opacity="1"/>
<rect x="731.84" y="182.80" width="0.85" height="1.0" fill="#5b9bd8" fill-opacity="0.85"/>
<rect x="732.81" y="182.80" width="0.85" height="1.0" fill="#5b9bd8" fill-opacity="0.85"/>
<rect x="733.78" y="182.20" width="0.85" height="1.6" fill="#5b9bd8" fill-opacity="1"/>
<rect x="734.75" y="182.20" width="0.85" height="1.6" fill="#c3cbd1" fill-opacity="1"/>
<rect x="735.72" y="182.20" width="0.85" height="1.6" fill="#c3cbd1" fill-opacity="1"/>
<rect x="736.69" y="183.00" width="0.85" height="0.8" fill="#c3cbd1" fill-opacity="0.5"/>
<rect x="722.14" y="184.18" width="0.85" height="1.6" fill="#c3cbd1" fill-opacity="1"/>
<rect x="724.08" y="184.78" width="0.85" height="1.0" fill="#b7bd3a" fill-opacity="0.85"/>
<rect x="725.05" y="184.18" width="0.85" height="1.6" fill="#b7bd3a" fill-opacity="1"/>
<rect x="726.02" y="184.78" width="0.85" height="1.0" fill="#b7bd3a" fill-opacity="0.85"/>
<rect x="726.99" y="184.78" width="0.85" height="1.0" fill="#b7bd3a" fill-opacity="0.85"/>
<rect x="728.93" y="184.18" width="0.85" height="1.6" fill="#c3cbd1" fill-opacity="1"/>
<rect x="726.02" y="186.75" width="0.85" height="1.0" fill="#5b9bd8" fill-opacity="0.85"/>
<rect x="726.99" y="186.75" width="0.85" height="1.0" fill="#5b9bd8" fill-opacity="0.85"/>
<rect x="727.96" y="186.75" width="0.85" height="1.0" fill="#5b9bd8" fill-opacity="0.85"/>
<rect x="728.93" y="186.15" width="0.85" height="1.6" fill="#5b9bd8" fill-opacity="1"/>
<rect x="729.90" y="186.75" width="0.85" height="1.0" fill="#5b9bd8" fill-opacity="0.85"/>
<rect x="730.87" y="186.95" width="0.85" height="0.8" fill="#c3cbd1" fill-opacity="0.5"/>
<rect x="731.84" y="186.65" width="0.85" height="1.5" fill="#5b9bd8" fill-opacity="0.85"/>
<rect x="732.81" y="186.75" width="0.85" height="1.0" fill="#5b9bd8" fill-opacity="0.85"/>
<rect x="733.78" y="186.65" width="0.85" height="1.5" fill="#5b9bd8" fill-opacity="0.85"/>
<rect x="734.75" y="186.15" width="0.85" height="1.6" fill="#c3cbd1" fill-opacity="1"/>
<rect x="735.72" y="186.15" width="0.85" height="1.6" fill="#c3cbd1" fill-opacity="1"/>
<rect x="736.69" y="186.95" width="0.85" height="0.8" fill="#c3cbd1" fill-opacity="0.5"/>
<rect x="722.14" y="188.13" width="0.85" height="1.6" fill="#c3cbd1" fill-opacity="1"/>
<rect x="718.26" y="190.10" width="0.85" height="1.6" fill="#c3cbd1" fill-opacity="1"/>
<rect x="718.26" y="194.05" width="0.85" height="1.6" fill="#9c9a80" fill-opacity="1"/>
<rect x="719.23" y="194.65" width="0.85" height="1.0" fill="#9c9a80" fill-opacity="0.85"/>
<rect x="720.20" y="194.65" width="0.85" height="1.0" fill="#9c9a80" fill-opacity="0.85"/>
<rect x="721.17" y="194.65" width="0.85" height="1.0" fill="#9c9a80" fill-opacity="0.85"/>
<rect x="722.14" y="194.05" width="0.85" height="1.6" fill="#9c9a80" fill-opacity="1"/>
<rect x="723.11" y="194.65" width="0.85" height="1.0" fill="#9c9a80" fill-opacity="0.85"/>
<rect x="724.08" y="194.65" width="0.85" height="1.0" fill="#9c9a80" fill-opacity="0.85"/>
<rect x="725.05" y="194.65" width="0.85" height="1.0" fill="#9c9a80" fill-opacity="0.85"/>
<rect x="726.99" y="194.55" width="0.85" height="1.5" fill="#5b9bd8" fill-opacity="0.85"/>
<rect x="727.96" y="194.05" width="0.85" height="1.6" fill="#5b9bd8" fill-opacity="1"/>
<rect x="728.93" y="194.65" width="0.85" height="1.0" fill="#5b9bd8" fill-opacity="0.85"/>
<rect x="729.90" y="194.65" width="0.85" height="1.0" fill="#5b9bd8" fill-opacity="0.85"/>
<rect x="730.87" y="194.65" width="0.85" height="1.0" fill="#5b9bd8" fill-opacity="0.85"/>
<rect x="731.84" y="194.05" width="0.85" height="1.6" fill="#5b9bd8" fill-opacity="1"/>
<rect x="732.81" y="194.65" width="0.85" height="1.0" fill="#5b9bd8" fill-opacity="0.85"/>
<rect x="733.78" y="194.65" width="0.85" height="1.0" fill="#5b9bd8" fill-opacity="0.85"/>
<rect x="734.75" y="194.05" width="0.85" height="1.6" fill="#5b9bd8" fill-opacity="1"/>
<rect x="735.72" y="194.05" width="0.85" height="1.6" fill="#c3cbd1" fill-opacity="1"/>
<rect x="736.69" y="194.05" width="0.85" height="1.6" fill="#c3cbd1" fill-opacity="1"/>
<rect x="738.63" y="194.05" width="0.85" height="1.6" fill="#c3cbd1" fill-opacity="1"/>
<rect x="722.14" y="196.03" width="0.85" height="1.6" fill="#5b9bd8" fill-opacity="1"/>
<rect x="723.11" y="196.62" width="0.85" height="1.0" fill="#5b9bd8" fill-opacity="0.85"/>
<rect x="724.08" y="196.62" width="0.85" height="1.0" fill="#5b9bd8" fill-opacity="0.85"/>
<rect x="725.05" y="196.03" width="0.85" height="1.6" fill="#5b9bd8" fill-opacity="1"/>
<rect x="726.02" y="196.82" width="0.85" height="0.8" fill="#c3cbd1" fill-opacity="0.5"/>
<rect x="726.99" y="196.62" width="0.85" height="1.0" fill="#5b9bd8" fill-opacity="0.85"/>
<rect x="728.93" y="196.62" width="0.85" height="1.0" fill="#b7bd3a" fill-opacity="0.85"/>
<rect x="730.87" y="196.03" width="0.85" height="1.6" fill="#5b9bd8" fill-opacity="1"/>
<rect x="731.84" y="196.62" width="0.85" height="1.0" fill="#5b9bd8" fill-opacity="0.85"/>
<rect x="732.81" y="196.03" width="0.85" height="1.6" fill="#5b9bd8" fill-opacity="1"/>
<rect x="733.78" y="196.03" width="0.85" height="1.6" fill="#5b9bd8" fill-opacity="1"/>
<rect x="734.75" y="196.82" width="0.85" height="0.8" fill="#c3cbd1" fill-opacity="0.5"/>
<rect x="735.72" y="196.03" width="0.85" height="1.6" fill="#5b9bd8" fill-opacity="1"/>
<rect x="736.69" y="196.03" width="0.85" height="1.6" fill="#5b9bd8" fill-opacity="1"/>
<rect x="737.66" y="196.62" width="0.85" height="1.0" fill="#5b9bd8" fill-opacity="0.85"/>
<rect x="738.63" y="196.62" width="0.85" height="1.0" fill="#5b9bd8" fill-opacity="0.85"/>
<rect x="739.60" y="196.62" width="0.85" height="1.0" fill="#5b9bd8" fill-opacity="0.85"/>
<rect x="740.57" y="196.03" width="0.85" height="1.6" fill="#c3cbd1" fill-opacity="1"/>
<rect x="741.54" y="196.03" width="0.85" height="1.6" fill="#5b9bd8" fill-opacity="1"/>
<rect x="742.51" y="196.62" width="0.85" height="1.0" fill="#5b9bd8" fill-opacity="0.85"/>
<rect x="743.48" y="196.03" width="0.85" height="1.6" fill="#5b9bd8" fill-opacity="1"/>
<rect x="744.45" y="196.03" width="0.85" height="1.6" fill="#5b9bd8" fill-opacity="1"/>
<rect x="745.42" y="196.82" width="0.85" height="0.8" fill="#c3cbd1" fill-opacity="0.5"/>
<rect x="746.39" y="196.62" width="0.85" height="1.0" fill="#5b9bd8" fill-opacity="0.85"/>
<rect x="747.36" y="196.62" width="0.85" height="1.0" fill="#5b9bd8" fill-opacity="0.85"/>
<rect x="748.33" y="196.62" width="0.85" height="1.0" fill="#5b9bd8" fill-opacity="0.85"/>
<rect x="749.30" y="196.03" width="0.85" height="1.6" fill="#5b9bd8" fill-opacity="1"/>
<rect x="750.27" y="196.62" width="0.85" height="1.0" fill="#5b9bd8" fill-opacity="0.85"/>
<rect x="751.24" y="196.62" width="0.85" height="1.0" fill="#5b9bd8" fill-opacity="0.85"/>
<rect x="752.21" y="196.03" width="0.85" height="1.6" fill="#c3cbd1" fill-opacity="1"/>
<rect x="753.18" y="196.03" width="0.85" height="1.6" fill="#c3cbd1" fill-opacity="1"/>
<rect x="755.12" y="196.62" width="0.85" height="1.0" fill="#b7bd3a" fill-opacity="0.85"/>
<rect x="757.06" y="196.03" width="0.85" height="1.6" fill="#c3cbd1" fill-opacity="1"/>
<rect x="758.03" y="196.62" width="0.85" height="1.0" fill="#5b9bd8" fill-opacity="0.85"/>
<rect x="759.00" y="196.62" width="0.85" height="1.0" fill="#5b9bd8" fill-opacity="0.85"/>
<rect x="759.97" y="196.62" width="0.85" height="1.0" fill="#5b9bd8" fill-opacity="0.85"/>
<rect x="760.94" y="196.62" width="0.85" height="1.0" fill="#5b9bd8" fill-opacity="0.85"/>
<rect x="761.91" y="196.62" width="0.85" height="1.0" fill="#5b9bd8" fill-opacity="0.85"/>
<rect x="762.88" y="196.62" width="0.85" height="1.0" fill="#5b9bd8" fill-opacity="0.85"/>
<rect x="763.85" y="196.82" width="0.85" height="0.8" fill="#c3cbd1" fill-opacity="0.5"/>
<rect x="764.82" y="196.62" width="0.85" height="1.0" fill="#5b9bd8" fill-opacity="0.85"/>
<rect x="765.79" y="196.62" width="0.85" height="1.0" fill="#5b9bd8" fill-opacity="0.85"/>
<rect x="766.76" y="196.03" width="0.85" height="1.6" fill="#5b9bd8" fill-opacity="1"/>
<rect x="767.73" y="196.03" width="0.85" height="1.6" fill="#5b9bd8" fill-opacity="1"/>
<rect x="768.70" y="196.03" width="0.85" height="1.6" fill="#5b9bd8" fill-opacity="1"/>
<rect x="770.64" y="196.03" width="0.85" height="1.6" fill="#7f8c96" fill-opacity="1"/>
<rect x="772.58" y="196.53" width="0.85" height="1.5" fill="#5b9bd8" fill-opacity="0.85"/>
<rect x="773.55" y="196.62" width="0.85" height="1.0" fill="#5b9bd8" fill-opacity="0.85"/>
<rect x="774.52" y="196.62" width="0.85" height="1.0" fill="#5b9bd8" fill-opacity="0.85"/>
<rect x="775.49" y="196.03" width="0.85" height="1.6" fill="#5b9bd8" fill-opacity="1"/>
<rect x="776.46" y="196.03" width="0.85" height="1.6" fill="#5b9bd8" fill-opacity="1"/>
<rect x="777.43" y="196.62" width="0.85" height="1.0" fill="#5b9bd8" fill-opacity="0.85"/>
<rect x="778.40" y="196.62" width="0.85" height="1.0" fill="#5b9bd8" fill-opacity="0.85"/>
<rect x="779.37" y="196.62" width="0.85" height="1.0" fill="#5b9bd8" fill-opacity="0.85"/>
<rect x="780.34" y="196.03" width="0.85" height="1.6" fill="#c3cbd1" fill-opacity="1"/>
<rect x="781.31" y="196.03" width="0.85" height="1.6" fill="#c3cbd1" fill-opacity="1"/>
<rect x="783.25" y="196.62" width="0.85" height="1.0" fill="#b7bd3a" fill-opacity="0.85"/>
<rect x="785.19" y="196.53" width="0.85" height="1.5" fill="#5b9bd8" fill-opacity="0.85"/>
<rect x="786.16" y="196.62" width="0.85" height="1.0" fill="#5b9bd8" fill-opacity="0.85"/>
<rect x="787.13" y="196.62" width="0.85" height="1.0" fill="#5b9bd8" fill-opacity="0.85"/>
<rect x="788.10" y="196.03" width="0.85" height="1.6" fill="#5b9bd8" fill-opacity="1"/>
<rect x="789.07" y="196.03" width="0.85" height="1.6" fill="#5b9bd8" fill-opacity="1"/>
<rect x="790.04" y="196.62" width="0.85" height="1.0" fill="#5b9bd8" fill-opacity="0.85"/>
<rect x="791.01" y="196.62" width="0.85" height="1.0" fill="#5b9bd8" fill-opacity="0.85"/>
<rect x="791.98" y="196.62" width="0.85" height="1.0" fill="#5b9bd8" fill-opacity="0.85"/>
<rect x="792.95" y="196.82" width="0.85" height="0.8" fill="#c3cbd1" fill-opacity="0.5"/>
<rect x="722.14" y="198.00" width="0.85" height="1.6" fill="#5b9bd8" fill-opacity="1"/>
<rect x="723.11" y="198.60" width="0.85" height="1.0" fill="#5b9bd8" fill-opacity="0.85"/>
<rect x="724.08" y="198.60" width="0.85" height="1.0" fill="#5b9bd8" fill-opacity="0.85"/>
<rect x="725.05" y="198.00" width="0.85" height="1.6" fill="#5b9bd8" fill-opacity="1"/>
<rect x="726.02" y="198.80" width="0.85" height="0.8" fill="#c3cbd1" fill-opacity="0.5"/>
<rect x="726.99" y="198.50" width="0.85" height="1.5" fill="#5b9bd8" fill-opacity="0.85"/>
<rect x="728.93" y="198.60" width="0.85" height="1.0" fill="#b7bd3a" fill-opacity="0.85"/>
<rect x="730.87" y="198.00" width="0.85" height="1.6" fill="#5b9bd8" fill-opacity="1"/>
<rect x="731.84" y="198.60" width="0.85" height="1.0" fill="#5b9bd8" fill-opacity="0.85"/>
<rect x="732.81" y="198.00" width="0.85" height="1.6" fill="#5b9bd8" fill-opacity="1"/>
<rect x="733.78" y="198.00" width="0.85" height="1.6" fill="#5b9bd8" fill-opacity="1"/>
<rect x="734.75" y="198.80" width="0.85" height="0.8" fill="#c3cbd1" fill-opacity="0.5"/>
<rect x="735.72" y="198.00" width="0.85" height="1.6" fill="#5b9bd8" fill-opacity="1"/>
<rect x="736.69" y="198.00" width="0.85" height="1.6" fill="#5b9bd8" fill-opacity="1"/>
<rect x="737.66" y="198.60" width="0.85" height="1.0" fill="#5b9bd8" fill-opacity="0.85"/>
<rect x="738.63" y="198.60" width="0.85" height="1.0" fill="#5b9bd8" fill-opacity="0.85"/>
<rect x="739.60" y="198.60" width="0.85" height="1.0" fill="#5b9bd8" fill-opacity="0.85"/>
<rect x="740.57" y="198.00" width="0.85" height="1.6" fill="#c3cbd1" fill-opacity="1"/>
<rect x="741.54" y="198.00" width="0.85" height="1.6" fill="#5b9bd8" fill-opacity="1"/>
<rect x="742.51" y="198.60" width="0.85" height="1.0" fill="#5b9bd8" fill-opacity="0.85"/>
<rect x="743.48" y="198.00" width="0.85" height="1.6" fill="#5b9bd8" fill-opacity="1"/>
<rect x="744.45" y="198.00" width="0.85" height="1.6" fill="#5b9bd8" fill-opacity="1"/>
<rect x="745.42" y="198.80" width="0.85" height="0.8" fill="#c3cbd1" fill-opacity="0.5"/>
<rect x="746.39" y="198.60" width="0.85" height="1.0" fill="#5b9bd8" fill-opacity="0.85"/>
<rect x="747.36" y="198.60" width="0.85" height="1.0" fill="#5b9bd8" fill-opacity="0.85"/>
<rect x="748.33" y="198.60" width="0.85" height="1.0" fill="#5b9bd8" fill-opacity="0.85"/>
<rect x="749.30" y="198.00" width="0.85" height="1.6" fill="#5b9bd8" fill-opacity="1"/>
<rect x="750.27" y="198.60" width="0.85" height="1.0" fill="#5b9bd8" fill-opacity="0.85"/>
<rect x="751.24" y="198.60" width="0.85" height="1.0" fill="#5b9bd8" fill-opacity="0.85"/>
<rect x="752.21" y="198.00" width="0.85" height="1.6" fill="#c3cbd1" fill-opacity="1"/>
<rect x="753.18" y="198.00" width="0.85" height="1.6" fill="#c3cbd1" fill-opacity="1"/>
<rect x="755.12" y="198.60" width="0.85" height="1.0" fill="#b7bd3a" fill-opacity="0.85"/>
<rect x="757.06" y="198.00" width="0.85" height="1.6" fill="#c3cbd1" fill-opacity="1"/>
<rect x="758.03" y="198.60" width="0.85" height="1.0" fill="#5b9bd8" fill-opacity="0.85"/>
<rect x="759.00" y="198.60" width="0.85" height="1.0" fill="#5b9bd8" fill-opacity="0.85"/>
<rect x="759.97" y="198.60" width="0.85" height="1.0" fill="#5b9bd8" fill-opacity="0.85"/>
<rect x="760.94" y="198.60" width="0.85" height="1.0" fill="#5b9bd8" fill-opacity="0.85"/>
<rect x="761.91" y="198.60" width="0.85" height="1.0" fill="#5b9bd8" fill-opacity="0.85"/>
<rect x="762.88" y="198.60" width="0.85" height="1.0" fill="#5b9bd8" fill-opacity="0.85"/>
<rect x="763.85" y="198.80" width="0.85" height="0.8" fill="#c3cbd1" fill-opacity="0.5"/>
<rect x="764.82" y="198.00" width="0.85" height="1.6" fill="#5b9bd8" fill-opacity="1"/>
<rect x="765.79" y="198.60" width="0.85" height="1.0" fill="#5b9bd8" fill-opacity="0.85"/>
<rect x="766.76" y="198.60" width="0.85" height="1.0" fill="#5b9bd8" fill-opacity="0.85"/>
<rect x="767.73" y="198.50" width="0.85" height="1.5" fill="#5b9bd8" fill-opacity="0.85"/>
<rect x="768.70" y="198.00" width="0.85" height="1.6" fill="#5b9bd8" fill-opacity="1"/>
<rect x="769.67" y="198.00" width="0.85" height="1.6" fill="#5b9bd8" fill-opacity="1"/>
<rect x="771.61" y="198.00" width="0.85" height="1.6" fill="#7f8c96" fill-opacity="1"/>
<rect x="773.55" y="198.50" width="0.85" height="1.5" fill="#5b9bd8" fill-opacity="0.85"/>
<rect x="774.52" y="198.60" width="0.85" height="1.0" fill="#5b9bd8" fill-opacity="0.85"/>
<rect x="775.49" y="198.60" width="0.85" height="1.0" fill="#5b9bd8" fill-opacity="0.85"/>
<rect x="776.46" y="198.00" width="0.85" height="1.6" fill="#5b9bd8" fill-opacity="1"/>
<rect x="777.43" y="198.00" width="0.85" height="1.6" fill="#5b9bd8" fill-opacity="1"/>
<rect x="778.40" y="198.60" width="0.85" height="1.0" fill="#5b9bd8" fill-opacity="0.85"/>
<rect x="779.37" y="198.60" width="0.85" height="1.0" fill="#5b9bd8" fill-opacity="0.85"/>
<rect x="780.34" y="198.60" width="0.85" height="1.0" fill="#5b9bd8" fill-opacity="0.85"/>
<rect x="781.31" y="198.00" width="0.85" height="1.6" fill="#c3cbd1" fill-opacity="1"/>
<rect x="782.28" y="198.00" width="0.85" height="1.6" fill="#c3cbd1" fill-opacity="1"/>
<rect x="784.22" y="198.60" width="0.85" height="1.0" fill="#b7bd3a" fill-opacity="0.85"/>
<rect x="786.16" y="198.50" width="0.85" height="1.5" fill="#5b9bd8" fill-opacity="0.85"/>
<rect x="787.13" y="198.60" width="0.85" height="1.0" fill="#5b9bd8" fill-opacity="0.85"/>
<rect x="788.10" y="198.60" width="0.85" height="1.0" fill="#5b9bd8" fill-opacity="0.85"/>
<rect x="789.07" y="198.00" width="0.85" height="1.6" fill="#5b9bd8" fill-opacity="1"/>
<rect x="790.04" y="198.00" width="0.85" height="1.6" fill="#5b9bd8" fill-opacity="1"/>
<rect x="791.01" y="198.60" width="0.85" height="1.0" fill="#5b9bd8" fill-opacity="0.85"/>
<rect x="791.98" y="198.60" width="0.85" height="1.0" fill="#5b9bd8" fill-opacity="0.85"/>
<rect x="792.95" y="198.60" width="0.85" height="1.0" fill="#5b9bd8" fill-opacity="0.85"/>
<rect x="793.92" y="198.80" width="0.85" height="0.8" fill="#c3cbd1" fill-opacity="0.5"/>
<rect x="718.26" y="199.98" width="0.85" height="1.6" fill="#c3cbd1" fill-opacity="1"/>
<rect x="718.26" y="203.93" width="0.85" height="1.6" fill="#9c9a80" fill-opacity="1"/>
<rect x="719.23" y="204.53" width="0.85" height="1.0" fill="#9c9a80" fill-opacity="0.85"/>
<rect x="720.20" y="204.53" width="0.85" height="1.0" fill="#9c9a80" fill-opacity="0.85"/>
<rect x="721.17" y="204.53" width="0.85" height="1.0" fill="#9c9a80" fill-opacity="0.85"/>
<rect x="722.14" y="203.93" width="0.85" height="1.6" fill="#9c9a80" fill-opacity="1"/>
<rect x="723.11" y="204.53" width="0.85" height="1.0" fill="#9c9a80" fill-opacity="0.85"/>
<rect x="724.08" y="204.53" width="0.85" height="1.0" fill="#9c9a80" fill-opacity="0.85"/>
<rect x="725.05" y="204.53" width="0.85" height="1.0" fill="#9c9a80" fill-opacity="0.85"/>
<rect x="726.99" y="204.53" width="0.85" height="1.0" fill="#5b9bd8" fill-opacity="0.85"/>
<rect x="727.96" y="203.93" width="0.85" height="1.6" fill="#5b9bd8" fill-opacity="1"/>
<rect x="728.93" y="204.53" width="0.85" height="1.0" fill="#5b9bd8" fill-opacity="0.85"/>
<rect x="729.90" y="204.53" width="0.85" height="1.0" fill="#5b9bd8" fill-opacity="0.85"/>
<rect x="730.87" y="203.93" width="0.85" height="1.6" fill="#5b9bd8" fill-opacity="1"/>
<rect x="731.84" y="203.93" width="0.85" height="1.6" fill="#5b9bd8" fill-opacity="1"/>
<rect x="732.81" y="204.53" width="0.85" height="1.0" fill="#5b9bd8" fill-opacity="0.85"/>
<rect x="733.78" y="203.93" width="0.85" height="1.6" fill="#5b9bd8" fill-opacity="1"/>
<rect x="734.75" y="203.93" width="0.85" height="1.6" fill="#5b9bd8" fill-opacity="1"/>
<rect x="735.72" y="204.53" width="0.85" height="1.0" fill="#5b9bd8" fill-opacity="0.85"/>
<rect x="736.69" y="204.53" width="0.85" height="1.0" fill="#5b9bd8" fill-opacity="0.85"/>
<rect x="737.66" y="204.53" width="0.85" height="1.0" fill="#5b9bd8" fill-opacity="0.85"/>
<rect x="738.63" y="204.53" width="0.85" height="1.0" fill="#5b9bd8" fill-opacity="0.85"/>
<rect x="739.60" y="204.53" width="0.85" height="1.0" fill="#5b9bd8" fill-opacity="0.85"/>
<rect x="740.57" y="203.93" width="0.85" height="1.6" fill="#c3cbd1" fill-opacity="1"/>
<rect x="741.54" y="203.93" width="0.85" height="1.6" fill="#c3cbd1" fill-opacity="1"/>
<rect x="743.48" y="203.93" width="0.85" height="1.6" fill="#c3cbd1" fill-opacity="1"/>
<rect x="722.14" y="206.50" width="0.85" height="1.0" fill="#c9cfd3" fill-opacity="0.85"/>
<rect x="723.11" y="206.50" width="0.85" height="1.0" fill="#c9cfd3" fill-opacity="0.85"/>
<rect x="724.08" y="206.50" width="0.85" height="1.0" fill="#c9cfd3" fill-opacity="0.85"/>
<rect x="725.05" y="206.50" width="0.85" height="1.0" fill="#c9cfd3" fill-opacity="0.85"/>
<rect x="726.02" y="205.90" width="0.85" height="1.6" fill="#c9cfd3" fill-opacity="1"/>
<rect x="727.96" y="205.90" width="0.85" height="1.6" fill="#5b9bd8" fill-opacity="1"/>
<rect x="728.93" y="206.50" width="0.85" height="1.0" fill="#5b9bd8" fill-opacity="0.85"/>
<rect x="729.90" y="206.50" width="0.85" height="1.0" fill="#5b9bd8" fill-opacity="0.85"/>
<rect x="730.87" y="205.90" width="0.85" height="1.6" fill="#5b9bd8" fill-opacity="1"/>
<rect x="732.81" y="206.50" width="0.85" height="1.0" fill="#b7bd3a" fill-opacity="0.85"/>
<rect x="734.75" y="206.50" width="0.85" height="1.0" fill="#5b9bd8" fill-opacity="0.85"/>
<rect x="735.72" y="206.50" width="0.85" height="1.0" fill="#5b9bd8" fill-opacity="0.85"/>
<rect x="736.69" y="206.50" width="0.85" height="1.0" fill="#5b9bd8" fill-opacity="0.85"/>
<rect x="737.66" y="205.90" width="0.85" height="1.6" fill="#5b9bd8" fill-opacity="1"/>
<rect x="738.63" y="206.50" width="0.85" height="1.0" fill="#5b9bd8" fill-opacity="0.85"/>
<rect x="739.60" y="205.90" width="0.85" height="1.6" fill="#c3cbd1" fill-opacity="1"/>
<rect x="740.57" y="205.90" width="0.85" height="1.6" fill="#d65597" fill-opacity="1"/>
<rect x="741.54" y="205.90" width="0.85" height="1.6" fill="#c3cbd1" fill-opacity="1"/>
<rect x="742.51" y="206.70" width="0.85" height="0.8" fill="#c3cbd1" fill-opacity="0.5"/>
<rect x="722.14" y="208.48" width="0.85" height="1.0" fill="#b7bd3a" fill-opacity="0.85"/>
<rect x="723.11" y="207.88" width="0.85" height="1.6" fill="#b7bd3a" fill-opacity="1"/>
<rect x="725.05" y="207.88" width="0.85" height="1.6" fill="#c3cbd1" fill-opacity="1"/>
<rect x="726.02" y="207.88" width="0.85" height="1.6" fill="#5b9bd8" fill-opacity="1"/>
<rect x="726.99" y="208.48" width="0.85" height="1.0" fill="#5b9bd8" fill-opacity="0.85"/>
<rect x="727.96" y="208.48" width="0.85" height="1.0" fill="#5b9bd8" fill-opacity="0.85"/>
<rect x="728.93" y="207.88" width="0.85" height="1.6" fill="#5b9bd8" fill-opacity="1"/>
<rect x="729.90" y="208.68" width="0.85" height="0.8" fill="#c3cbd1" fill-opacity="0.5"/>
<rect x="730.87" y="208.48" width="0.85" height="1.0" fill="#5b9bd8" fill-opacity="0.85"/>
<rect x="732.81" y="208.48" width="0.85" height="1.0" fill="#7f8c96" fill-opacity="0.85"/>
<rect x="734.75" y="207.88" width="0.85" height="1.6" fill="#d65597" fill-opacity="1"/>
<rect x="736.69" y="207.88" width="0.85" height="1.6" fill="#b7bd3a" fill-opacity="1"/>
<rect x="737.66" y="207.88" width="0.85" height="1.6" fill="#b7bd3a" fill-opacity="1"/>
<rect x="739.60" y="207.88" width="0.85" height="1.6" fill="#5b9bd8" fill-opacity="1"/>
<rect x="740.57" y="208.48" width="0.85" height="1.0" fill="#5b9bd8" fill-opacity="0.85"/>
<rect x="741.54" y="208.48" width="0.85" height="1.0" fill="#5b9bd8" fill-opacity="0.85"/>
<rect x="742.51" y="207.88" width="0.85" height="1.6" fill="#5b9bd8" fill-opacity="1"/>
<rect x="743.48" y="208.68" width="0.85" height="0.8" fill="#c3cbd1" fill-opacity="0.5"/>
<rect x="744.45" y="208.38" width="0.85" height="1.5" fill="#5b9bd8" fill-opacity="0.85"/>
<rect x="746.39" y="208.48" width="0.85" height="1.0" fill="#7f8c96" fill-opacity="0.85"/>
<rect x="748.33" y="207.88" width="0.85" height="1.6" fill="#d65597" fill-opacity="1"/>
<rect x="750.27" y="207.88" width="0.85" height="1.6" fill="#b7bd3a" fill-opacity="1"/>
<rect x="751.24" y="207.88" width="0.85" height="1.6" fill="#b7bd3a" fill-opacity="1"/>
<rect x="753.18" y="207.88" width="0.85" height="1.6" fill="#5b9bd8" fill-opacity="1"/>
<rect x="754.15" y="208.48" width="0.85" height="1.0" fill="#5b9bd8" fill-opacity="0.85"/>
<rect x="755.12" y="208.48" width="0.85" height="1.0" fill="#5b9bd8" fill-opacity="0.85"/>
<rect x="756.09" y="207.88" width="0.85" height="1.6" fill="#5b9bd8" fill-opacity="1"/>
<rect x="757.06" y="208.68" width="0.85" height="0.8" fill="#c3cbd1" fill-opacity="0.5"/>
<rect x="758.03" y="208.48" width="0.85" height="1.0" fill="#5b9bd8" fill-opacity="0.85"/>
<rect x="759.97" y="208.48" width="0.85" height="1.0" fill="#7f8c96" fill-opacity="0.85"/>
<rect x="760.94" y="208.48" width="0.85" height="1.0" fill="#b7bd3a" fill-opacity="0.85"/>
<rect x="762.88" y="208.48" width="0.85" height="1.0" fill="#5b9bd8" fill-opacity="0.85"/>
<rect x="763.85" y="208.48" width="0.85" height="1.0" fill="#5b9bd8" fill-opacity="0.85"/>
<rect x="764.82" y="208.48" width="0.85" height="1.0" fill="#5b9bd8" fill-opacity="0.85"/>
<rect x="765.79" y="208.48" width="0.85" height="1.0" fill="#5b9bd8" fill-opacity="0.85"/>
<rect x="766.76" y="208.48" width="0.85" height="1.0" fill="#5b9bd8" fill-opacity="0.85"/>
<rect x="767.73" y="208.48" width="0.85" height="1.0" fill="#5b9bd8" fill-opacity="0.85"/>
<rect x="768.70" y="208.68" width="0.85" height="0.8" fill="#c3cbd1" fill-opacity="0.5"/>
<rect x="769.67" y="208.48" width="0.85" height="1.0" fill="#5b9bd8" fill-opacity="0.85"/>
<rect x="770.64" y="208.48" width="0.85" height="1.0" fill="#5b9bd8" fill-opacity="0.85"/>
<rect x="771.61" y="207.88" width="0.85" height="1.6" fill="#5b9bd8" fill-opacity="1"/>
<rect x="772.58" y="207.88" width="0.85" height="1.6" fill="#5b9bd8" fill-opacity="1"/>
<rect x="773.55" y="207.88" width="0.85" height="1.6" fill="#5b9bd8" fill-opacity="1"/>
<rect x="775.49" y="207.88" width="0.85" height="1.6" fill="#b7bd3a" fill-opacity="1"/>
<rect x="776.46" y="207.88" width="0.85" height="1.6" fill="#b7bd3a" fill-opacity="1"/>
<rect x="778.40" y="207.88" width="0.85" height="1.6" fill="#5b9bd8" fill-opacity="1"/>
<rect x="779.37" y="208.48" width="0.85" height="1.0" fill="#5b9bd8" fill-opacity="0.85"/>
<rect x="780.34" y="208.48" width="0.85" height="1.0" fill="#5b9bd8" fill-opacity="0.85"/>
<rect x="781.31" y="207.88" width="0.85" height="1.6" fill="#5b9bd8" fill-opacity="1"/>
<rect x="782.28" y="208.68" width="0.85" height="0.8" fill="#c3cbd1" fill-opacity="0.5"/>
<rect x="783.25" y="208.38" width="0.85" height="1.5" fill="#5b9bd8" fill-opacity="0.85"/>
<rect x="785.19" y="208.48" width="0.85" height="1.0" fill="#7f8c96" fill-opacity="0.85"/>
<rect x="786.16" y="208.48" width="0.85" height="1.0" fill="#b7bd3a" fill-opacity="0.85"/>
<rect x="788.10" y="208.48" width="0.85" height="1.0" fill="#5b9bd8" fill-opacity="0.85"/>
<rect x="789.07" y="208.48" width="0.85" height="1.0" fill="#5b9bd8" fill-opacity="0.85"/>
<rect x="790.04" y="208.48" width="0.85" height="1.0" fill="#5b9bd8" fill-opacity="0.85"/>
<rect x="791.01" y="208.48" width="0.85" height="1.0" fill="#5b9bd8" fill-opacity="0.85"/>
<rect x="791.98" y="208.48" width="0.85" height="1.0" fill="#5b9bd8" fill-opacity="0.85"/>
<rect x="792.95" y="208.48" width="0.85" height="1.0" fill="#5b9bd8" fill-opacity="0.85"/>
<rect x="793.92" y="208.68" width="0.85" height="0.8" fill="#c3cbd1" fill-opacity="0.5"/>
<rect x="794.89" y="207.88" width="0.85" height="1.6" fill="#5b9bd8" fill-opacity="1"/>
<rect x="795.86" y="208.48" width="0.85" height="1.0" fill="#5b9bd8" fill-opacity="0.85"/>
<rect x="796.83" y="208.48" width="0.85" height="1.0" fill="#5b9bd8" fill-opacity="0.85"/>
<rect x="797.80" y="208.38" width="0.85" height="1.5" fill="#5b9bd8" fill-opacity="0.85"/>
<rect x="798.77" y="207.88" width="0.85" height="1.6" fill="#5b9bd8" fill-opacity="1"/>
<rect x="799.74" y="207.88" width="0.85" height="1.6" fill="#5b9bd8" fill-opacity="1"/>
<rect x="800.71" y="207.88" width="0.85" height="1.6" fill="#c3cbd1" fill-opacity="1"/>
<rect x="802.65" y="207.88" width="0.85" height="1.6" fill="#c3cbd1" fill-opacity="1"/>
<rect x="726.02" y="210.45" width="0.85" height="1.0" fill="#b7bd3a" fill-opacity="0.85"/>
<rect x="726.99" y="210.45" width="0.85" height="1.0" fill="#b7bd3a" fill-opacity="0.85"/>
<rect x="727.96" y="209.85" width="0.85" height="1.6" fill="#b7bd3a" fill-opacity="1"/>
<rect x="728.93" y="210.45" width="0.85" height="1.0" fill="#b7bd3a" fill-opacity="0.85"/>
<rect x="729.90" y="210.45" width="0.85" height="1.0" fill="#b7bd3a" fill-opacity="0.85"/>
<rect x="730.87" y="210.45" width="0.85" height="1.0" fill="#b7bd3a" fill-opacity="0.85"/>
<rect x="732.81" y="209.85" width="0.85" height="1.6" fill="#5b9bd8" fill-opacity="1"/>
<rect x="733.78" y="210.45" width="0.85" height="1.0" fill="#5b9bd8" fill-opacity="0.85"/>
<rect x="734.75" y="210.45" width="0.85" height="1.0" fill="#5b9bd8" fill-opacity="0.85"/>
<rect x="735.72" y="210.45" width="0.85" height="1.0" fill="#5b9bd8" fill-opacity="0.85"/>
<rect x="736.69" y="210.65" width="0.85" height="0.8" fill="#c3cbd1" fill-opacity="0.5"/>
<rect x="722.14" y="211.83" width="0.85" height="1.6" fill="#c3cbd1" fill-opacity="1"/>
<rect x="722.14" y="213.80" width="0.85" height="1.6" fill="#b7bd3a" fill-opacity="1"/>
<rect x="723.11" y="214.40" width="0.85" height="1.0" fill="#b7bd3a" fill-opacity="0.85"/>
<rect x="724.08" y="214.40" width="0.85" height="1.0" fill="#b7bd3a" fill-opacity="0.85"/>
<rect x="726.02" y="213.80" width="0.85" height="1.6" fill="#c3cbd1" fill-opacity="1"/>
<rect x="726.99" y="213.80" width="0.85" height="1.6" fill="#c9cfd3" fill-opacity="1"/>
<rect x="727.96" y="214.40" width="0.85" height="1.0" fill="#c9cfd3" fill-opacity="0.85"/>
<rect x="728.93" y="213.80" width="0.85" height="1.6" fill="#c9cfd3" fill-opacity="1"/>
<rect x="730.87" y="214.40" width="0.85" height="1.0" fill="#5b9bd8" fill-opacity="0.85"/>
<rect x="732.81" y="214.40" width="0.85" height="1.0" fill="#b7bd3a" fill-opacity="0.85"/>
<rect x="734.75" y="213.80" width="0.85" height="1.6" fill="#d65597" fill-opacity="1"/>
<rect x="735.72" y="214.60" width="0.85" height="0.8" fill="#c3cbd1" fill-opacity="0.5"/>
<rect x="737.66" y="214.40" width="0.85" height="1.0" fill="#5b9bd8" fill-opacity="0.85"/>
<rect x="739.60" y="214.40" width="0.85" height="1.0" fill="#7f8c96" fill-opacity="0.85"/>
<rect x="741.54" y="214.40" width="0.85" height="1.0" fill="#5b9bd8" fill-opacity="0.85"/>
<rect x="742.51" y="214.40" width="0.85" height="1.0" fill="#5b9bd8" fill-opacity="0.85"/>
<rect x="743.48" y="214.40" width="0.85" height="1.0" fill="#5b9bd8" fill-opacity="0.85"/>
<rect x="744.45" y="213.80" width="0.85" height="1.6" fill="#5b9bd8" fill-opacity="1"/>
<rect x="745.42" y="214.40" width="0.85" height="1.0" fill="#5b9bd8" fill-opacity="0.85"/>
<rect x="746.39" y="214.60" width="0.85" height="0.8" fill="#c3cbd1" fill-opacity="0.5"/>
<rect x="747.36" y="213.80" width="0.85" height="1.6" fill="#5b9bd8" fill-opacity="1"/>
<rect x="748.33" y="214.40" width="0.85" height="1.0" fill="#5b9bd8" fill-opacity="0.85"/>
<rect x="749.30" y="214.40" width="0.85" height="1.0" fill="#5b9bd8" fill-opacity="0.85"/>
<rect x="750.27" y="214.30" width="0.85" height="1.5" fill="#5b9bd8" fill-opacity="0.85"/>
<rect x="751.24" y="213.80" width="0.85" height="1.6" fill="#5b9bd8" fill-opacity="1"/>
<rect x="752.21" y="213.80" width="0.85" height="1.6" fill="#5b9bd8" fill-opacity="1"/>
<rect x="753.18" y="214.60" width="0.85" height="0.8" fill="#c3cbd1" fill-opacity="0.5"/>
<rect x="755.12" y="214.40" width="0.85" height="1.0" fill="#5b9bd8" fill-opacity="0.85"/>
<rect x="756.09" y="214.40" width="0.85" height="1.0" fill="#b7bd3a" fill-opacity="0.85"/>
<rect x="757.06" y="214.40" width="0.85" height="1.0" fill="#b7bd3a" fill-opacity="0.85"/>
<rect x="758.03" y="213.80" width="0.85" height="1.6" fill="#c3cbd1" fill-opacity="1"/>
<rect x="759.97" y="213.80" width="0.85" height="1.6" fill="#c3cbd1" fill-opacity="1"/>
<rect x="726.02" y="216.38" width="0.85" height="1.0" fill="#b7bd3a" fill-opacity="0.85"/>
<rect x="726.99" y="215.78" width="0.85" height="1.6" fill="#b7bd3a" fill-opacity="1"/>
<rect x="728.93" y="215.78" width="0.85" height="1.6" fill="#c3cbd1" fill-opacity="1"/>
<rect x="729.90" y="216.38" width="0.85" height="1.0" fill="#5b9bd8" fill-opacity="0.85"/>
<rect x="730.87" y="216.38" width="0.85" height="1.0" fill="#5b9bd8" fill-opacity="0.85"/>
<rect x="731.84" y="216.38" width="0.85" height="1.0" fill="#5b9bd8" fill-opacity="0.85"/>
<rect x="732.81" y="215.78" width="0.85" height="1.6" fill="#5b9bd8" fill-opacity="1"/>
<rect x="733.78" y="216.38" width="0.85" height="1.0" fill="#5b9bd8" fill-opacity="0.85"/>
<rect x="734.75" y="215.78" width="0.85" height="1.6" fill="#c3cbd1" fill-opacity="1"/>
<rect x="735.72" y="216.38" width="0.85" height="1.0" fill="#5b9bd8" fill-opacity="0.85"/>
<rect x="736.69" y="215.78" width="0.85" height="1.6" fill="#c3cbd1" fill-opacity="1"/>
<rect x="737.66" y="216.57" width="0.85" height="0.8" fill="#c3cbd1" fill-opacity="0.5"/>
<rect x="738.63" y="216.38" width="0.85" height="1.0" fill="#5b9bd8" fill-opacity="0.85"/>
<rect x="740.57" y="216.38" width="0.85" height="1.0" fill="#b7bd3a" fill-opacity="0.85"/>
<rect x="741.54" y="216.38" width="0.85" height="1.0" fill="#b7bd3a" fill-opacity="0.85"/>
<rect x="742.51" y="216.38" width="0.85" height="1.0" fill="#b7bd3a" fill-opacity="0.85"/>
<rect x="744.45" y="215.78" width="0.85" height="1.6" fill="#5b9bd8" fill-opacity="1"/>
<rect x="745.42" y="216.38" width="0.85" height="1.0" fill="#5b9bd8" fill-opacity="0.85"/>
<rect x="746.39" y="216.38" width="0.85" height="1.0" fill="#5b9bd8" fill-opacity="0.85"/>
<rect x="747.36" y="215.78" width="0.85" height="1.6" fill="#5b9bd8" fill-opacity="1"/>
<rect x="748.33" y="216.57" width="0.85" height="0.8" fill="#c3cbd1" fill-opacity="0.5"/>
<rect x="749.30" y="216.38" width="0.85" height="1.0" fill="#5b9bd8" fill-opacity="0.85"/>
<rect x="751.24" y="216.38" width="0.85" height="1.0" fill="#b7bd3a" fill-opacity="0.85"/>
<rect x="752.21" y="216.38" width="0.85" height="1.0" fill="#b7bd3a" fill-opacity="0.85"/>
<rect x="754.15" y="216.38" width="0.85" height="1.0" fill="#5b9bd8" fill-opacity="0.85"/>
<rect x="755.12" y="216.38" width="0.85" height="1.0" fill="#5b9bd8" fill-opacity="0.85"/>
<rect x="756.09" y="216.38" width="0.85" height="1.0" fill="#5b9bd8" fill-opacity="0.85"/>
<rect x="757.06" y="215.78" width="0.85" height="1.6" fill="#5b9bd8" fill-opacity="1"/>
<rect x="758.03" y="216.38" width="0.85" height="1.0" fill="#5b9bd8" fill-opacity="0.85"/>
<rect x="759.00" y="215.78" width="0.85" height="1.6" fill="#c3cbd1" fill-opacity="1"/>
<rect x="759.97" y="216.38" width="0.85" height="1.0" fill="#5b9bd8" fill-opacity="0.85"/>
<rect x="760.94" y="215.78" width="0.85" height="1.6" fill="#c3cbd1" fill-opacity="1"/>
<rect x="761.91" y="216.57" width="0.85" height="0.8" fill="#c3cbd1" fill-opacity="0.5"/>
<rect x="762.88" y="216.28" width="0.85" height="1.5" fill="#5b9bd8" fill-opacity="0.85"/>
<rect x="764.82" y="216.38" width="0.85" height="1.0" fill="#b7bd3a" fill-opacity="0.85"/>
<rect x="765.79" y="216.38" width="0.85" height="1.0" fill="#b7bd3a" fill-opacity="0.85"/>
<rect x="766.76" y="216.38" width="0.85" height="1.0" fill="#b7bd3a" fill-opacity="0.85"/>
<rect x="768.70" y="215.78" width="0.85" height="1.6" fill="#5b9bd8" fill-opacity="1"/>
<rect x="769.67" y="216.38" width="0.85" height="1.0" fill="#5b9bd8" fill-opacity="0.85"/>
<rect x="770.64" y="216.38" width="0.85" height="1.0" fill="#5b9bd8" fill-opacity="0.85"/>
<rect x="771.61" y="215.78" width="0.85" height="1.6" fill="#5b9bd8" fill-opacity="1"/>
<rect x="772.58" y="216.57" width="0.85" height="0.8" fill="#c3cbd1" fill-opacity="0.5"/>
<rect x="773.55" y="216.28" width="0.85" height="1.5" fill="#5b9bd8" fill-opacity="0.85"/>
<rect x="774.52" y="215.78" width="0.85" height="1.6" fill="#c3cbd1" fill-opacity="1"/>
<rect x="776.46" y="215.78" width="0.85" height="1.6" fill="#c3cbd1" fill-opacity="1"/>
<rect x="729.90" y="218.35" width="0.85" height="1.0" fill="#b7bd3a" fill-opacity="0.85"/>
<rect x="730.87" y="218.35" width="0.85" height="1.0" fill="#b7bd3a" fill-opacity="0.85"/>
<rect x="731.84" y="217.75" width="0.85" height="1.6" fill="#b7bd3a" fill-opacity="1"/>
<rect x="732.81" y="218.35" width="0.85" height="1.0" fill="#b7bd3a" fill-opacity="0.85"/>
<rect x="733.78" y="218.35" width="0.85" height="1.0" fill="#b7bd3a" fill-opacity="0.85"/>
<rect x="734.75" y="218.35" width="0.85" height="1.0" fill="#b7bd3a" fill-opacity="0.85"/>
<rect x="736.69" y="217.75" width="0.85" height="1.6" fill="#5b9bd8" fill-opacity="1"/>
<rect x="737.66" y="218.35" width="0.85" height="1.0" fill="#5b9bd8" fill-opacity="0.85"/>
<rect x="738.63" y="218.35" width="0.85" height="1.0" fill="#5b9bd8" fill-opacity="0.85"/>
<rect x="739.60" y="218.35" width="0.85" height="1.0" fill="#5b9bd8" fill-opacity="0.85"/>
<rect x="740.57" y="218.55" width="0.85" height="0.8" fill="#c3cbd1" fill-opacity="0.5"/>
<rect x="726.02" y="219.73" width="0.85" height="1.6" fill="#c3cbd1" fill-opacity="1"/>
<rect x="722.14" y="221.70" width="0.85" height="1.6" fill="#c3cbd1" fill-opacity="1"/>
<rect x="722.14" y="224.28" width="0.85" height="1.0" fill="#b7bd3a" fill-opacity="0.85"/>
<rect x="723.11" y="224.28" width="0.85" height="1.0" fill="#b7bd3a" fill-opacity="0.85"/>
<rect x="724.08" y="223.68" width="0.85" height="1.6" fill="#b7bd3a" fill-opacity="1"/>
<rect x="725.05" y="224.28" width="0.85" height="1.0" fill="#b7bd3a" fill-opacity="0.85"/>
<rect x="726.02" y="224.28" width="0.85" height="1.0" fill="#b7bd3a" fill-opacity="0.85"/>
<rect x="726.99" y="224.28" width="0.85" height="1.0" fill="#b7bd3a" fill-opacity="0.85"/>
<rect x="728.93" y="223.68" width="0.85" height="1.6" fill="#5b9bd8" fill-opacity="1"/>
<rect x="729.90" y="224.28" width="0.85" height="1.0" fill="#5b9bd8" fill-opacity="0.85"/>
<rect x="730.87" y="223.68" width="0.85" height="1.6" fill="#5b9bd8" fill-opacity="1"/>
<rect x="731.84" y="224.28" width="0.85" height="1.0" fill="#5b9bd8" fill-opacity="0.85"/>
<rect x="732.81" y="224.28" width="0.85" height="1.0" fill="#5b9bd8" fill-opacity="0.85"/>
<rect x="733.78" y="224.47" width="0.85" height="0.8" fill="#c3cbd1" fill-opacity="0.5"/>
<rect x="718.26" y="225.65" width="0.85" height="1.6" fill="#c3cbd1" fill-opacity="1"/>
<rect x="718.26" y="229.60" width="0.85" height="1.6" fill="#9c9a80" fill-opacity="1"/>
<rect x="719.23" y="230.20" width="0.85" height="1.0" fill="#9c9a80" fill-opacity="0.85"/>
<rect x="720.20" y="230.20" width="0.85" height="1.0" fill="#9c9a80" fill-opacity="0.85"/>
<rect x="721.17" y="230.20" width="0.85" height="1.0" fill="#9c9a80" fill-opacity="0.85"/>
<rect x="722.14" y="229.60" width="0.85" height="1.6" fill="#9c9a80" fill-opacity="1"/>
<rect x="723.11" y="230.20" width="0.85" height="1.0" fill="#9c9a80" fill-opacity="0.85"/>
<rect x="724.08" y="230.20" width="0.85" height="1.0" fill="#9c9a80" fill-opacity="0.85"/>
<rect x="725.05" y="230.20" width="0.85" height="1.0" fill="#9c9a80" fill-opacity="0.85"/>
<rect x="726.99" y="229.60" width="0.85" height="1.6" fill="#5b9bd8" fill-opacity="1"/>
<rect x="727.96" y="230.20" width="0.85" height="1.0" fill="#5b9bd8" fill-opacity="0.85"/>
<rect x="728.93" y="230.20" width="0.85" height="1.0" fill="#5b9bd8" fill-opacity="0.85"/>
<rect x="729.90" y="230.20" width="0.85" height="1.0" fill="#5b9bd8" fill-opacity="0.85"/>
<rect x="730.87" y="229.60" width="0.85" height="1.6" fill="#c3cbd1" fill-opacity="1"/>
<rect x="731.84" y="229.60" width="0.85" height="1.6" fill="#c3cbd1" fill-opacity="1"/>
<rect x="733.78" y="229.60" width="0.85" height="1.6" fill="#c3cbd1" fill-opacity="1"/>
<rect x="722.14" y="232.18" width="0.85" height="1.0" fill="#5b9bd8" fill-opacity="0.85"/>
<rect x="723.11" y="231.58" width="0.85" height="1.6" fill="#5b9bd8" fill-opacity="1"/>
<rect x="724.08" y="232.18" width="0.85" height="1.0" fill="#5b9bd8" fill-opacity="0.85"/>
<rect x="725.05" y="232.38" width="0.85" height="0.8" fill="#c3cbd1" fill-opacity="0.5"/>
<rect x="726.02" y="231.58" width="0.85" height="1.6" fill="#5b9bd8" fill-opacity="1"/>
<rect x="726.99" y="232.18" width="0.85" height="1.0" fill="#5b9bd8" fill-opacity="0.85"/>
<rect x="727.96" y="231.58" width="0.85" height="1.6" fill="#5b9bd8" fill-opacity="1"/>
<rect x="728.93" y="231.58" width="0.85" height="1.6" fill="#5b9bd8" fill-opacity="1"/>
<rect x="729.90" y="231.58" width="0.85" height="1.6" fill="#5b9bd8" fill-opacity="1"/>
<rect x="730.87" y="231.58" width="0.85" height="1.6" fill="#5b9bd8" fill-opacity="1"/>
<rect x="731.84" y="232.08" width="0.85" height="1.5" fill="#5b9bd8" fill-opacity="0.85"/>
<rect x="732.81" y="231.58" width="0.85" height="1.6" fill="#5b9bd8" fill-opacity="1"/>
<rect x="733.78" y="232.18" width="0.85" height="1.0" fill="#5b9bd8" fill-opacity="0.85"/>
<rect x="735.72" y="232.18" width="0.85" height="1.0" fill="#b7bd3a" fill-opacity="0.85"/>
<rect x="737.66" y="231.58" width="0.85" height="1.6" fill="#62b1a3" fill-opacity="1"/>
<rect x="738.63" y="231.58" width="0.85" height="1.6" fill="#62b1a3" fill-opacity="1"/>
<rect x="739.60" y="231.58" width="0.85" height="1.6" fill="#62b1a3" fill-opacity="1"/>
<rect x="740.57" y="232.18" width="0.85" height="1.0" fill="#62b1a3" fill-opacity="0.85"/>
<rect x="741.54" y="232.18" width="0.85" height="1.0" fill="#62b1a3" fill-opacity="0.85"/>
<rect x="742.51" y="231.58" width="0.85" height="1.6" fill="#62b1a3" fill-opacity="1"/>
<rect x="743.48" y="231.58" width="0.85" height="1.6" fill="#62b1a3" fill-opacity="1"/>
<rect x="744.45" y="232.38" width="0.85" height="0.8" fill="#c3cbd1" fill-opacity="0.5"/>
<rect x="722.14" y="234.15" width="0.85" height="1.0" fill="#5b9bd8" fill-opacity="0.85"/>
<rect x="723.11" y="233.55" width="0.85" height="1.6" fill="#5b9bd8" fill-opacity="1"/>
<rect x="724.08" y="234.15" width="0.85" height="1.0" fill="#5b9bd8" fill-opacity="0.85"/>
<rect x="725.05" y="234.35" width="0.85" height="0.8" fill="#c3cbd1" fill-opacity="0.5"/>
<rect x="726.02" y="233.55" width="0.85" height="1.6" fill="#5b9bd8" fill-opacity="1"/>
<rect x="726.99" y="234.15" width="0.85" height="1.0" fill="#5b9bd8" fill-opacity="0.85"/>
<rect x="727.96" y="233.55" width="0.85" height="1.6" fill="#5b9bd8" fill-opacity="1"/>
<rect x="728.93" y="233.55" width="0.85" height="1.6" fill="#5b9bd8" fill-opacity="1"/>
<rect x="729.90" y="233.55" width="0.85" height="1.6" fill="#5b9bd8" fill-opacity="1"/>
<rect x="730.87" y="234.15" width="0.85" height="1.0" fill="#5b9bd8" fill-opacity="0.85"/>
<rect x="731.84" y="234.15" width="0.85" height="1.0" fill="#5b9bd8" fill-opacity="0.85"/>
<rect x="732.81" y="233.55" width="0.85" height="1.6" fill="#5b9bd8" fill-opacity="1"/>
<rect x="733.78" y="233.55" width="0.85" height="1.6" fill="#c3cbd1" fill-opacity="1"/>
<rect x="734.75" y="233.55" width="0.85" height="1.6" fill="#d65597" fill-opacity="1"/>
<rect x="735.72" y="234.35" width="0.85" height="0.8" fill="#c3cbd1" fill-opacity="0.5"/>
<rect x="737.66" y="233.55" width="0.85" height="1.6" fill="#d65597" fill-opacity="1"/>
<rect x="738.63" y="234.35" width="0.85" height="0.8" fill="#c3cbd1" fill-opacity="0.5"/>
<rect x="740.57" y="234.15" width="0.85" height="1.0" fill="#5b9bd8" fill-opacity="0.85"/>
<rect x="741.54" y="234.15" width="0.85" height="1.0" fill="#5b9bd8" fill-opacity="0.85"/>
<rect x="742.51" y="234.15" width="0.85" height="1.0" fill="#5b9bd8" fill-opacity="0.85"/>
<rect x="743.48" y="234.15" width="0.85" height="1.0" fill="#5b9bd8" fill-opacity="0.85"/>
<rect x="744.45" y="234.15" width="0.85" height="1.0" fill="#5b9bd8" fill-opacity="0.85"/>
<rect x="745.42" y="234.15" width="0.85" height="1.0" fill="#5b9bd8" fill-opacity="0.85"/>
<rect x="746.39" y="234.35" width="0.85" height="0.8" fill="#c3cbd1" fill-opacity="0.5"/>
<rect x="747.36" y="234.15" width="0.85" height="1.0" fill="#5b9bd8" fill-opacity="0.85"/>
<rect x="748.33" y="234.15" width="0.85" height="1.0" fill="#5b9bd8" fill-opacity="0.85"/>
<rect x="749.30" y="233.55" width="0.85" height="1.6" fill="#5b9bd8" fill-opacity="1"/>
<rect x="750.27" y="233.55" width="0.85" height="1.6" fill="#5b9bd8" fill-opacity="1"/>
<rect x="751.24" y="233.55" width="0.85" height="1.6" fill="#5b9bd8" fill-opacity="1"/>
<rect x="752.21" y="234.35" width="0.85" height="0.8" fill="#c3cbd1" fill-opacity="0.5"/>
<rect x="754.15" y="234.15" width="0.85" height="1.0" fill="#5b9bd8" fill-opacity="0.85"/>
<rect x="755.12" y="234.15" width="0.85" height="1.0" fill="#5b9bd8" fill-opacity="0.85"/>
<rect x="756.09" y="234.15" width="0.85" height="1.0" fill="#5b9bd8" fill-opacity="0.85"/>
<rect x="757.06" y="234.15" width="0.85" height="1.0" fill="#5b9bd8" fill-opacity="0.85"/>
<rect x="758.03" y="234.15" width="0.85" height="1.0" fill="#5b9bd8" fill-opacity="0.85"/>
<rect x="759.00" y="234.15" width="0.85" height="1.0" fill="#5b9bd8" fill-opacity="0.85"/>
<rect x="759.97" y="234.35" width="0.85" height="0.8" fill="#c3cbd1" fill-opacity="0.5"/>
<rect x="760.94" y="233.55" width="0.85" height="1.6" fill="#5b9bd8" fill-opacity="1"/>
<rect x="761.91" y="234.15" width="0.85" height="1.0" fill="#5b9bd8" fill-opacity="0.85"/>
<rect x="762.88" y="234.15" width="0.85" height="1.0" fill="#5b9bd8" fill-opacity="0.85"/>
<rect x="763.85" y="234.05" width="0.85" height="1.5" fill="#5b9bd8" fill-opacity="0.85"/>
<rect x="764.82" y="233.55" width="0.85" height="1.6" fill="#5b9bd8" fill-opacity="1"/>
<rect x="765.79" y="233.55" width="0.85" height="1.6" fill="#5b9bd8" fill-opacity="1"/>
<rect x="766.76" y="233.55" width="0.85" height="1.6" fill="#c3cbd1" fill-opacity="1"/>
<rect x="767.73" y="234.35" width="0.85" height="0.8" fill="#c3cbd1" fill-opacity="0.5"/>
<rect x="722.14" y="238.10" width="0.85" height="1.0" fill="#5b9bd8" fill-opacity="0.85"/>
<rect x="723.11" y="237.50" width="0.85" height="1.6" fill="#5b9bd8" fill-opacity="1"/>
<rect x="724.08" y="238.10" width="0.85" height="1.0" fill="#5b9bd8" fill-opacity="0.85"/>
<rect x="725.05" y="238.30" width="0.85" height="0.8" fill="#c3cbd1" fill-opacity="0.5"/>
<rect x="726.02" y="237.50" width="0.85" height="1.6" fill="#5b9bd8" fill-opacity="1"/>
<rect x="726.99" y="238.10" width="0.85" height="1.0" fill="#5b9bd8" fill-opacity="0.85"/>
<rect x="727.96" y="237.50" width="0.85" height="1.6" fill="#5b9bd8" fill-opacity="1"/>
<rect x="728.93" y="237.50" width="0.85" height="1.6" fill="#5b9bd8" fill-opacity="1"/>
<rect x="729.90" y="237.50" width="0.85" height="1.6" fill="#5b9bd8" fill-opacity="1"/>
<rect x="730.87" y="237.50" width="0.85" height="1.6" fill="#5b9bd8" fill-opacity="1"/>
<rect x="731.84" y="238.00" width="0.85" height="1.5" fill="#5b9bd8" fill-opacity="0.85"/>
<rect x="732.81" y="237.50" width="0.85" height="1.6" fill="#5b9bd8" fill-opacity="1"/>
<rect x="733.78" y="238.10" width="0.85" height="1.0" fill="#5b9bd8" fill-opacity="0.85"/>
<rect x="735.72" y="238.10" width="0.85" height="1.0" fill="#b7bd3a" fill-opacity="0.85"/>
<rect x="737.66" y="237.50" width="0.85" height="1.6" fill="#62b1a3" fill-opacity="1"/>
<rect x="738.63" y="238.10" width="0.85" height="1.0" fill="#62b1a3" fill-opacity="0.85"/>
<rect x="739.60" y="238.10" width="0.85" height="1.0" fill="#62b1a3" fill-opacity="0.85"/>
<rect x="740.57" y="237.50" width="0.85" height="1.6" fill="#62b1a3" fill-opacity="1"/>
<rect x="741.54" y="237.50" width="0.85" height="1.6" fill="#62b1a3" fill-opacity="1"/>
<rect x="742.51" y="238.30" width="0.85" height="0.8" fill="#c3cbd1" fill-opacity="0.5"/>
<rect x="722.14" y="240.08" width="0.85" height="1.0" fill="#5b9bd8" fill-opacity="0.85"/>
<rect x="723.11" y="239.48" width="0.85" height="1.6" fill="#5b9bd8" fill-opacity="1"/>
<rect x="724.08" y="240.08" width="0.85" height="1.0" fill="#5b9bd8" fill-opacity="0.85"/>
<rect x="725.05" y="240.28" width="0.85" height="0.8" fill="#c3cbd1" fill-opacity="0.5"/>
<rect x="726.02" y="239.48" width="0.85" height="1.6" fill="#5b9bd8" fill-opacity="1"/>
<rect x="726.99" y="240.08" width="0.85" height="1.0" fill="#5b9bd8" fill-opacity="0.85"/>
<rect x="727.96" y="239.48" width="0.85" height="1.6" fill="#5b9bd8" fill-opacity="1"/>
<rect x="728.93" y="239.48" width="0.85" height="1.6" fill="#5b9bd8" fill-opacity="1"/>
<rect x="729.90" y="239.48" width="0.85" height="1.6" fill="#5b9bd8" fill-opacity="1"/>
<rect x="730.87" y="240.08" width="0.85" height="1.0" fill="#5b9bd8" fill-opacity="0.85"/>
<rect x="731.84" y="240.08" width="0.85" height="1.0" fill="#5b9bd8" fill-opacity="0.85"/>
<rect x="732.81" y="239.48" width="0.85" height="1.6" fill="#5b9bd8" fill-opacity="1"/>
<rect x="733.78" y="239.48" width="0.85" height="1.6" fill="#c3cbd1" fill-opacity="1"/>
<rect x="734.75" y="239.48" width="0.85" height="1.6" fill="#5b9bd8" fill-opacity="1"/>
<rect x="735.72" y="240.08" width="0.85" height="1.0" fill="#5b9bd8" fill-opacity="0.85"/>
<rect x="736.69" y="240.08" width="0.85" height="1.0" fill="#5b9bd8" fill-opacity="0.85"/>
<rect x="737.66" y="239.48" width="0.85" height="1.6" fill="#5b9bd8" fill-opacity="1"/>
<rect x="738.63" y="240.28" width="0.85" height="0.8" fill="#c3cbd1" fill-opacity="0.5"/>
<rect x="739.60" y="240.08" width="0.85" height="1.0" fill="#5b9bd8" fill-opacity="0.85"/>
<rect x="740.57" y="240.28" width="0.85" height="0.8" fill="#c3cbd1" fill-opacity="0.5"/>
<rect x="742.51" y="239.48" width="0.85" height="1.6" fill="#5b9bd8" fill-opacity="1"/>
<rect x="743.48" y="240.08" width="0.85" height="1.0" fill="#5b9bd8" fill-opacity="0.85"/>
<rect x="744.45" y="240.08" width="0.85" height="1.0" fill="#5b9bd8" fill-opacity="0.85"/>
<rect x="745.42" y="239.48" width="0.85" height="1.6" fill="#5b9bd8" fill-opacity="1"/>
<rect x="746.39" y="240.28" width="0.85" height="0.8" fill="#c3cbd1" fill-opacity="0.5"/>
<rect x="747.36" y="239.98" width="0.85" height="1.5" fill="#5b9bd8" fill-opacity="0.85"/>
<rect x="748.33" y="240.28" width="0.85" height="0.8" fill="#c3cbd1" fill-opacity="0.5"/>
<rect x="750.27" y="239.98" width="0.85" height="1.5" fill="#5b9bd8" fill-opacity="0.85"/>
<rect x="751.24" y="240.08" width="0.85" height="1.0" fill="#5b9bd8" fill-opacity="0.85"/>
<rect x="752.21" y="240.08" width="0.85" height="1.0" fill="#5b9bd8" fill-opacity="0.85"/>
<rect x="753.18" y="239.48" width="0.85" height="1.6" fill="#5b9bd8" fill-opacity="1"/>
<rect x="754.15" y="239.48" width="0.85" height="1.6" fill="#5b9bd8" fill-opacity="1"/>
<rect x="755.12" y="240.08" width="0.85" height="1.0" fill="#5b9bd8" fill-opacity="0.85"/>
<rect x="756.09" y="240.08" width="0.85" height="1.0" fill="#5b9bd8" fill-opacity="0.85"/>
<rect x="757.06" y="240.08" width="0.85" height="1.0" fill="#5b9bd8" fill-opacity="0.85"/>
<rect x="758.03" y="240.28" width="0.85" height="0.8" fill="#c3cbd1" fill-opacity="0.5"/>
<rect x="759.97" y="239.98" width="0.85" height="1.5" fill="#5b9bd8" fill-opacity="0.85"/>
<rect x="760.94" y="240.08" width="0.85" height="1.0" fill="#5b9bd8" fill-opacity="0.85"/>
<rect x="761.91" y="240.08" width="0.85" height="1.0" fill="#5b9bd8" fill-opacity="0.85"/>
<rect x="762.88" y="239.48" width="0.85" height="1.6" fill="#5b9bd8" fill-opacity="1"/>
<rect x="763.85" y="239.48" width="0.85" height="1.6" fill="#5b9bd8" fill-opacity="1"/>
<rect x="764.82" y="240.08" width="0.85" height="1.0" fill="#5b9bd8" fill-opacity="0.85"/>
<rect x="765.79" y="240.08" width="0.85" height="1.0" fill="#5b9bd8" fill-opacity="0.85"/>
<rect x="766.76" y="240.08" width="0.85" height="1.0" fill="#5b9bd8" fill-opacity="0.85"/>
<rect x="767.73" y="239.48" width="0.85" height="1.6" fill="#c3cbd1" fill-opacity="1"/>
<rect x="768.70" y="240.28" width="0.85" height="0.8" fill="#c3cbd1" fill-opacity="0.5"/>
<rect x="722.14" y="244.03" width="0.85" height="1.0" fill="#5b9bd8" fill-opacity="0.85"/>
<rect x="723.11" y="243.43" width="0.85" height="1.6" fill="#5b9bd8" fill-opacity="1"/>
<rect x="724.08" y="244.03" width="0.85" height="1.0" fill="#5b9bd8" fill-opacity="0.85"/>
<rect x="725.05" y="244.22" width="0.85" height="0.8" fill="#c3cbd1" fill-opacity="0.5"/>
<rect x="726.02" y="243.43" width="0.85" height="1.6" fill="#5b9bd8" fill-opacity="1"/>
<rect x="726.99" y="244.03" width="0.85" height="1.0" fill="#5b9bd8" fill-opacity="0.85"/>
<rect x="727.96" y="243.43" width="0.85" height="1.6" fill="#5b9bd8" fill-opacity="1"/>
<rect x="728.93" y="243.43" width="0.85" height="1.6" fill="#5b9bd8" fill-opacity="1"/>
<rect x="729.90" y="243.43" width="0.85" height="1.6" fill="#5b9bd8" fill-opacity="1"/>
<rect x="730.87" y="243.43" width="0.85" height="1.6" fill="#5b9bd8" fill-opacity="1"/>
<rect x="731.84" y="243.93" width="0.85" height="1.5" fill="#5b9bd8" fill-opacity="0.85"/>
<rect x="732.81" y="243.43" width="0.85" height="1.6" fill="#5b9bd8" fill-opacity="1"/>
<rect x="733.78" y="244.03" width="0.85" height="1.0" fill="#5b9bd8" fill-opacity="0.85"/>
<rect x="735.72" y="244.03" width="0.85" height="1.0" fill="#b7bd3a" fill-opacity="0.85"/>
<rect x="737.66" y="243.43" width="0.85" height="1.6" fill="#62b1a3" fill-opacity="1"/>
<rect x="738.63" y="243.43" width="0.85" height="1.6" fill="#62b1a3" fill-opacity="1"/>
<rect x="739.60" y="244.03" width="0.85" height="1.0" fill="#62b1a3" fill-opacity="0.85"/>
<rect x="740.57" y="244.03" width="0.85" height="1.0" fill="#62b1a3" fill-opacity="0.85"/>
<rect x="741.54" y="244.03" width="0.85" height="1.0" fill="#62b1a3" fill-opacity="0.85"/>
<rect x="742.51" y="243.43" width="0.85" height="1.6" fill="#62b1a3" fill-opacity="1"/>
<rect x="743.48" y="244.22" width="0.85" height="0.8" fill="#c3cbd1" fill-opacity="0.5"/>
<rect x="722.14" y="246.00" width="0.85" height="1.0" fill="#5b9bd8" fill-opacity="0.85"/>
<rect x="723.11" y="246.00" width="0.85" height="1.0" fill="#5b9bd8" fill-opacity="0.85"/>
<rect x="724.08" y="246.00" width="0.85" height="1.0" fill="#5b9bd8" fill-opacity="0.85"/>
<rect x="725.05" y="245.40" width="0.85" height="1.6" fill="#5b9bd8" fill-opacity="1"/>
<rect x="726.02" y="246.00" width="0.85" height="1.0" fill="#5b9bd8" fill-opacity="0.85"/>
<rect x="726.99" y="246.20" width="0.85" height="0.8" fill="#c3cbd1" fill-opacity="0.5"/>
<rect x="727.96" y="245.40" width="0.85" height="1.6" fill="#5b9bd8" fill-opacity="1"/>
<rect x="728.93" y="246.00" width="0.85" height="1.0" fill="#5b9bd8" fill-opacity="0.85"/>
<rect x="729.90" y="246.00" width="0.85" height="1.0" fill="#5b9bd8" fill-opacity="0.85"/>
<rect x="730.87" y="245.40" width="0.85" height="1.6" fill="#5b9bd8" fill-opacity="1"/>
<rect x="731.84" y="246.00" width="0.85" height="1.0" fill="#5b9bd8" fill-opacity="0.85"/>
<rect x="732.81" y="246.00" width="0.85" height="1.0" fill="#5b9bd8" fill-opacity="0.85"/>
<rect x="733.78" y="245.40" width="0.85" height="1.6" fill="#5b9bd8" fill-opacity="1"/>
<rect x="734.75" y="245.40" width="0.85" height="1.6" fill="#c3cbd1" fill-opacity="1"/>
<rect x="735.72" y="246.00" width="0.85" height="1.0" fill="#5b9bd8" fill-opacity="0.85"/>
<rect x="736.69" y="246.00" width="0.85" height="1.0" fill="#5b9bd8" fill-opacity="0.85"/>
<rect x="737.66" y="245.90" width="0.85" height="1.5" fill="#5b9bd8" fill-opacity="0.85"/>
<rect x="738.63" y="246.00" width="0.85" height="1.0" fill="#5b9bd8" fill-opacity="0.85"/>
<rect x="739.60" y="246.00" width="0.85" height="1.0" fill="#5b9bd8" fill-opacity="0.85"/>
<rect x="740.57" y="246.00" width="0.85" height="1.0" fill="#5b9bd8" fill-opacity="0.85"/>
<rect x="741.54" y="245.40" width="0.85" height="1.6" fill="#5b9bd8" fill-opacity="1"/>
<rect x="743.48" y="246.00" width="0.85" height="1.0" fill="#b7bd3a" fill-opacity="0.85"/>
<rect x="744.45" y="246.00" width="0.85" height="1.0" fill="#7f8c96" fill-opacity="0.85"/>
<rect x="746.39" y="245.40" width="0.85" height="1.6" fill="#c3cbd1" fill-opacity="1"/>
<rect x="726.02" y="247.98" width="0.85" height="1.0" fill="#5b9bd8" fill-opacity="0.85"/>
<rect x="726.99" y="247.38" width="0.85" height="1.6" fill="#5b9bd8" fill-opacity="1"/>
<rect x="727.96" y="247.98" width="0.85" height="1.0" fill="#5b9bd8" fill-opacity="0.85"/>
<rect x="728.93" y="248.18" width="0.85" height="0.8" fill="#c3cbd1" fill-opacity="0.5"/>
<rect x="729.90" y="247.38" width="0.85" height="1.6" fill="#5b9bd8" fill-opacity="1"/>
<rect x="730.87" y="247.98" width="0.85" height="1.0" fill="#5b9bd8" fill-opacity="0.85"/>
<rect x="731.84" y="247.38" width="0.85" height="1.6" fill="#5b9bd8" fill-opacity="1"/>
<rect x="732.81" y="247.38" width="0.85" height="1.6" fill="#5b9bd8" fill-opacity="1"/>
<rect x="733.78" y="247.38" width="0.85" height="1.6" fill="#5b9bd8" fill-opacity="1"/>
<rect x="734.75" y="247.98" width="0.85" height="1.0" fill="#5b9bd8" fill-opacity="0.85"/>
<rect x="735.72" y="247.98" width="0.85" height="1.0" fill="#5b9bd8" fill-opacity="0.85"/>
<rect x="736.69" y="247.38" width="0.85" height="1.6" fill="#5b9bd8" fill-opacity="1"/>
<rect x="737.66" y="247.38" width="0.85" height="1.6" fill="#c3cbd1" fill-opacity="1"/>
<rect x="738.63" y="247.98" width="0.85" height="1.0" fill="#5b9bd8" fill-opacity="0.85"/>
<rect x="739.60" y="247.98" width="0.85" height="1.0" fill="#5b9bd8" fill-opacity="0.85"/>
<rect x="740.57" y="247.88" width="0.85" height="1.5" fill="#5b9bd8" fill-opacity="0.85"/>
<rect x="741.54" y="247.98" width="0.85" height="1.0" fill="#5b9bd8" fill-opacity="0.85"/>
<rect x="742.51" y="247.98" width="0.85" height="1.0" fill="#5b9bd8" fill-opacity="0.85"/>
<rect x="743.48" y="247.98" width="0.85" height="1.0" fill="#5b9bd8" fill-opacity="0.85"/>
<rect x="744.45" y="247.38" width="0.85" height="1.6" fill="#5b9bd8" fill-opacity="1"/>
<rect x="745.42" y="248.18" width="0.85" height="0.8" fill="#c3cbd1" fill-opacity="0.5"/>
<rect x="746.39" y="247.98" width="0.85" height="1.0" fill="#5b9bd8" fill-opacity="0.85"/>
<rect x="747.36" y="248.18" width="0.85" height="0.8" fill="#c3cbd1" fill-opacity="0.5"/>
<rect x="749.30" y="247.98" width="0.85" height="1.0" fill="#5b9bd8" fill-opacity="0.85"/>
<rect x="750.27" y="247.98" width="0.85" height="1.0" fill="#5b9bd8" fill-opacity="0.85"/>
<rect x="751.24" y="247.88" width="0.85" height="1.5" fill="#5b9bd8" fill-opacity="0.85"/>
<rect x="752.21" y="247.98" width="0.85" height="1.0" fill="#5b9bd8" fill-opacity="0.85"/>
<rect x="753.18" y="247.98" width="0.85" height="1.0" fill="#5b9bd8" fill-opacity="0.85"/>
<rect x="754.15" y="247.98" width="0.85" height="1.0" fill="#5b9bd8" fill-opacity="0.85"/>
<rect x="755.12" y="247.38" width="0.85" height="1.6" fill="#5b9bd8" fill-opacity="1"/>
<rect x="756.09" y="248.18" width="0.85" height="0.8" fill="#c3cbd1" fill-opacity="0.5"/>
<rect x="757.06" y="247.88" width="0.85" height="1.5" fill="#5b9bd8" fill-opacity="0.85"/>
<rect x="758.03" y="248.18" width="0.85" height="0.8" fill="#c3cbd1" fill-opacity="0.5"/>
<rect x="759.97" y="247.88" width="0.85" height="1.5" fill="#5b9bd8" fill-opacity="0.85"/>
<rect x="760.94" y="247.98" width="0.85" height="1.0" fill="#5b9bd8" fill-opacity="0.85"/>
<rect x="761.91" y="247.98" width="0.85" height="1.0" fill="#5b9bd8" fill-opacity="0.85"/>
<rect x="762.88" y="247.38" width="0.85" height="1.6" fill="#5b9bd8" fill-opacity="1"/>
<rect x="763.85" y="247.38" width="0.85" height="1.6" fill="#5b9bd8" fill-opacity="1"/>
<rect x="764.82" y="247.98" width="0.85" height="1.0" fill="#5b9bd8" fill-opacity="0.85"/>
<rect x="765.79" y="247.98" width="0.85" height="1.0" fill="#5b9bd8" fill-opacity="0.85"/>
<rect x="766.76" y="247.98" width="0.85" height="1.0" fill="#5b9bd8" fill-opacity="0.85"/>
<rect x="767.73" y="248.18" width="0.85" height="0.8" fill="#c3cbd1" fill-opacity="0.5"/>
<rect x="769.67" y="247.88" width="0.85" height="1.5" fill="#5b9bd8" fill-opacity="0.85"/>
<rect x="770.64" y="247.98" width="0.85" height="1.0" fill="#5b9bd8" fill-opacity="0.85"/>
<rect x="771.61" y="247.98" width="0.85" height="1.0" fill="#5b9bd8" fill-opacity="0.85"/>
<rect x="772.58" y="247.38" width="0.85" height="1.6" fill="#5b9bd8" fill-opacity="1"/>
<rect x="773.55" y="247.38" width="0.85" height="1.6" fill="#5b9bd8" fill-opacity="1"/>
<rect x="774.52" y="247.98" width="0.85" height="1.0" fill="#5b9bd8" fill-opacity="0.85"/>
<rect x="775.49" y="247.98" width="0.85" height="1.0" fill="#5b9bd8" fill-opacity="0.85"/>
<rect x="776.46" y="247.98" width="0.85" height="1.0" fill="#5b9bd8" fill-opacity="0.85"/>
<rect x="777.43" y="247.38" width="0.85" height="1.6" fill="#c3cbd1" fill-opacity="1"/>
<rect x="778.40" y="248.18" width="0.85" height="0.8" fill="#c3cbd1" fill-opacity="0.5"/>
<rect x="722.14" y="249.35" width="0.85" height="1.6" fill="#c3cbd1" fill-opacity="1"/>
<rect x="723.11" y="249.35" width="0.85" height="1.6" fill="#c3cbd1" fill-opacity="1"/>
<rect x="724.08" y="250.15" width="0.85" height="0.8" fill="#c3cbd1" fill-opacity="0.5"/>
<rect x="718.26" y="251.33" width="0.85" height="1.6" fill="#c3cbd1" fill-opacity="1"/>
<rect x="718.26" y="255.28" width="0.85" height="1.6" fill="#9c9a80" fill-opacity="1"/>
<rect x="719.23" y="255.88" width="0.85" height="1.0" fill="#9c9a80" fill-opacity="0.85"/>
<rect x="720.20" y="255.88" width="0.85" height="1.0" fill="#9c9a80" fill-opacity="0.85"/>
<rect x="721.17" y="255.88" width="0.85" height="1.0" fill="#9c9a80" fill-opacity="0.85"/>
<rect x="722.14" y="255.28" width="0.85" height="1.6" fill="#9c9a80" fill-opacity="1"/>
<rect x="723.11" y="255.88" width="0.85" height="1.0" fill="#9c9a80" fill-opacity="0.85"/>
<rect x="724.08" y="255.88" width="0.85" height="1.0" fill="#9c9a80" fill-opacity="0.85"/>
<rect x="725.05" y="255.88" width="0.85" height="1.0" fill="#9c9a80" fill-opacity="0.85"/>
<rect x="726.99" y="255.88" width="0.85" height="1.0" fill="#5b9bd8" fill-opacity="0.85"/>
<rect x="727.96" y="255.78" width="0.85" height="1.5" fill="#5b9bd8" fill-opacity="0.85"/>
<rect x="728.93" y="255.28" width="0.85" height="1.6" fill="#5b9bd8" fill-opacity="1"/>
<rect x="729.90" y="255.88" width="0.85" height="1.0" fill="#5b9bd8" fill-opacity="0.85"/>
<rect x="730.87" y="255.28" width="0.85" height="1.6" fill="#5b9bd8" fill-opacity="1"/>
<rect x="731.84" y="255.88" width="0.85" height="1.0" fill="#5b9bd8" fill-opacity="0.85"/>
<rect x="732.81" y="255.28" width="0.85" height="1.6" fill="#c3cbd1" fill-opacity="1"/>
<rect x="733.78" y="255.28" width="0.85" height="1.6" fill="#c3cbd1" fill-opacity="1"/>
<rect x="735.72" y="255.28" width="0.85" height="1.6" fill="#c3cbd1" fill-opacity="1"/>
<rect x="722.14" y="257.85" width="0.85" height="1.0" fill="#5b9bd8" fill-opacity="0.85"/>
<rect x="723.11" y="257.85" width="0.85" height="1.0" fill="#5b9bd8" fill-opacity="0.85"/>
<rect x="724.08" y="257.85" width="0.85" height="1.0" fill="#5b9bd8" fill-opacity="0.85"/>
<rect x="725.05" y="257.85" width="0.85" height="1.0" fill="#5b9bd8" fill-opacity="0.85"/>
<rect x="726.02" y="257.25" width="0.85" height="1.6" fill="#5b9bd8" fill-opacity="1"/>
<rect x="726.99" y="257.85" width="0.85" height="1.0" fill="#5b9bd8" fill-opacity="0.85"/>
<rect x="727.96" y="257.85" width="0.85" height="1.0" fill="#5b9bd8" fill-opacity="0.85"/>
<rect x="728.93" y="257.25" width="0.85" height="1.6" fill="#5b9bd8" fill-opacity="1"/>
<rect x="729.90" y="257.85" width="0.85" height="1.0" fill="#5b9bd8" fill-opacity="0.85"/>
<rect x="730.87" y="257.25" width="0.85" height="1.6" fill="#c3cbd1" fill-opacity="1"/>
<rect x="731.84" y="257.25" width="0.85" height="1.6" fill="#c3cbd1" fill-opacity="1"/>
<rect x="732.81" y="258.05" width="0.85" height="0.8" fill="#c3cbd1" fill-opacity="0.5"/>
<rect x="722.14" y="259.82" width="0.85" height="1.0" fill="#b7bd3a" fill-opacity="0.85"/>
<rect x="723.11" y="259.22" width="0.85" height="1.6" fill="#b7bd3a" fill-opacity="1"/>
<rect x="725.05" y="259.22" width="0.85" height="1.6" fill="#c3cbd1" fill-opacity="1"/>
<rect x="726.02" y="259.82" width="0.85" height="1.0" fill="#5b9bd8" fill-opacity="0.85"/>
<rect x="726.99" y="259.22" width="0.85" height="1.6" fill="#5b9bd8" fill-opacity="1"/>
<rect x="727.96" y="259.82" width="0.85" height="1.0" fill="#5b9bd8" fill-opacity="0.85"/>
<rect x="728.93" y="259.82" width="0.85" height="1.0" fill="#5b9bd8" fill-opacity="0.85"/>
<rect x="729.90" y="259.22" width="0.85" height="1.6" fill="#5b9bd8" fill-opacity="1"/>
<rect x="730.87" y="259.22" width="0.85" height="1.6" fill="#5b9bd8" fill-opacity="1"/>
<rect x="731.84" y="259.82" width="0.85" height="1.0" fill="#5b9bd8" fill-opacity="0.85"/>
<rect x="732.81" y="259.22" width="0.85" height="1.6" fill="#5b9bd8" fill-opacity="1"/>
<rect x="733.78" y="259.22" width="0.85" height="1.6" fill="#5b9bd8" fill-opacity="1"/>
<rect x="734.75" y="259.82" width="0.85" height="1.0" fill="#5b9bd8" fill-opacity="0.85"/>
<rect x="735.72" y="259.82" width="0.85" height="1.0" fill="#5b9bd8" fill-opacity="0.85"/>
<rect x="736.69" y="259.82" width="0.85" height="1.0" fill="#5b9bd8" fill-opacity="0.85"/>
<rect x="737.66" y="259.82" width="0.85" height="1.0" fill="#5b9bd8" fill-opacity="0.85"/>
<rect x="738.63" y="259.82" width="0.85" height="1.0" fill="#5b9bd8" fill-opacity="0.85"/>
<rect x="739.60" y="259.22" width="0.85" height="1.6" fill="#c3cbd1" fill-opacity="1"/>
<rect x="740.57" y="259.22" width="0.85" height="1.6" fill="#c3cbd1" fill-opacity="1"/>
<rect x="741.54" y="259.22" width="0.85" height="1.6" fill="#c3cbd1" fill-opacity="1"/>
<rect x="743.48" y="259.22" width="0.85" height="1.6" fill="#c3cbd1" fill-opacity="1"/>
<rect x="726.02" y="261.80" width="0.85" height="1.0" fill="#5b9bd8" fill-opacity="0.85"/>
<rect x="726.99" y="261.20" width="0.85" height="1.6" fill="#5b9bd8" fill-opacity="1"/>
<rect x="727.96" y="261.80" width="0.85" height="1.0" fill="#5b9bd8" fill-opacity="0.85"/>
<rect x="728.93" y="261.80" width="0.85" height="1.0" fill="#5b9bd8" fill-opacity="0.85"/>
<rect x="729.90" y="261.80" width="0.85" height="1.0" fill="#5b9bd8" fill-opacity="0.85"/>
<rect x="730.87" y="261.20" width="0.85" height="1.6" fill="#5b9bd8" fill-opacity="1"/>
<rect x="731.84" y="261.80" width="0.85" height="1.0" fill="#5b9bd8" fill-opacity="0.85"/>
<rect x="732.81" y="261.20" width="0.85" height="1.6" fill="#5b9bd8" fill-opacity="1"/>
<rect x="733.78" y="261.80" width="0.85" height="1.0" fill="#5b9bd8" fill-opacity="0.85"/>
<rect x="734.75" y="261.80" width="0.85" height="1.0" fill="#5b9bd8" fill-opacity="0.85"/>
<rect x="735.72" y="261.80" width="0.85" height="1.0" fill="#5b9bd8" fill-opacity="0.85"/>
<rect x="736.69" y="261.80" width="0.85" height="1.0" fill="#5b9bd8" fill-opacity="0.85"/>
<rect x="737.66" y="261.20" width="0.85" height="1.6" fill="#5b9bd8" fill-opacity="1"/>
<rect x="738.63" y="261.20" width="0.85" height="1.6" fill="#c3cbd1" fill-opacity="1"/>
<rect x="739.60" y="261.70" width="0.85" height="1.5" fill="#5b9bd8" fill-opacity="0.85"/>
<rect x="740.57" y="261.80" width="0.85" height="1.0" fill="#5b9bd8" fill-opacity="0.85"/>
<rect x="741.54" y="261.80" width="0.85" height="1.0" fill="#5b9bd8" fill-opacity="0.85"/>
<rect x="742.51" y="261.80" width="0.85" height="1.0" fill="#5b9bd8" fill-opacity="0.85"/>
<rect x="743.48" y="261.20" width="0.85" height="1.6" fill="#5b9bd8" fill-opacity="1"/>
<rect x="744.45" y="261.80" width="0.85" height="1.0" fill="#5b9bd8" fill-opacity="0.85"/>
<rect x="745.42" y="261.20" width="0.85" height="1.6" fill="#5b9bd8" fill-opacity="1"/>
<rect x="746.39" y="261.80" width="0.85" height="1.0" fill="#5b9bd8" fill-opacity="0.85"/>
<rect x="747.36" y="261.80" width="0.85" height="1.0" fill="#5b9bd8" fill-opacity="0.85"/>
<rect x="748.33" y="261.80" width="0.85" height="1.0" fill="#5b9bd8" fill-opacity="0.85"/>
<rect x="749.30" y="261.80" width="0.85" height="1.0" fill="#5b9bd8" fill-opacity="0.85"/>
<rect x="750.27" y="261.20" width="0.85" height="1.6" fill="#5b9bd8" fill-opacity="1"/>
<rect x="751.24" y="261.20" width="0.85" height="1.6" fill="#c3cbd1" fill-opacity="1"/>
<rect x="752.21" y="262.00" width="0.85" height="0.8" fill="#c3cbd1" fill-opacity="0.5"/>
<rect x="726.02" y="263.77" width="0.85" height="1.0" fill="#5b9bd8" fill-opacity="0.85"/>
<rect x="726.99" y="263.17" width="0.85" height="1.6" fill="#5b9bd8" fill-opacity="1"/>
<rect x="727.96" y="263.77" width="0.85" height="1.0" fill="#5b9bd8" fill-opacity="0.85"/>
<rect x="728.93" y="263.77" width="0.85" height="1.0" fill="#5b9bd8" fill-opacity="0.85"/>
<rect x="729.90" y="263.17" width="0.85" height="1.6" fill="#5b9bd8" fill-opacity="1"/>
<rect x="730.87" y="263.17" width="0.85" height="1.6" fill="#c3cbd1" fill-opacity="1"/>
<rect x="731.84" y="263.17" width="0.85" height="1.6" fill="#62b1a3" fill-opacity="1"/>
<rect x="732.81" y="263.17" width="0.85" height="1.6" fill="#62b1a3" fill-opacity="1"/>
<rect x="733.78" y="263.77" width="0.85" height="1.0" fill="#62b1a3" fill-opacity="0.85"/>
<rect x="734.75" y="263.77" width="0.85" height="1.0" fill="#62b1a3" fill-opacity="0.85"/>
<rect x="735.72" y="263.77" width="0.85" height="1.0" fill="#62b1a3" fill-opacity="0.85"/>
<rect x="737.66" y="263.17" width="0.85" height="1.6" fill="#62b1a3" fill-opacity="1"/>
<rect x="738.63" y="263.77" width="0.85" height="1.0" fill="#62b1a3" fill-opacity="0.85"/>
<rect x="739.60" y="263.77" width="0.85" height="1.0" fill="#62b1a3" fill-opacity="0.85"/>
<rect x="740.57" y="263.77" width="0.85" height="1.0" fill="#62b1a3" fill-opacity="0.85"/>
<rect x="741.54" y="263.17" width="0.85" height="1.6" fill="#62b1a3" fill-opacity="1"/>
<rect x="743.48" y="263.17" width="0.85" height="1.6" fill="#62b1a3" fill-opacity="1"/>
<rect x="744.45" y="263.77" width="0.85" height="1.0" fill="#62b1a3" fill-opacity="0.85"/>
<rect x="745.42" y="263.77" width="0.85" height="1.0" fill="#62b1a3" fill-opacity="0.85"/>
<rect x="746.39" y="263.77" width="0.85" height="1.0" fill="#62b1a3" fill-opacity="0.85"/>
<rect x="747.36" y="263.77" width="0.85" height="1.0" fill="#62b1a3" fill-opacity="0.85"/>
<rect x="748.33" y="263.97" width="0.85" height="0.8" fill="#62b1a3" fill-opacity="0.5"/>
<rect x="750.27" y="263.17" width="0.85" height="1.6" fill="#62b1a3" fill-opacity="1"/>
<rect x="752.21" y="263.77" width="0.85" height="1.0" fill="#b7bd3a" fill-opacity="0.85"/>
<rect x="754.15" y="263.77" width="0.85" height="1.0" fill="#5b9bd8" fill-opacity="0.85"/>
<rect x="755.12" y="263.77" width="0.85" height="1.0" fill="#5b9bd8" fill-opacity="0.85"/>
<rect x="756.09" y="263.77" width="0.85" height="1.0" fill="#5b9bd8" fill-opacity="0.85"/>
<rect x="757.06" y="263.17" width="0.85" height="1.6" fill="#5b9bd8" fill-opacity="1"/>
<rect x="758.03" y="263.77" width="0.85" height="1.0" fill="#5b9bd8" fill-opacity="0.85"/>
<rect x="759.00" y="263.97" width="0.85" height="0.8" fill="#c3cbd1" fill-opacity="0.5"/>
<rect x="759.97" y="263.17" width="0.85" height="1.6" fill="#5b9bd8" fill-opacity="1"/>
<rect x="760.94" y="263.77" width="0.85" height="1.0" fill="#5b9bd8" fill-opacity="0.85"/>
<rect x="761.91" y="263.77" width="0.85" height="1.0" fill="#5b9bd8" fill-opacity="0.85"/>
<rect x="762.88" y="263.67" width="0.85" height="1.5" fill="#5b9bd8" fill-opacity="0.85"/>
<rect x="763.85" y="263.17" width="0.85" height="1.6" fill="#5b9bd8" fill-opacity="1"/>
<rect x="764.82" y="263.17" width="0.85" height="1.6" fill="#5b9bd8" fill-opacity="1"/>
<rect x="765.79" y="263.17" width="0.85" height="1.6" fill="#c3cbd1" fill-opacity="1"/>
<rect x="766.76" y="263.97" width="0.85" height="0.8" fill="#c3cbd1" fill-opacity="0.5"/>
<rect x="726.02" y="265.75" width="0.85" height="1.0" fill="#b7bd3a" fill-opacity="0.85"/>
<rect x="726.99" y="265.75" width="0.85" height="1.0" fill="#b7bd3a" fill-opacity="0.85"/>
<rect x="727.96" y="265.15" width="0.85" height="1.6" fill="#b7bd3a" fill-opacity="1"/>
<rect x="728.93" y="265.75" width="0.85" height="1.0" fill="#b7bd3a" fill-opacity="0.85"/>
<rect x="729.90" y="265.75" width="0.85" height="1.0" fill="#b7bd3a" fill-opacity="0.85"/>
<rect x="730.87" y="265.75" width="0.85" height="1.0" fill="#b7bd3a" fill-opacity="0.85"/>
<rect x="732.81" y="265.75" width="0.85" height="1.0" fill="#5b9bd8" fill-opacity="0.85"/>
<rect x="733.78" y="265.75" width="0.85" height="1.0" fill="#5b9bd8" fill-opacity="0.85"/>
<rect x="734.75" y="265.75" width="0.85" height="1.0" fill="#5b9bd8" fill-opacity="0.85"/>
<rect x="735.72" y="265.75" width="0.85" height="1.0" fill="#5b9bd8" fill-opacity="0.85"/>
<rect x="736.69" y="265.15" width="0.85" height="1.6" fill="#5b9bd8" fill-opacity="1"/>
<rect x="737.66" y="265.15" width="0.85" height="1.6" fill="#5b9bd8" fill-opacity="1"/>
<rect x="738.63" y="265.75" width="0.85" height="1.0" fill="#5b9bd8" fill-opacity="0.85"/>
<rect x="739.60" y="265.75" width="0.85" height="1.0" fill="#5b9bd8" fill-opacity="0.85"/>
<rect x="740.57" y="265.75" width="0.85" height="1.0" fill="#5b9bd8" fill-opacity="0.85"/>
<rect x="741.54" y="265.15" width="0.85" height="1.6" fill="#c3cbd1" fill-opacity="1"/>
<rect x="742.51" y="265.15" width="0.85" height="1.6" fill="#c3cbd1" fill-opacity="1"/>
<rect x="743.48" y="265.95" width="0.85" height="0.8" fill="#c3cbd1" fill-opacity="0.5"/>
<rect x="722.14" y="267.12" width="0.85" height="1.6" fill="#c3cbd1" fill-opacity="1"/>
<rect x="722.14" y="269.10" width="0.85" height="1.6" fill="#5b9bd8" fill-opacity="1"/>
<rect x="723.11" y="269.70" width="0.85" height="1.0" fill="#5b9bd8" fill-opacity="0.85"/>
<rect x="724.08" y="269.70" width="0.85" height="1.0" fill="#5b9bd8" fill-opacity="0.85"/>
<rect x="725.05" y="269.70" width="0.85" height="1.0" fill="#5b9bd8" fill-opacity="0.85"/>
<rect x="726.02" y="269.10" width="0.85" height="1.6" fill="#c3cbd1" fill-opacity="1"/>
<rect x="726.99" y="269.10" width="0.85" height="1.6" fill="#c3cbd1" fill-opacity="1"/>
<rect x="727.96" y="269.90" width="0.85" height="0.8" fill="#c3cbd1" fill-opacity="0.5"/>
<rect x="718.26" y="271.07" width="0.85" height="1.6" fill="#c3cbd1" fill-opacity="1"/>
<rect x="718.26" y="275.02" width="0.85" height="1.6" fill="#9c9a80" fill-opacity="1"/>
<rect x="719.23" y="275.62" width="0.85" height="1.0" fill="#9c9a80" fill-opacity="0.85"/>
<rect x="720.20" y="275.62" width="0.85" height="1.0" fill="#9c9a80" fill-opacity="0.85"/>
<rect x="721.17" y="275.62" width="0.85" height="1.0" fill="#9c9a80" fill-opacity="0.85"/>
<rect x="722.14" y="275.02" width="0.85" height="1.6" fill="#9c9a80" fill-opacity="1"/>
<rect x="723.11" y="275.62" width="0.85" height="1.0" fill="#9c9a80" fill-opacity="0.85"/>
<rect x="724.08" y="275.62" width="0.85" height="1.0" fill="#9c9a80" fill-opacity="0.85"/>
<rect x="725.05" y="275.62" width="0.85" height="1.0" fill="#9c9a80" fill-opacity="0.85"/>
<rect x="726.99" y="275.62" width="0.85" height="1.0" fill="#5b9bd8" fill-opacity="0.85"/>
<rect x="727.96" y="275.02" width="0.85" height="1.6" fill="#5b9bd8" fill-opacity="1"/>
<rect x="728.93" y="275.62" width="0.85" height="1.0" fill="#5b9bd8" fill-opacity="0.85"/>
<rect x="729.90" y="275.62" width="0.85" height="1.0" fill="#5b9bd8" fill-opacity="0.85"/>
<rect x="730.87" y="275.02" width="0.85" height="1.6" fill="#5b9bd8" fill-opacity="1"/>
<rect x="731.84" y="275.02" width="0.85" height="1.6" fill="#5b9bd8" fill-opacity="1"/>
<rect x="732.81" y="275.62" width="0.85" height="1.0" fill="#5b9bd8" fill-opacity="0.85"/>
<rect x="733.78" y="275.62" width="0.85" height="1.0" fill="#5b9bd8" fill-opacity="0.85"/>
<rect x="734.75" y="275.62" width="0.85" height="1.0" fill="#5b9bd8" fill-opacity="0.85"/>
<rect x="735.72" y="275.02" width="0.85" height="1.6" fill="#c3cbd1" fill-opacity="1"/>
<rect x="736.69" y="275.02" width="0.85" height="1.6" fill="#c3cbd1" fill-opacity="1"/>
<rect x="738.63" y="275.02" width="0.85" height="1.6" fill="#c3cbd1" fill-opacity="1"/>
<rect x="722.14" y="277.50" width="0.85" height="1.5" fill="#5b9bd8" fill-opacity="0.85"/>
<rect x="723.11" y="277.60" width="0.85" height="1.0" fill="#5b9bd8" fill-opacity="0.85"/>
<rect x="724.08" y="277.60" width="0.85" height="1.0" fill="#5b9bd8" fill-opacity="0.85"/>
<rect x="725.05" y="277.60" width="0.85" height="1.0" fill="#5b9bd8" fill-opacity="0.85"/>
<rect x="726.02" y="277.00" width="0.85" height="1.6" fill="#5b9bd8" fill-opacity="1"/>
<rect x="726.99" y="277.60" width="0.85" height="1.0" fill="#5b9bd8" fill-opacity="0.85"/>
<rect x="727.96" y="277.00" width="0.85" height="1.6" fill="#5b9bd8" fill-opacity="1"/>
<rect x="728.93" y="277.60" width="0.85" height="1.0" fill="#5b9bd8" fill-opacity="0.85"/>
<rect x="729.90" y="277.60" width="0.85" height="1.0" fill="#5b9bd8" fill-opacity="0.85"/>
<rect x="730.87" y="277.60" width="0.85" height="1.0" fill="#5b9bd8" fill-opacity="0.85"/>
<rect x="731.84" y="277.60" width="0.85" height="1.0" fill="#5b9bd8" fill-opacity="0.85"/>
<rect x="732.81" y="277.00" width="0.85" height="1.6" fill="#5b9bd8" fill-opacity="1"/>
<rect x="734.75" y="277.60" width="0.85" height="1.0" fill="#b7bd3a" fill-opacity="0.85"/>
<rect x="736.69" y="277.60" width="0.85" height="1.0" fill="#5b9bd8" fill-opacity="0.85"/>
<rect x="737.66" y="277.60" width="0.85" height="1.0" fill="#5b9bd8" fill-opacity="0.85"/>
<rect x="738.63" y="277.00" width="0.85" height="1.6" fill="#5b9bd8" fill-opacity="1"/>
<rect x="739.60" y="277.00" width="0.85" height="1.6" fill="#5b9bd8" fill-opacity="1"/>
<rect x="740.57" y="277.60" width="0.85" height="1.0" fill="#5b9bd8" fill-opacity="0.85"/>
<rect x="741.54" y="277.00" width="0.85" height="1.6" fill="#5b9bd8" fill-opacity="1"/>
<rect x="742.51" y="277.60" width="0.85" height="1.0" fill="#5b9bd8" fill-opacity="0.85"/>
<rect x="743.48" y="277.60" width="0.85" height="1.0" fill="#5b9bd8" fill-opacity="0.85"/>
<rect x="744.45" y="277.60" width="0.85" height="1.0" fill="#5b9bd8" fill-opacity="0.85"/>
<rect x="745.42" y="277.60" width="0.85" height="1.0" fill="#5b9bd8" fill-opacity="0.85"/>
<rect x="746.39" y="277.00" width="0.85" height="1.6" fill="#5b9bd8" fill-opacity="1"/>
<rect x="747.36" y="277.00" width="0.85" height="1.6" fill="#c3cbd1" fill-opacity="1"/>
<rect x="748.33" y="277.60" width="0.85" height="1.0" fill="#5b9bd8" fill-opacity="0.85"/>
<rect x="749.30" y="277.50" width="0.85" height="1.5" fill="#5b9bd8" fill-opacity="0.85"/>
<rect x="750.27" y="277.00" width="0.85" height="1.6" fill="#5b9bd8" fill-opacity="1"/>
<rect x="751.24" y="277.60" width="0.85" height="1.0" fill="#5b9bd8" fill-opacity="0.85"/>
<rect x="752.21" y="277.00" width="0.85" height="1.6" fill="#5b9bd8" fill-opacity="1"/>
<rect x="753.18" y="277.60" width="0.85" height="1.0" fill="#5b9bd8" fill-opacity="0.85"/>
<rect x="754.15" y="277.80" width="0.85" height="0.8" fill="#c3cbd1" fill-opacity="0.5"/>
<rect x="756.09" y="277.00" width="0.85" height="1.6" fill="#d65597" fill-opacity="1"/>
<rect x="757.06" y="277.00" width="0.85" height="1.6" fill="#d65597" fill-opacity="1"/>
<rect x="758.03" y="277.00" width="0.85" height="1.6" fill="#d65597" fill-opacity="1"/>
<rect x="759.00" y="277.00" width="0.85" height="1.6" fill="#c3cbd1" fill-opacity="1"/>
<rect x="759.97" y="277.80" width="0.85" height="0.8" fill="#c3cbd1" fill-opacity="0.5"/>
<rect x="718.26" y="278.97" width="0.85" height="1.6" fill="#c3cbd1" fill-opacity="1"/>
<rect x="718.26" y="283.52" width="0.85" height="1.0" fill="#5b9bd8" fill-opacity="0.85"/>
<rect x="719.23" y="282.92" width="0.85" height="1.6" fill="#5b9bd8" fill-opacity="1"/>
<rect x="720.20" y="283.52" width="0.85" height="1.0" fill="#5b9bd8" fill-opacity="0.85"/>
<rect x="721.17" y="283.52" width="0.85" height="1.0" fill="#5b9bd8" fill-opacity="0.85"/>
<rect x="722.14" y="282.92" width="0.85" height="1.6" fill="#5b9bd8" fill-opacity="1"/>
<rect x="723.11" y="282.92" width="0.85" height="1.6" fill="#5b9bd8" fill-opacity="1"/>
<rect x="724.08" y="283.52" width="0.85" height="1.0" fill="#5b9bd8" fill-opacity="0.85"/>
<rect x="725.05" y="283.52" width="0.85" height="1.0" fill="#5b9bd8" fill-opacity="0.85"/>
<rect x="726.02" y="283.52" width="0.85" height="1.0" fill="#5b9bd8" fill-opacity="0.85"/>
<rect x="726.99" y="282.92" width="0.85" height="1.6" fill="#c3cbd1" fill-opacity="1"/>
<rect x="727.96" y="282.92" width="0.85" height="1.6" fill="#c3cbd1" fill-opacity="1"/>
<rect x="728.93" y="283.72" width="0.85" height="0.8" fill="#c3cbd1" fill-opacity="0.5"/>
<rect x="714.38" y="285.50" width="0.85" height="1.0" fill="#7f8c96" fill-opacity="0.85"/>
<rect x="715.35" y="284.90" width="0.85" height="1.6" fill="#7f8c96" fill-opacity="1"/>
<rect x="716.32" y="285.50" width="0.85" height="1.0" fill="#5b9bd8" fill-opacity="0.85"/>
<rect x="717.29" y="285.50" width="0.85" height="1.0" fill="#5b9bd8" fill-opacity="0.85"/>
<rect x="718.26" y="285.50" width="0.85" height="1.0" fill="#5b9bd8" fill-opacity="0.85"/>
<rect x="719.23" y="285.50" width="0.85" height="1.0" fill="#5b9bd8" fill-opacity="0.85"/>
<rect x="720.20" y="285.40" width="0.85" height="1.5" fill="#5b9bd8" fill-opacity="0.85"/>
<rect x="721.17" y="284.90" width="0.85" height="1.6" fill="#5b9bd8" fill-opacity="1"/>
<rect x="722.14" y="285.50" width="0.85" height="1.0" fill="#7f8c96" fill-opacity="0.85"/>
<rect x="710.50" y="287.48" width="0.85" height="1.0" fill="#7f8c96" fill-opacity="0.85"/>
<rect x="711.47" y="286.88" width="0.85" height="1.6" fill="#7f8c96" fill-opacity="1"/>
<rect x="712.44" y="286.88" width="0.85" height="1.6" fill="#5b9bd8" fill-opacity="1"/>
<rect x="713.41" y="287.48" width="0.85" height="1.0" fill="#5b9bd8" fill-opacity="0.85"/>
<rect x="714.38" y="286.88" width="0.85" height="1.6" fill="#5b9bd8" fill-opacity="1"/>
<rect x="715.35" y="287.38" width="0.85" height="1.5" fill="#5b9bd8" fill-opacity="0.85"/>
<rect x="716.32" y="287.48" width="0.85" height="1.0" fill="#7f8c96" fill-opacity="0.85"/>
<rect x="710.50" y="289.45" width="0.85" height="1.0" fill="#7f8c96" fill-opacity="0.85"/>
<rect x="711.47" y="288.85" width="0.85" height="1.6" fill="#7f8c96" fill-opacity="1"/>
<rect x="712.44" y="288.85" width="0.85" height="1.6" fill="#5b9bd8" fill-opacity="1"/>
<rect x="713.41" y="288.85" width="0.85" height="1.6" fill="#5b9bd8" fill-opacity="1"/>
<rect x="714.38" y="289.45" width="0.85" height="1.0" fill="#5b9bd8" fill-opacity="0.85"/>
<rect x="715.35" y="288.85" width="0.85" height="1.6" fill="#5b9bd8" fill-opacity="1"/>
<rect x="716.32" y="289.45" width="0.85" height="1.0" fill="#7f8c96" fill-opacity="0.85"/></g>
<rect x="798" y="55.5" width="1" height="717" fill="#2e4251"/>
<rect x="798" y="120.5" width="2" height="2" fill="#e0602a"/>
</svg>
<div id="status">
  <span style="left:309.5px;font-size:12.6px">Ln 16, Col 10</span>
  <span style="left:400.5px;font-size:12.5px">Spaces: 4</span>
  <span style="left:471px">UTF-8</span>
  <span style="left:523px">LF</span>
  <span style="left:551.5px;font-size:12px;top:2.5px;letter-spacing:-0.3px">{ }</span>
  <span style="left:570.5px">HTML</span>
  <svg class="abs" style="left:0;top:0" width="800" height="22" viewBox="0 773 800 22" fill="none" stroke="#a7b2ba" stroke-width="1.15">
    <path d="M620.75 786.75 A5.3 5.3 0 1 1 628.25 786.75 M622.4 785.1 A3 3 0 1 1 626.6 785.1"/>
    <circle cx="624.5" cy="783" r="1.1" fill="#a7b2ba" stroke="none"/>
    <path d="M624.5 783.5 V790" stroke-width="2"/>
  </svg>
  <span style="left:634px">Go Live</span>
  <span style="left:692px">Codeium: {...}</span>
  <svg class="abs" style="left:784px;top:4px" width="13" height="14" viewBox="0 0 13 14" fill="none" stroke="#a7b2ba" stroke-width="1.1"><path d="M2 10.5 L2 6 A4.5 4.5 0 0 1 11 6 L11 10.5 L12 11.5 L1 11.5 Z M5 12.5 A1.5 1.5 0 0 0 8 12.5"/></svg>
</div>
<svg class="abs" style="left:0;top:0" width="800" height="795">
  <rect x="604.5" y="772.5" width="93" height="20" rx="10" ry="10" fill="none" stroke="#e2561f" stroke-width="3"/>
  <path d="M695 635 L648 754" stroke="#e2561f" stroke-width="3" fill="none"/>
  <path d="M642.3 766.5 L640.3 749.8 L654.3 755.8 Z" fill="#e2561f"/>
  <text x="646" y="628.3" font-family="Liberation Sans" font-size="18.5" fill="#e2561f" stroke="#e2561f" stroke-width="0.3">Click Go Live</text>
</svg>
<div class="abs" style="left:0;top:794px;width:800px;height:1px;background:#3a4750"></div>
</body></html>
